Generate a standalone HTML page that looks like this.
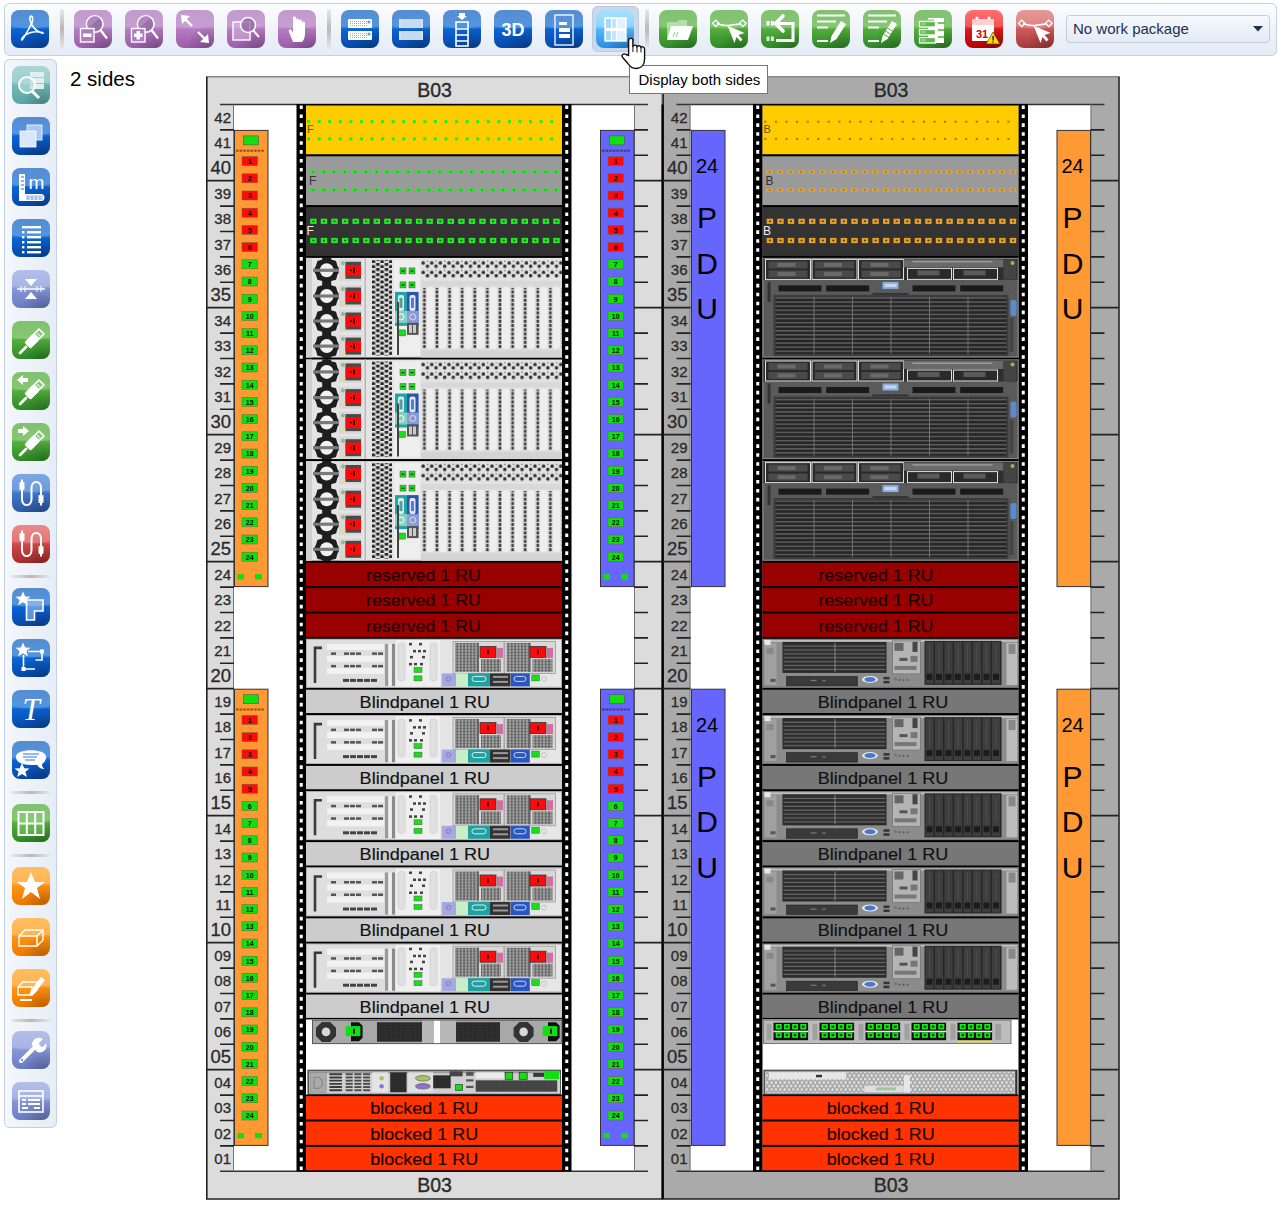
<!DOCTYPE html><html><head><meta charset="utf-8"><style>html,body{margin:0;padding:0;background:#fff;overflow:hidden}svg{display:block}</style></head><body><svg width="1287" height="1226" viewBox="0 0 1287 1226"><defs><linearGradient id="g_blue" x1="0" y1="0" x2="0" y2="1"><stop offset="0" stop-color="#3c7cca"/><stop offset="0.45" stop-color="#3a86dc"/><stop offset="0.5" stop-color="#0a64d6"/><stop offset="1" stop-color="#0848a6"/></linearGradient><linearGradient id="g_purple" x1="0" y1="0" x2="0" y2="1"><stop offset="0" stop-color="#b88cc4"/><stop offset="0.45" stop-color="#c090cc"/><stop offset="0.5" stop-color="#b57cc3"/><stop offset="1" stop-color="#9c5ca8"/></linearGradient><linearGradient id="g_green" x1="0" y1="0" x2="0" y2="1"><stop offset="0" stop-color="#6eb85a"/><stop offset="0.45" stop-color="#74c060"/><stop offset="0.5" stop-color="#52ae3c"/><stop offset="1" stop-color="#2e8a26"/></linearGradient><linearGradient id="g_teal" x1="0" y1="0" x2="0" y2="1"><stop offset="0" stop-color="#9fd0d0"/><stop offset="0.45" stop-color="#8ec6c6"/><stop offset="0.5" stop-color="#72b8b8"/><stop offset="1" stop-color="#5aa6a6"/></linearGradient><linearGradient id="g_orange" x1="0" y1="0" x2="0" y2="1"><stop offset="0" stop-color="#ffb54a"/><stop offset="0.45" stop-color="#ffa83a"/><stop offset="0.5" stop-color="#ff9410"/><stop offset="1" stop-color="#f07800"/></linearGradient><linearGradient id="g_red" x1="0" y1="0" x2="0" y2="1"><stop offset="0" stop-color="#ff5a5a"/><stop offset="0.45" stop-color="#f03c3c"/><stop offset="0.5" stop-color="#e01818"/><stop offset="1" stop-color="#b80000"/></linearGradient><linearGradient id="g_rose" x1="0" y1="0" x2="0" y2="1"><stop offset="0" stop-color="#e08a8a"/><stop offset="0.45" stop-color="#d87070"/><stop offset="0.5" stop-color="#cc5a5a"/><stop offset="1" stop-color="#a83a3a"/></linearGradient><linearGradient id="g_lav" x1="0" y1="0" x2="0" y2="1"><stop offset="0" stop-color="#a9b6e6"/><stop offset="0.45" stop-color="#9aa8e0"/><stop offset="0.5" stop-color="#8696d6"/><stop offset="1" stop-color="#6a7cc4"/></linearGradient><linearGradient id="g_active" x1="0" y1="0" x2="0" y2="1"><stop offset="0" stop-color="#9adcff"/><stop offset="0.45" stop-color="#7ccfff"/><stop offset="0.5" stop-color="#52b8f8"/><stop offset="1" stop-color="#2a8ce8"/></linearGradient><radialGradient id="icshade" cx="0.85" cy="1" r="0.6"><stop offset="0" stop-color="#000" stop-opacity="0.22"/><stop offset="1" stop-color="#000" stop-opacity="0"/></radialGradient><linearGradient id="tb_bg" x1="0" y1="0" x2="0" y2="1"><stop offset="0" stop-color="#fbfcfe"/><stop offset="1" stop-color="#e4ebf5"/></linearGradient><linearGradient id="tbl_bg" x1="0" y1="0" x2="1" y2="0"><stop offset="0" stop-color="#f4f7fb"/><stop offset="1" stop-color="#e6edf6"/></linearGradient><linearGradient id="sep" x1="0" y1="0" x2="0" y2="1"><stop offset="0" stop-color="#e8e8e8"/><stop offset="0.5" stop-color="#b8b8b8"/><stop offset="1" stop-color="#e8e8e8"/></linearGradient><linearGradient id="seph" x1="0" y1="0" x2="1" y2="0"><stop offset="0" stop-color="#e8e8e8"/><stop offset="0.5" stop-color="#b8b8b8"/><stop offset="1" stop-color="#e8e8e8"/></linearGradient><linearGradient id="dd_bg" x1="0" y1="0" x2="0" y2="1"><stop offset="0" stop-color="#f6f9fd"/><stop offset="1" stop-color="#e2eaf5"/></linearGradient><linearGradient id="g_ublue" x1="0" y1="0" x2="0" y2="1"><stop offset="0" stop-color="#6a9ae0"/><stop offset="0.45" stop-color="#5a8cd8"/><stop offset="0.5" stop-color="#4078c8"/><stop offset="1" stop-color="#2a5aa8"/></linearGradient><linearGradient id="g_ured" x1="0" y1="0" x2="0" y2="1"><stop offset="0" stop-color="#e87878"/><stop offset="0.45" stop-color="#e06262"/><stop offset="0.5" stop-color="#d04848"/><stop offset="1" stop-color="#a82a2a"/></linearGradient><pattern id="hexdots" width="8.7" height="5.1" patternUnits="userSpaceOnUse"><rect width="8.7" height="5.1" fill="#e6e6e6"/><circle cx="2.2" cy="1.3" r="1.95" fill="#2a2a2a"/><circle cx="6.5" cy="3.85" r="1.95" fill="#2a2a2a"/></pattern><pattern id="hexdots2" width="8.6" height="9.5" patternUnits="userSpaceOnUse"><rect width="8.6" height="9.5" fill="#e2e2e2"/><circle cx="2.15" cy="3" r="1.75" fill="#333"/><circle cx="6.45" cy="6.3" r="1.75" fill="#333"/><circle cx="6.45" cy="1.2" r="0.8" fill="#777"/></pattern><pattern id="psugrill" width="3.4" height="3" patternUnits="userSpaceOnUse"><rect width="3.4" height="3" fill="#a8a8a8"/><circle cx="1.7" cy="1.5" r="1.2" fill="#5a5a5a"/></pattern><pattern id="grill4b" width="10" height="4.1" patternUnits="userSpaceOnUse"><rect width="10" height="4.1" fill="#262626"/><rect y="2.6" width="10" height="1.2" fill="#6a6a6a"/></pattern><pattern id="grill2b" width="10" height="3.9" patternUnits="userSpaceOnUse"><rect width="10" height="3.9" fill="#2c2c2c"/><rect y="2.7" width="10" height="1.1" fill="#707070"/></pattern><pattern id="dotgrill" width="4.35" height="7" patternUnits="userSpaceOnUse"><rect width="4.35" height="7" fill="#a6a6a6"/><circle cx="1.1" cy="1.75" r="1.25" fill="#ececec"/><circle cx="3.27" cy="5.25" r="1.25" fill="#ececec"/></pattern><pattern id="darkgrill" width="3" height="3" patternUnits="userSpaceOnUse"><rect width="3" height="3" fill="#2a2a2a"/><circle cx="1.5" cy="1.5" r="0.8" fill="#383838"/></pattern><pattern id="pcie" width="12.6" height="65" patternUnits="userSpaceOnUse" x="116.5"><rect width="12.6" height="65" fill="#dcdcdc"/><rect x="3.6" y="1" width="8" height="62" rx="3" fill="#eeeeee"/><rect x="0.6" y="2" width="2.6" height="61" fill="#3a3a3a"/><rect x="0" y="3.3" width="4" height="1.2" fill="#dcdcdc"/><rect x="0" y="7.5" width="4" height="1.2" fill="#dcdcdc"/><rect x="0" y="11.7" width="4" height="1.2" fill="#dcdcdc"/><rect x="0" y="15.900000000000002" width="4" height="1.2" fill="#dcdcdc"/><rect x="0" y="20.1" width="4" height="1.2" fill="#dcdcdc"/><rect x="0" y="24.3" width="4" height="1.2" fill="#dcdcdc"/><rect x="0" y="28.500000000000004" width="4" height="1.2" fill="#dcdcdc"/><rect x="0" y="32.7" width="4" height="1.2" fill="#dcdcdc"/><rect x="0" y="36.9" width="4" height="1.2" fill="#dcdcdc"/><rect x="0" y="41.1" width="4" height="1.2" fill="#dcdcdc"/><rect x="0" y="45.3" width="4" height="1.2" fill="#dcdcdc"/><rect x="0" y="49.5" width="4" height="1.2" fill="#dcdcdc"/><rect x="0" y="53.7" width="4" height="1.2" fill="#dcdcdc"/><rect x="0" y="57.9" width="4" height="1.2" fill="#dcdcdc"/><rect x="0" y="62.1" width="4" height="1.2" fill="#dcdcdc"/></pattern></defs><rect x="0" y="0" width="1287" height="1226" fill="#ffffff"/><rect x="4.5" y="3.5" width="1272" height="52" rx="5" fill="url(#tb_bg)" stroke="#c3d0e3" stroke-width="1"/><rect x="592.5" y="6.5" width="46" height="45" rx="5" fill="#cbd8ea" stroke="#bccbe0" stroke-width="1"/><g transform="translate(11,10)"><rect x="0" y="0" width="38" height="38" rx="8" fill="url(#g_blue)"/><path d="M0 7 Q0 0 7 0 H31 Q38 0 38 7 V16 Q19.0 21 0 16 Z" fill="#ffffff" opacity="0.13"/><rect x="0" y="0" width="38" height="38" rx="8" fill="url(#icshade)"/><path d="M11 30 C14 26 17 20 21 13 C22 10 22 6 20 6 C18 7 19 11 21 15 C24 20 27 22 31 23 C33 24 32 22 29 22 C23 21 17 23 13 26 C11 28 10 30 11 30 Z" fill="none" stroke="#fff" stroke-width="1.6"/></g><g transform="translate(74,10)"><rect x="0" y="0" width="38" height="38" rx="8" fill="url(#g_purple)"/><path d="M0 7 Q0 0 7 0 H31 Q38 0 38 7 V16 Q19.0 21 0 16 Z" fill="#ffffff" opacity="0.13"/><rect x="0" y="0" width="38" height="38" rx="8" fill="url(#icshade)"/><circle cx="20.75" cy="14" r="8.3" fill="#9a70a8" stroke="#fff" stroke-width="1.6"/><path d="M14 18 A8 8 0 0 1 26 8 Z" fill="#b890c8" opacity="0.7"/><line x1="26.5" y1="20" x2="33" y2="28.5" stroke="#fff" stroke-width="2.2"/><rect x="6.5" y="18.5" width="13.5" height="13.5" fill="#b07cc0" stroke="#fff" stroke-width="1.4"/><rect x="9" y="23.5" width="8.5" height="3.5" fill="#fff"/></g><g transform="translate(125,10)"><rect x="0" y="0" width="38" height="38" rx="8" fill="url(#g_purple)"/><path d="M0 7 Q0 0 7 0 H31 Q38 0 38 7 V16 Q19.0 21 0 16 Z" fill="#ffffff" opacity="0.13"/><rect x="0" y="0" width="38" height="38" rx="8" fill="url(#icshade)"/><circle cx="20.75" cy="14" r="8.3" fill="#9a70a8" stroke="#fff" stroke-width="1.6"/><path d="M14 18 A8 8 0 0 1 26 8 Z" fill="#b890c8" opacity="0.7"/><line x1="26.5" y1="20" x2="33" y2="28.5" stroke="#fff" stroke-width="2.2"/><rect x="6.5" y="18.5" width="13.5" height="13.5" fill="#b07cc0" stroke="#fff" stroke-width="1.4"/><rect x="9" y="23.5" width="8.5" height="3.5" fill="#fff"/><rect x="11.5" y="21" width="3.5" height="8.5" fill="#fff"/></g><g transform="translate(176,10)"><rect x="0" y="0" width="38" height="38" rx="8" fill="url(#g_purple)"/><path d="M0 7 Q0 0 7 0 H31 Q38 0 38 7 V16 Q19.0 21 0 16 Z" fill="#ffffff" opacity="0.13"/><rect x="0" y="0" width="38" height="38" rx="8" fill="url(#icshade)"/><path d="M5 5 L14 6 L6 14 Z M33 33 L24 32 L32 24 Z" fill="#fff"/><line x1="8" y1="8" x2="16" y2="16" stroke="#fff" stroke-width="2.4"/><line x1="22" y1="22" x2="30" y2="30" stroke="#fff" stroke-width="2.4"/></g><g transform="translate(227,10)"><rect x="0" y="0" width="38" height="38" rx="8" fill="url(#g_purple)"/><path d="M0 7 Q0 0 7 0 H31 Q38 0 38 7 V16 Q19.0 21 0 16 Z" fill="#ffffff" opacity="0.13"/><rect x="0" y="0" width="38" height="38" rx="8" fill="url(#icshade)"/><rect x="6" y="12" width="17" height="18" fill="#d8b8e0" fill-opacity="0.5" stroke="#fff" stroke-width="1.4"/><circle cx="21" cy="15" r="7.5" fill="#8a60a0" fill-opacity="0.7" stroke="#fff" stroke-width="1.6"/><line x1="26" y1="20" x2="32" y2="27" stroke="#fff" stroke-width="2"/></g><g transform="translate(278,10)"><rect x="0" y="0" width="38" height="38" rx="8" fill="url(#g_purple)"/><path d="M0 7 Q0 0 7 0 H31 Q38 0 38 7 V16 Q19.0 21 0 16 Z" fill="#ffffff" opacity="0.13"/><rect x="0" y="0" width="38" height="38" rx="8" fill="url(#icshade)"/><path d="M15 32 L11 22 C10 19 13 19 14 21 L15 23 L15 8 C15 6 18 6 18 8 L18 17 L18 10 C18 8 21 8 21 10 L21 17 L21 11 C21 9 24 9 24 11 L24 18 L24 13 C24 11 27 11 27 13 L27 24 C27 28 25 31 24 32 Z" fill="#fff"/></g><g transform="translate(341,10)"><rect x="0" y="0" width="38" height="38" rx="8" fill="url(#g_blue)"/><path d="M0 7 Q0 0 7 0 H31 Q38 0 38 7 V16 Q19.0 21 0 16 Z" fill="#ffffff" opacity="0.13"/><rect x="0" y="0" width="38" height="38" rx="8" fill="url(#icshade)"/><rect x="7" y="9" width="24" height="9" rx="1" fill="#fff"/><rect x="7" y="21" width="24" height="9" rx="1" fill="#fff"/><path d="M9 11.5 H26 M9 13.5 H26 M9 15.5 H26 M9 23.5 H26 M9 25.5 H26 M9 27.5 H26" stroke="#6a9ad8" stroke-width="0.8" stroke-dasharray="1 1"/><circle cx="28" cy="12" r="1.6" fill="#6a9ad8"/><circle cx="28" cy="24" r="1.6" fill="#6a9ad8"/></g><g transform="translate(392,10)"><rect x="0" y="0" width="38" height="38" rx="8" fill="url(#g_blue)"/><path d="M0 7 Q0 0 7 0 H31 Q38 0 38 7 V16 Q19.0 21 0 16 Z" fill="#ffffff" opacity="0.13"/><rect x="0" y="0" width="38" height="38" rx="8" fill="url(#icshade)"/><rect x="7" y="9" width="24" height="9" fill="#c8daf0"/><rect x="7" y="21" width="24" height="9" fill="#c8daf0"/><path d="M8 10 V17 M30 10 V17 M8 22 V29 M30 22 V29" stroke="#fff" stroke-width="1" stroke-dasharray="1 1"/></g><g transform="translate(443,10)"><rect x="0" y="0" width="38" height="38" rx="8" fill="url(#g_blue)"/><path d="M0 7 Q0 0 7 0 H31 Q38 0 38 7 V16 Q19.0 21 0 16 Z" fill="#ffffff" opacity="0.13"/><rect x="0" y="0" width="38" height="38" rx="8" fill="url(#icshade)"/><path d="M16 3 H22 V6 H24 L19 10 L14 6 H16 Z" fill="#fff"/><rect x="13" y="12" width="12" height="24" fill="none" stroke="#fff" stroke-width="1.6"/><path d="M13 19 H25 M13 25 H25 M13 31 H25" stroke="#fff" stroke-width="1.4"/></g><g transform="translate(494,10)"><rect x="0" y="0" width="38" height="38" rx="8" fill="url(#g_blue)"/><path d="M0 7 Q0 0 7 0 H31 Q38 0 38 7 V16 Q19.0 21 0 16 Z" fill="#ffffff" opacity="0.13"/><rect x="0" y="0" width="38" height="38" rx="8" fill="url(#icshade)"/><text x="19" y="26" font-family='"Liberation Sans", sans-serif' font-weight="bold" font-size="18" fill="#fff" text-anchor="middle">3D</text></g><g transform="translate(545,10)"><rect x="0" y="0" width="38" height="38" rx="8" fill="url(#g_blue)"/><path d="M0 7 Q0 0 7 0 H31 Q38 0 38 7 V16 Q19.0 21 0 16 Z" fill="#ffffff" opacity="0.13"/><rect x="0" y="0" width="38" height="38" rx="8" fill="url(#icshade)"/><rect x="10" y="5" width="18" height="30" fill="none" stroke="#fff" stroke-width="1.3"/><rect x="14" y="12" width="8" height="3" fill="#fff"/><rect x="14" y="18" width="11" height="4" fill="#fff"/><rect x="14" y="24" width="11" height="4" fill="#fff"/></g><g transform="translate(596,10)"><rect x="0" y="0" width="38" height="38" rx="8" fill="url(#g_active)"/><path d="M0 7 Q0 0 7 0 H31 Q38 0 38 7 V16 Q19.0 21 0 16 Z" fill="#ffffff" opacity="0.13"/><rect x="0" y="0" width="38" height="38" rx="8" fill="url(#icshade)"/><rect x="9" y="8" width="21" height="23" fill="#e0f4ff" stroke="#fff" stroke-width="1.4"/><rect x="10" y="9" width="5" height="9" fill="#a8d8f8"/><rect x="16" y="9" width="4" height="9" fill="#c0e4fa"/><rect x="10" y="21" width="5" height="9" fill="#a8d8f8"/><rect x="16" y="21" width="4" height="9" fill="#c0e4fa"/><path d="M9 19.5 H30" stroke="#fff" stroke-width="3"/><path d="M15.5 8 V31 M20.5 8 V18 M20.5 21 V31" stroke="#fff" stroke-width="1.2"/></g><g transform="translate(659,10)"><rect x="0" y="0" width="38" height="38" rx="8" fill="url(#g_green)"/><path d="M0 7 Q0 0 7 0 H31 Q38 0 38 7 V16 Q19.0 21 0 16 Z" fill="#ffffff" opacity="0.13"/><rect x="0" y="0" width="38" height="38" rx="8" fill="url(#icshade)"/><path d="M8 12 H18 L20 10 H28 V29 H8 Z" fill="#c8e8c0" fill-opacity="0.7"/><path d="M8 30 L12 16 H34 L29 30 Z" fill="#fff"/><path d="M14 27 L16 22 M17 27 L19 22" stroke="#8cc880" stroke-width="1"/></g><g transform="translate(710,10)"><rect x="0" y="0" width="38" height="38" rx="8" fill="url(#g_green)"/><path d="M0 7 Q0 0 7 0 H31 Q38 0 38 7 V16 Q19.0 21 0 16 Z" fill="#ffffff" opacity="0.13"/><rect x="0" y="0" width="38" height="38" rx="8" fill="url(#icshade)"/><path d="M7 13.5 C11 15 15 15.8 17.5 15.5 C22 15 28 14.5 31 13.5" fill="none" stroke="#fff" stroke-width="1.5"/><rect x="3.5" y="11" width="4.6" height="4.6" fill="none" stroke="#fff" stroke-width="1.3" transform="rotate(45 5.8 13.3)"/><rect x="30.5" y="11" width="4.6" height="4.6" fill="none" stroke="#fff" stroke-width="1.3" transform="rotate(45 32.8 13.3)"/><path d="M17.5 15.5 L24.5 33 L26.5 27 L30.5 31.5 L32.5 29.5 L28.5 25 L34.5 23 Z" fill="#fff"/></g><g transform="translate(761,10)"><rect x="0" y="0" width="38" height="38" rx="8" fill="url(#g_green)"/><path d="M0 7 Q0 0 7 0 H31 Q38 0 38 7 V16 Q19.0 21 0 16 Z" fill="#ffffff" opacity="0.13"/><rect x="0" y="0" width="38" height="38" rx="8" fill="url(#icshade)"/><rect x="5.5" y="11" width="3" height="4.5" fill="#fff"/><rect x="9.9" y="11" width="3" height="4.5" fill="#fff"/><rect x="5.5" y="26.5" width="3" height="4.5" fill="#fff" opacity="0.8"/><rect x="9.9" y="26.5" width="3" height="4.5" fill="#fff" opacity="0.8"/><path d="M15 13.5 H32 V30.5 H15" fill="none" stroke="#fff" stroke-width="3"/><path d="M22 6 L14.5 13.5 L22 21" fill="none" stroke="#fff" stroke-width="3.6" stroke-linecap="round" stroke-linejoin="round"/></g><g transform="translate(812,10)"><rect x="0" y="0" width="38" height="38" rx="8" fill="url(#g_green)"/><path d="M0 7 Q0 0 7 0 H31 Q38 0 38 7 V16 Q19.0 21 0 16 Z" fill="#ffffff" opacity="0.13"/><rect x="0" y="0" width="38" height="38" rx="8" fill="url(#icshade)"/><path d="M5 5.5 H33 M5 11.5 H24 M5 17.5 H16 M5 31 H16" stroke="#fff" stroke-width="2"/><path d="M18 33 L19.5 26 L29 11 L34 14 L24.5 29 Z" fill="#fff"/></g><g transform="translate(863,10)"><rect x="0" y="0" width="38" height="38" rx="8" fill="url(#g_green)"/><path d="M0 7 Q0 0 7 0 H31 Q38 0 38 7 V16 Q19.0 21 0 16 Z" fill="#ffffff" opacity="0.13"/><rect x="0" y="0" width="38" height="38" rx="8" fill="url(#icshade)"/><path d="M5 5.5 H33 M5 11.5 H24 M5 17.5 H16 M5 31 H16" stroke="#fff" stroke-width="2"/><path d="M18 33 L19.5 26 L29 11 L34 14 L24.5 29 Z" fill="#fff"/><path d="M20.5 24 L26 27.5 M22.5 21 L28 24.5 M24.5 18 L30 21.5" stroke="#52ae3c" stroke-width="1"/></g><g transform="translate(914,10)"><rect x="0" y="0" width="38" height="38" rx="8" fill="url(#g_green)"/><path d="M0 7 Q0 0 7 0 H31 Q38 0 38 7 V16 Q19.0 21 0 16 Z" fill="#ffffff" opacity="0.13"/><rect x="0" y="0" width="38" height="38" rx="8" fill="url(#icshade)"/><path d="M14 8 H30 V33 H14 Z" fill="#fff"/><path d="M24 13 H31 M24 20 H31 M24 27 H31" stroke="#52ae3c" stroke-width="1.6"/><rect x="14" y="9.5" width="6" height="2" fill="#8cd080"/><rect x="5.5" y="11.5" width="16" height="5.5" fill="#5cb848" stroke="#fff" stroke-width="1.3"/><rect x="5.5" y="19.5" width="16" height="5.5" fill="#5cb848" stroke="#fff" stroke-width="1.3"/><rect x="5.5" y="27.5" width="16" height="5.5" fill="#5cb848" stroke="#fff" stroke-width="1.3"/><rect x="7" y="13" width="5" height="2.5" fill="#8cd080"/><rect x="7" y="21" width="5" height="2.5" fill="#8cd080"/><rect x="7" y="29" width="5" height="2.5" fill="#8cd080"/></g><g transform="translate(965,10)"><rect x="0" y="0" width="38" height="38" rx="8" fill="url(#g_red)"/><path d="M0 7 Q0 0 7 0 H31 Q38 0 38 7 V16 Q19.0 21 0 16 Z" fill="#ffffff" opacity="0.13"/><rect x="0" y="0" width="38" height="38" rx="8" fill="url(#icshade)"/><rect x="7" y="9" width="22" height="22" fill="#fff"/><rect x="7" y="9" width="22" height="6" fill="#ffd0d0"/><circle cx="12" cy="8" r="1.6" fill="#fff"/><circle cx="24" cy="8" r="1.6" fill="#fff"/><text x="17" y="28" font-family='"Liberation Sans", sans-serif' font-weight="bold" font-size="11" fill="#c00" text-anchor="middle">31</text><path d="M28 22 L35 34 H21 Z" fill="#ffd800" stroke="#333" stroke-width="0.6"/><rect x="27.5" y="26" width="1.2" height="4.5" fill="#000"/><rect x="27.5" y="31.5" width="1.2" height="1.2" fill="#000"/></g><g transform="translate(1016,10)"><rect x="0" y="0" width="38" height="38" rx="8" fill="url(#g_rose)"/><path d="M0 7 Q0 0 7 0 H31 Q38 0 38 7 V16 Q19.0 21 0 16 Z" fill="#ffffff" opacity="0.13"/><rect x="0" y="0" width="38" height="38" rx="8" fill="url(#icshade)"/><path d="M7 13.5 C11 15 15 15.8 17.5 15.5 C22 15 28 14.5 31 13.5" fill="none" stroke="#fff" stroke-width="1.5"/><rect x="3.5" y="11" width="4.6" height="4.6" fill="none" stroke="#fff" stroke-width="1.3" transform="rotate(45 5.8 13.3)"/><rect x="30.5" y="11" width="4.6" height="4.6" fill="none" stroke="#fff" stroke-width="1.3" transform="rotate(45 32.8 13.3)"/><path d="M17.5 15.5 L24.5 33 L26.5 27 L30.5 31.5 L32.5 29.5 L28.5 25 L34.5 23 Z" fill="#fff"/></g><rect x="60" y="9" width="4" height="40" rx="2" fill="url(#sep)"/><rect x="327" y="9" width="4" height="40" rx="2" fill="url(#sep)"/><rect x="645" y="9" width="4" height="40" rx="2" fill="url(#sep)"/><rect x="1066.5" y="15.5" width="203" height="27" rx="3" fill="url(#dd_bg)" stroke="#c0cde0" stroke-width="1"/><text x="1073" y="34" font-family='"Liberation Sans", sans-serif' font-size="15" fill="#1e3050">No work package</text><path d="M1253 26 H1263 L1258 31.5 Z" fill="#1e3050"/><rect x="4.5" y="59.5" width="52" height="1068" rx="5" fill="url(#tbl_bg)" stroke="#c3d0e3" stroke-width="1"/><g transform="translate(12,66)"><rect x="0" y="0" width="38" height="38" rx="8" fill="url(#g_teal)"/><path d="M0 7 Q0 0 7 0 H31 Q38 0 38 7 V16 Q19.0 21 0 16 Z" fill="#ffffff" opacity="0.13"/><rect x="0" y="0" width="38" height="38" rx="8" fill="url(#icshade)"/><rect x="18" y="6" width="14" height="5" fill="#e0f0f0"/><rect x="18" y="12" width="14" height="5" fill="#e0f0f0"/><rect x="18" y="18" width="14" height="5" fill="#e0f0f0"/><circle cx="15" cy="19" r="8" fill="#b8e0e0" fill-opacity="0.6" stroke="#fff" stroke-width="2"/><line x1="20" y1="25" x2="27" y2="32" stroke="#fff" stroke-width="3"/></g><g transform="translate(12,117)"><rect x="0" y="0" width="38" height="38" rx="8" fill="url(#g_blue)"/><path d="M0 7 Q0 0 7 0 H31 Q38 0 38 7 V16 Q19.0 21 0 16 Z" fill="#ffffff" opacity="0.13"/><rect x="0" y="0" width="38" height="38" rx="8" fill="url(#icshade)"/><rect x="15" y="8" width="15" height="15" fill="#a8c8f0" stroke="#fff" stroke-width="0.8"/><rect x="8" y="14" width="16" height="16" fill="#d8e8fa" stroke="#fff" stroke-width="0.8"/></g><g transform="translate(12,168)"><rect x="0" y="0" width="38" height="38" rx="8" fill="url(#g_blue)"/><path d="M0 7 Q0 0 7 0 H31 Q38 0 38 7 V16 Q19.0 21 0 16 Z" fill="#ffffff" opacity="0.13"/><rect x="0" y="0" width="38" height="38" rx="8" fill="url(#icshade)"/><path d="M7 6 H13 V26 H29 A3.5 3.5 0 0 1 29 33 H7 Z" fill="#fff"/><path d="M9 9 H12 M9 13 H12 M9 17 H12 M9 21 H12 M16 28 V32 M20 28 V32 M24 28 V32 M28 28 V32" stroke="#1a6fd8" stroke-width="1"/><rect x="14" y="27" width="17" height="5" fill="#a8c8f0" opacity="0.6"/><text x="24.5" y="21" font-family='"Liberation Sans", sans-serif' font-size="19" fill="#fff" text-anchor="middle">m</text></g><g transform="translate(12,219)"><rect x="0" y="0" width="38" height="38" rx="8" fill="url(#g_blue)"/><path d="M0 7 Q0 0 7 0 H31 Q38 0 38 7 V16 Q19.0 21 0 16 Z" fill="#ffffff" opacity="0.13"/><rect x="0" y="0" width="38" height="38" rx="8" fill="url(#icshade)"/><rect x="10" y="7" width="19" height="2.4" fill="#fff"/><rect x="10" y="12" width="2.4" height="2.4" fill="#fff"/><rect x="15" y="12" width="14" height="2.4" fill="#fff"/><rect x="10" y="17" width="2.4" height="2.4" fill="#fff"/><rect x="15" y="17" width="14" height="2.4" fill="#fff"/><rect x="10" y="22" width="2.4" height="2.4" fill="#fff"/><rect x="15" y="22" width="14" height="2.4" fill="#fff"/><rect x="10" y="27" width="2.4" height="2.4" fill="#fff"/><rect x="15" y="27" width="14" height="2.4" fill="#fff"/><rect x="10" y="32" width="2.4" height="2.4" fill="#fff"/><rect x="15" y="32" width="14" height="2.4" fill="#fff"/></g><g transform="translate(12,270)"><rect x="0" y="0" width="38" height="38" rx="8" fill="url(#g_lav)"/><path d="M0 7 Q0 0 7 0 H31 Q38 0 38 7 V16 Q19.0 21 0 16 Z" fill="#ffffff" opacity="0.13"/><rect x="0" y="0" width="38" height="38" rx="8" fill="url(#icshade)"/><path d="M5 19 H33" stroke="#fff" stroke-width="1.5"/><path d="M9 16 V22 M13 16 V22 M25 16 V22 M29 16 V22" stroke="#fff" stroke-width="1"/><path d="M13 9 H25 L19 16 Z M13 29 H25 L19 22 Z" fill="#fff"/></g><g transform="translate(12,321)"><rect x="0" y="0" width="38" height="38" rx="8" fill="url(#g_green)"/><path d="M0 7 Q0 0 7 0 H31 Q38 0 38 7 V16 Q19.0 21 0 16 Z" fill="#ffffff" opacity="0.13"/><rect x="0" y="0" width="38" height="38" rx="8" fill="url(#icshade)"/><path d="M8 32 L14 26" stroke="#fff" stroke-width="2.8" stroke-linecap="round"/><g transform="rotate(-45 21 19)"><rect x="13" y="14.5" width="13" height="9" rx="1.5" fill="#fff"/><rect x="26" y="15.5" width="7" height="7" fill="none" stroke="#fff" stroke-width="1.6"/><rect x="28" y="17.5" width="1.6" height="1.4" fill="#fff"/><rect x="28" y="19.8" width="1.6" height="1.4" fill="#fff"/></g></g><g transform="translate(12,372)"><rect x="0" y="0" width="38" height="38" rx="8" fill="url(#g_green)"/><path d="M0 7 Q0 0 7 0 H31 Q38 0 38 7 V16 Q19.0 21 0 16 Z" fill="#ffffff" opacity="0.13"/><rect x="0" y="0" width="38" height="38" rx="8" fill="url(#icshade)"/><path d="M8 32 L14 26" stroke="#fff" stroke-width="2.8" stroke-linecap="round"/><g transform="rotate(-45 21 19)"><rect x="13" y="14.5" width="13" height="9" rx="1.5" fill="#fff"/><rect x="26" y="15.5" width="7" height="7" fill="none" stroke="#fff" stroke-width="1.6"/><rect x="28" y="17.5" width="1.6" height="1.4" fill="#fff"/><rect x="28" y="19.8" width="1.6" height="1.4" fill="#fff"/></g><path d="M5 8 L11 3 V6 H16 V10 H11 V13 Z" fill="#fff"/></g><g transform="translate(12,423)"><rect x="0" y="0" width="38" height="38" rx="8" fill="url(#g_green)"/><path d="M0 7 Q0 0 7 0 H31 Q38 0 38 7 V16 Q19.0 21 0 16 Z" fill="#ffffff" opacity="0.13"/><rect x="0" y="0" width="38" height="38" rx="8" fill="url(#icshade)"/><path d="M8 32 L14 26" stroke="#fff" stroke-width="2.8" stroke-linecap="round"/><g transform="rotate(-45 21 19)"><rect x="13" y="14.5" width="13" height="9" rx="1.5" fill="#fff"/><rect x="26" y="15.5" width="7" height="7" fill="none" stroke="#fff" stroke-width="1.6"/><rect x="28" y="17.5" width="1.6" height="1.4" fill="#fff"/><rect x="28" y="19.8" width="1.6" height="1.4" fill="#fff"/></g><path d="M17 8 L11 3 V6 H6 V10 H11 V13 Z" fill="#fff"/></g><g transform="translate(12,474)"><rect x="0" y="0" width="38" height="38" rx="8" fill="url(#g_ublue)"/><path d="M0 7 Q0 0 7 0 H31 Q38 0 38 7 V16 Q19.0 21 0 16 Z" fill="#ffffff" opacity="0.13"/><rect x="0" y="0" width="38" height="38" rx="8" fill="url(#icshade)"/><path d="M10 15 V25 C10 33 19.5 33 19.5 25 V14 C19.5 6 29 6 29 14 V22" fill="none" stroke="#fff" stroke-width="2"/><rect x="7.5" y="8" width="5" height="8" rx="1" fill="#fff"/><rect x="9" y="5.5" width="2" height="3" fill="#fff"/><rect x="26.5" y="21" width="5" height="8" rx="1" fill="#fff"/><rect x="28" y="28.5" width="2" height="3" fill="#fff"/></g><g transform="translate(12,525)"><rect x="0" y="0" width="38" height="38" rx="8" fill="url(#g_ured)"/><path d="M0 7 Q0 0 7 0 H31 Q38 0 38 7 V16 Q19.0 21 0 16 Z" fill="#ffffff" opacity="0.13"/><rect x="0" y="0" width="38" height="38" rx="8" fill="url(#icshade)"/><path d="M10 15 V25 C10 33 19.5 33 19.5 25 V14 C19.5 6 29 6 29 14 V22" fill="none" stroke="#fff" stroke-width="2"/><rect x="7.5" y="8" width="5" height="8" rx="1" fill="#fff"/><rect x="9" y="5.5" width="2" height="3" fill="#fff"/><rect x="26.5" y="21" width="5" height="8" rx="1" fill="#fff"/><rect x="28" y="28.5" width="2" height="3" fill="#fff"/></g><g transform="translate(12,588)"><rect x="0" y="0" width="38" height="38" rx="8" fill="url(#g_blue)"/><path d="M0 7 Q0 0 7 0 H31 Q38 0 38 7 V16 Q19.0 21 0 16 Z" fill="#ffffff" opacity="0.13"/><rect x="0" y="0" width="38" height="38" rx="8" fill="url(#icshade)"/><path d="M14.5 12 H31 V23 H22.5 V32 H14.5 Z" fill="#a8c8f0" fill-opacity="0.55" stroke="#fff" stroke-width="1.6"/><path d="M11 3.5 L13.2 8.6 L18.5 8.8 L14.4 12.1 L15.9 17.3 L11 14.3 L6.1 17.3 L7.6 12.1 L3.5 8.8 L8.8 8.6 Z" fill="#fff"/></g><g transform="translate(12,639)"><rect x="0" y="0" width="38" height="38" rx="8" fill="url(#g_blue)"/><path d="M0 7 Q0 0 7 0 H31 Q38 0 38 7 V16 Q19.0 21 0 16 Z" fill="#ffffff" opacity="0.13"/><rect x="0" y="0" width="38" height="38" rx="8" fill="url(#icshade)"/><path d="M11.5 16 V30 H23 M16 12.5 H30 V21 H23.5" fill="none" stroke="#fff" stroke-width="1.6"/><rect x="28" y="10.5" width="4" height="4" fill="#fff"/><rect x="9.5" y="28" width="4" height="4" fill="#fff"/><path d="M11 3.5 L13.2 8.6 L18.5 8.8 L14.4 12.1 L15.9 17.3 L11 14.3 L6.1 17.3 L7.6 12.1 L3.5 8.8 L8.8 8.6 Z" fill="#fff"/></g><g transform="translate(12,690)"><rect x="0" y="0" width="38" height="38" rx="8" fill="url(#g_blue)"/><path d="M0 7 Q0 0 7 0 H31 Q38 0 38 7 V16 Q19.0 21 0 16 Z" fill="#ffffff" opacity="0.13"/><rect x="0" y="0" width="38" height="38" rx="8" fill="url(#icshade)"/><text x="19" y="30" font-family='"Liberation Serif", serif' font-style="italic" font-size="31" fill="#fff" text-anchor="middle">T</text></g><g transform="translate(12,741)"><rect x="0" y="0" width="38" height="38" rx="8" fill="url(#g_blue)"/><path d="M0 7 Q0 0 7 0 H31 Q38 0 38 7 V16 Q19.0 21 0 16 Z" fill="#ffffff" opacity="0.13"/><rect x="0" y="0" width="38" height="38" rx="8" fill="url(#icshade)"/><path d="M4 15.5 C4 7 34 7 34 15.5 C34 20.5 31 22.5 30 23 C30 25.5 31 27 32.5 28 C28 28 26 25.5 25.5 24 L20 24 C9 24 4 21 4 15.5 Z" fill="#fff"/><path d="M11 13 H27 M11 16 H25 M13 19 H23" stroke="#2a7ad8" stroke-width="1"/><path d="M10 22 L12.2 27.2 L17.5 27.4 L13.4 30.7 L14.9 35.9 L10 32.9 L5.1 35.9 L6.6 30.7 L2.5 27.4 L7.8 27.2 Z" fill="#fff"/></g><g transform="translate(12,804)"><rect x="0" y="0" width="38" height="38" rx="8" fill="url(#g_green)"/><path d="M0 7 Q0 0 7 0 H31 Q38 0 38 7 V16 Q19.0 21 0 16 Z" fill="#ffffff" opacity="0.13"/><rect x="0" y="0" width="38" height="38" rx="8" fill="url(#icshade)"/><rect x="6.5" y="8" width="25" height="23" fill="#8ccc78" fill-opacity="0.45" stroke="#fff" stroke-width="2"/><path d="M6.5 19.5 H31.5 M14.8 8 V31 M23.2 8 V31" stroke="#fff" stroke-width="2"/></g><g transform="translate(12,867)"><rect x="0" y="0" width="38" height="38" rx="8" fill="url(#g_orange)"/><path d="M0 7 Q0 0 7 0 H31 Q38 0 38 7 V16 Q19.0 21 0 16 Z" fill="#ffffff" opacity="0.13"/><rect x="0" y="0" width="38" height="38" rx="8" fill="url(#icshade)"/><path d="M19 5 L23 15 L33 15 L25 21 L28 32 L19 25 L10 32 L13 21 L5 15 L15 15 Z" fill="#fff"/></g><g transform="translate(12,918)"><rect x="0" y="0" width="38" height="38" rx="8" fill="url(#g_orange)"/><path d="M0 7 Q0 0 7 0 H31 Q38 0 38 7 V16 Q19.0 21 0 16 Z" fill="#ffffff" opacity="0.13"/><rect x="0" y="0" width="38" height="38" rx="8" fill="url(#icshade)"/><path d="M7 18 L13 12 H31 V22 L25 28 H7 Z M7 18 H25 V28 M25 18 L31 12" fill="none" stroke="#fff" stroke-width="1.4"/></g><g transform="translate(12,969)"><rect x="0" y="0" width="38" height="38" rx="8" fill="url(#g_orange)"/><path d="M0 7 Q0 0 7 0 H31 Q38 0 38 7 V16 Q19.0 21 0 16 Z" fill="#ffffff" opacity="0.13"/><rect x="0" y="0" width="38" height="38" rx="8" fill="url(#icshade)"/><path d="M6 18 L11 13 H25 V21 L20 26 H6 Z M6 18 H20 V26" fill="none" stroke="#fff" stroke-width="1.4"/><path d="M8 31 H20" stroke="#fff" stroke-width="2"/><path d="M17 27 L19 21 L29 8 L33 11 L23 24 Z" fill="#fff"/></g><g transform="translate(12,1031)"><rect x="0" y="0" width="38" height="38" rx="8" fill="url(#g_lav)"/><path d="M0 7 Q0 0 7 0 H31 Q38 0 38 7 V16 Q19.0 21 0 16 Z" fill="#ffffff" opacity="0.13"/><rect x="0" y="0" width="38" height="38" rx="8" fill="url(#icshade)"/><path d="M9 30 L22 17" stroke="#fff" stroke-width="4" stroke-linecap="round"/><path d="M20 14 C20 8 26 5 31 8 L27 12 L28 15 L31 16 L34 12 C36 18 31 23 25 21 Z" fill="#fff"/><circle cx="10" cy="29" r="1.2" fill="#7888d0"/></g><g transform="translate(12,1082)"><rect x="0" y="0" width="38" height="38" rx="8" fill="url(#g_lav)"/><path d="M0 7 Q0 0 7 0 H31 Q38 0 38 7 V16 Q19.0 21 0 16 Z" fill="#ffffff" opacity="0.13"/><rect x="0" y="0" width="38" height="38" rx="8" fill="url(#icshade)"/><rect x="7" y="9" width="24" height="21" fill="none" stroke="#fff" stroke-width="1.6"/><path d="M7 14 H31" stroke="#fff" stroke-width="1.6"/><rect x="10" y="17" width="4" height="2" fill="#fff"/><rect x="16" y="17" width="12" height="2" fill="#fff"/><rect x="10" y="21" width="4" height="2" fill="#fff"/><rect x="16" y="21" width="12" height="2" fill="#fff"/><rect x="10" y="25" width="6" height="2" fill="#fff"/><rect x="22" y="25" width="6" height="2" fill="#fff"/></g><rect x="11" y="575" width="40" height="3" rx="1.5" fill="url(#seph)"/><rect x="11" y="791" width="40" height="3" rx="1.5" fill="url(#seph)"/><rect x="11" y="854" width="40" height="3" rx="1.5" fill="url(#seph)"/><rect x="11" y="1019" width="40" height="3" rx="1.5" fill="url(#seph)"/><text x="70" y="85.5" font-family='"Liberation Sans", sans-serif' font-size="20.5" fill="#000">2 sides</text><rect x="206" y="76.5" width="456" height="122.5" fill="#dcdcdc"/><rect x="206" y="76.5" width="456" height="1122.5" fill="#dcdcdc"/><rect x="234" y="104.5" width="63" height="1067" fill="#ffffff"/><rect x="571" y="104.5" width="63" height="1067" fill="#ffffff"/><rect x="297" y="104.5" width="274" height="1067" fill="#ffffff"/><path d="M206.75 1199 V76.75 H662" fill="none" stroke="#888" stroke-width="1.5"/><path d="M206.75 1199 V76.75" fill="none" stroke="#222" stroke-width="1.5"/><path d="M206 1199 H662.5 V76.5" fill="none" stroke="#222" stroke-width="1.6"/><text x="434.6" y="97.4" font-family='"Liberation Sans", sans-serif' font-size="19.5" fill="#2a2a2a" stroke="#2a2a2a" stroke-width="0.35" text-anchor="middle">B03</text><text x="434.6" y="1192.4" font-family='"Liberation Sans", sans-serif' font-size="19.5" fill="#2a2a2a" stroke="#2a2a2a" stroke-width="0.35" text-anchor="middle">B03</text><path d="M220 104.5 H648 M220 1171.3 H648" stroke="#333" stroke-width="1.5"/><path d="M233.5 104.5 V1171.3 M634.5 104.5 V1171.3" stroke="#777" stroke-width="1"/><text x="231" y="122.7" font-family='"Liberation Sans", sans-serif' font-size="15" fill="#2a2a2a" stroke="#2a2a2a" stroke-width="0.3" text-anchor="end">42</text><path d="M220 129.9 H234 M634 129.9 H648" stroke="#222" stroke-width="1.6"/><text x="231" y="148.1" font-family='"Liberation Sans", sans-serif' font-size="15" fill="#2a2a2a" stroke="#2a2a2a" stroke-width="0.3" text-anchor="end">41</text><path d="M220 155.3 H234 M634 155.3 H648" stroke="#222" stroke-width="1.6"/><text x="231" y="174.4" font-family='"Liberation Sans", sans-serif' font-size="18.5" fill="#2a2a2a" stroke="#2a2a2a" stroke-width="0.3" text-anchor="end">40</text><path d="M206 180.7 H234 M634 180.7 H662" stroke="#222" stroke-width="1.8"/><text x="231" y="198.9" font-family='"Liberation Sans", sans-serif' font-size="15" fill="#2a2a2a" stroke="#2a2a2a" stroke-width="0.3" text-anchor="end">39</text><path d="M220 206.1 H234 M634 206.1 H648" stroke="#222" stroke-width="1.6"/><text x="231" y="224.3" font-family='"Liberation Sans", sans-serif' font-size="15" fill="#2a2a2a" stroke="#2a2a2a" stroke-width="0.3" text-anchor="end">38</text><path d="M220 231.5 H234 M634 231.5 H648" stroke="#222" stroke-width="1.6"/><text x="231" y="249.7" font-family='"Liberation Sans", sans-serif' font-size="15" fill="#2a2a2a" stroke="#2a2a2a" stroke-width="0.3" text-anchor="end">37</text><path d="M220 256.9 H234 M634 256.9 H648" stroke="#222" stroke-width="1.6"/><text x="231" y="275.1" font-family='"Liberation Sans", sans-serif' font-size="15" fill="#2a2a2a" stroke="#2a2a2a" stroke-width="0.3" text-anchor="end">36</text><path d="M220 282.3 H234 M634 282.3 H648" stroke="#222" stroke-width="1.6"/><text x="231" y="301.4" font-family='"Liberation Sans", sans-serif' font-size="18.5" fill="#2a2a2a" stroke="#2a2a2a" stroke-width="0.3" text-anchor="end">35</text><path d="M206 307.7 H234 M634 307.7 H662" stroke="#222" stroke-width="1.8"/><text x="231" y="325.9" font-family='"Liberation Sans", sans-serif' font-size="15" fill="#2a2a2a" stroke="#2a2a2a" stroke-width="0.3" text-anchor="end">34</text><path d="M220 333.1 H234 M634 333.1 H648" stroke="#222" stroke-width="1.6"/><text x="231" y="351.3" font-family='"Liberation Sans", sans-serif' font-size="15" fill="#2a2a2a" stroke="#2a2a2a" stroke-width="0.3" text-anchor="end">33</text><path d="M220 358.5 H234 M634 358.5 H648" stroke="#222" stroke-width="1.6"/><text x="231" y="376.7" font-family='"Liberation Sans", sans-serif' font-size="15" fill="#2a2a2a" stroke="#2a2a2a" stroke-width="0.3" text-anchor="end">32</text><path d="M220 383.9 H234 M634 383.9 H648" stroke="#222" stroke-width="1.6"/><text x="231" y="402.1" font-family='"Liberation Sans", sans-serif' font-size="15" fill="#2a2a2a" stroke="#2a2a2a" stroke-width="0.3" text-anchor="end">31</text><path d="M220 409.3 H234 M634 409.3 H648" stroke="#222" stroke-width="1.6"/><text x="231" y="428.4" font-family='"Liberation Sans", sans-serif' font-size="18.5" fill="#2a2a2a" stroke="#2a2a2a" stroke-width="0.3" text-anchor="end">30</text><path d="M206 434.7 H234 M634 434.7 H662" stroke="#222" stroke-width="1.8"/><text x="231" y="452.9" font-family='"Liberation Sans", sans-serif' font-size="15" fill="#2a2a2a" stroke="#2a2a2a" stroke-width="0.3" text-anchor="end">29</text><path d="M220 460.1 H234 M634 460.1 H648" stroke="#222" stroke-width="1.6"/><text x="231" y="478.3" font-family='"Liberation Sans", sans-serif' font-size="15" fill="#2a2a2a" stroke="#2a2a2a" stroke-width="0.3" text-anchor="end">28</text><path d="M220 485.5 H234 M634 485.5 H648" stroke="#222" stroke-width="1.6"/><text x="231" y="503.7" font-family='"Liberation Sans", sans-serif' font-size="15" fill="#2a2a2a" stroke="#2a2a2a" stroke-width="0.3" text-anchor="end">27</text><path d="M220 510.9 H234 M634 510.9 H648" stroke="#222" stroke-width="1.6"/><text x="231" y="529.1" font-family='"Liberation Sans", sans-serif' font-size="15" fill="#2a2a2a" stroke="#2a2a2a" stroke-width="0.3" text-anchor="end">26</text><path d="M220 536.3 H234 M634 536.3 H648" stroke="#222" stroke-width="1.6"/><text x="231" y="555.4" font-family='"Liberation Sans", sans-serif' font-size="18.5" fill="#2a2a2a" stroke="#2a2a2a" stroke-width="0.3" text-anchor="end">25</text><path d="M206 561.7 H234 M634 561.7 H662" stroke="#222" stroke-width="1.8"/><text x="231" y="579.9" font-family='"Liberation Sans", sans-serif' font-size="15" fill="#2a2a2a" stroke="#2a2a2a" stroke-width="0.3" text-anchor="end">24</text><path d="M220 587.1 H234 M634 587.1 H648" stroke="#222" stroke-width="1.6"/><text x="231" y="605.3" font-family='"Liberation Sans", sans-serif' font-size="15" fill="#2a2a2a" stroke="#2a2a2a" stroke-width="0.3" text-anchor="end">23</text><path d="M220 612.5 H234 M634 612.5 H648" stroke="#222" stroke-width="1.6"/><text x="231" y="630.7" font-family='"Liberation Sans", sans-serif' font-size="15" fill="#2a2a2a" stroke="#2a2a2a" stroke-width="0.3" text-anchor="end">22</text><path d="M220 637.9 H234 M634 637.9 H648" stroke="#222" stroke-width="1.6"/><text x="231" y="656.1" font-family='"Liberation Sans", sans-serif' font-size="15" fill="#2a2a2a" stroke="#2a2a2a" stroke-width="0.3" text-anchor="end">21</text><path d="M220 663.3 H234 M634 663.3 H648" stroke="#222" stroke-width="1.6"/><text x="231" y="682.4" font-family='"Liberation Sans", sans-serif' font-size="18.5" fill="#2a2a2a" stroke="#2a2a2a" stroke-width="0.3" text-anchor="end">20</text><path d="M206 688.7 H234 M634 688.7 H662" stroke="#222" stroke-width="1.8"/><text x="231" y="706.9" font-family='"Liberation Sans", sans-serif' font-size="15" fill="#2a2a2a" stroke="#2a2a2a" stroke-width="0.3" text-anchor="end">19</text><path d="M220 714.1 H234 M634 714.1 H648" stroke="#222" stroke-width="1.6"/><text x="231" y="732.3" font-family='"Liberation Sans", sans-serif' font-size="15" fill="#2a2a2a" stroke="#2a2a2a" stroke-width="0.3" text-anchor="end">18</text><path d="M220 739.5 H234 M634 739.5 H648" stroke="#222" stroke-width="1.6"/><text x="231" y="757.7" font-family='"Liberation Sans", sans-serif' font-size="15" fill="#2a2a2a" stroke="#2a2a2a" stroke-width="0.3" text-anchor="end">17</text><path d="M220 764.9 H234 M634 764.9 H648" stroke="#222" stroke-width="1.6"/><text x="231" y="783.1" font-family='"Liberation Sans", sans-serif' font-size="15" fill="#2a2a2a" stroke="#2a2a2a" stroke-width="0.3" text-anchor="end">16</text><path d="M220 790.3 H234 M634 790.3 H648" stroke="#222" stroke-width="1.6"/><text x="231" y="809.4" font-family='"Liberation Sans", sans-serif' font-size="18.5" fill="#2a2a2a" stroke="#2a2a2a" stroke-width="0.3" text-anchor="end">15</text><path d="M206 815.7 H234 M634 815.7 H662" stroke="#222" stroke-width="1.8"/><text x="231" y="833.9" font-family='"Liberation Sans", sans-serif' font-size="15" fill="#2a2a2a" stroke="#2a2a2a" stroke-width="0.3" text-anchor="end">14</text><path d="M220 841.1 H234 M634 841.1 H648" stroke="#222" stroke-width="1.6"/><text x="231" y="859.3" font-family='"Liberation Sans", sans-serif' font-size="15" fill="#2a2a2a" stroke="#2a2a2a" stroke-width="0.3" text-anchor="end">13</text><path d="M220 866.5 H234 M634 866.5 H648" stroke="#222" stroke-width="1.6"/><text x="231" y="884.7" font-family='"Liberation Sans", sans-serif' font-size="15" fill="#2a2a2a" stroke="#2a2a2a" stroke-width="0.3" text-anchor="end">12</text><path d="M220 891.9 H234 M634 891.9 H648" stroke="#222" stroke-width="1.6"/><text x="231" y="910.1" font-family='"Liberation Sans", sans-serif' font-size="15" fill="#2a2a2a" stroke="#2a2a2a" stroke-width="0.3" text-anchor="end">11</text><path d="M220 917.3 H234 M634 917.3 H648" stroke="#222" stroke-width="1.6"/><text x="231" y="936.4" font-family='"Liberation Sans", sans-serif' font-size="18.5" fill="#2a2a2a" stroke="#2a2a2a" stroke-width="0.3" text-anchor="end">10</text><path d="M206 942.7 H234 M634 942.7 H662" stroke="#222" stroke-width="1.8"/><text x="231" y="960.9" font-family='"Liberation Sans", sans-serif' font-size="15" fill="#2a2a2a" stroke="#2a2a2a" stroke-width="0.3" text-anchor="end">09</text><path d="M220 968.1 H234 M634 968.1 H648" stroke="#222" stroke-width="1.6"/><text x="231" y="986.3" font-family='"Liberation Sans", sans-serif' font-size="15" fill="#2a2a2a" stroke="#2a2a2a" stroke-width="0.3" text-anchor="end">08</text><path d="M220 993.5 H234 M634 993.5 H648" stroke="#222" stroke-width="1.6"/><text x="231" y="1011.7" font-family='"Liberation Sans", sans-serif' font-size="15" fill="#2a2a2a" stroke="#2a2a2a" stroke-width="0.3" text-anchor="end">07</text><path d="M220 1018.9 H234 M634 1018.9 H648" stroke="#222" stroke-width="1.6"/><text x="231" y="1037.1" font-family='"Liberation Sans", sans-serif' font-size="15" fill="#2a2a2a" stroke="#2a2a2a" stroke-width="0.3" text-anchor="end">06</text><path d="M220 1044.3 H234 M634 1044.3 H648" stroke="#222" stroke-width="1.6"/><text x="231" y="1063.4" font-family='"Liberation Sans", sans-serif' font-size="18.5" fill="#2a2a2a" stroke="#2a2a2a" stroke-width="0.3" text-anchor="end">05</text><path d="M206 1069.7 H234 M634 1069.7 H662" stroke="#222" stroke-width="1.8"/><text x="231" y="1087.9" font-family='"Liberation Sans", sans-serif' font-size="15" fill="#2a2a2a" stroke="#2a2a2a" stroke-width="0.3" text-anchor="end">04</text><path d="M220 1095.1 H234 M634 1095.1 H648" stroke="#222" stroke-width="1.6"/><text x="231" y="1113.3" font-family='"Liberation Sans", sans-serif' font-size="15" fill="#2a2a2a" stroke="#2a2a2a" stroke-width="0.3" text-anchor="end">03</text><path d="M220 1120.5 H234 M634 1120.5 H648" stroke="#222" stroke-width="1.6"/><text x="231" y="1138.7" font-family='"Liberation Sans", sans-serif' font-size="15" fill="#2a2a2a" stroke="#2a2a2a" stroke-width="0.3" text-anchor="end">02</text><path d="M220 1145.9 H234 M634 1145.9 H648" stroke="#222" stroke-width="1.6"/><text x="231" y="1164.1" font-family='"Liberation Sans", sans-serif' font-size="15" fill="#2a2a2a" stroke="#2a2a2a" stroke-width="0.3" text-anchor="end">01</text><rect x="296.5" y="104" width="9.5" height="1067.5" fill="#000"/><path d="M301.25 105.5 V1171" stroke="#fff" stroke-width="3" stroke-dasharray="3.6 5.316"/><rect x="562" y="104" width="9.5" height="1067.5" fill="#000"/><path d="M566.75 105.5 V1171" stroke="#fff" stroke-width="3" stroke-dasharray="3.6 5.316"/><rect x="662.5" y="76.5" width="456" height="122.5" fill="#aaaaaa"/><rect x="662.5" y="76.5" width="456" height="1122.5" fill="#aaaaaa"/><rect x="690.5" y="104.5" width="63" height="1067" fill="#ffffff"/><rect x="1027.5" y="104.5" width="63" height="1067" fill="#ffffff"/><rect x="753.5" y="104.5" width="274" height="1067" fill="#ffffff"/><path d="M663.25 1199 V76.75 H1118.5" fill="none" stroke="#888" stroke-width="1.5"/><path d="M663.25 1199 V76.75" fill="none" stroke="#222" stroke-width="1.5"/><path d="M662.5 1199 V104.5" fill="none" stroke="#000" stroke-width="2"/><path d="M662.5 1199 H1119.0 V76.5" fill="none" stroke="#222" stroke-width="1.6"/><text x="891.1" y="97.4" font-family='"Liberation Sans", sans-serif' font-size="19.5" fill="#2a2a2a" stroke="#2a2a2a" stroke-width="0.35" text-anchor="middle">B03</text><text x="891.1" y="1192.4" font-family='"Liberation Sans", sans-serif' font-size="19.5" fill="#2a2a2a" stroke="#2a2a2a" stroke-width="0.35" text-anchor="middle">B03</text><path d="M676.5 104.5 H1104.5 M676.5 1171.3 H1104.5" stroke="#333" stroke-width="1.5"/><path d="M690.0 104.5 V1171.3 M1091.0 104.5 V1171.3" stroke="#777" stroke-width="1"/><text x="687.5" y="122.7" font-family='"Liberation Sans", sans-serif' font-size="15" fill="#2a2a2a" stroke="#2a2a2a" stroke-width="0.3" text-anchor="end">42</text><path d="M676.5 129.9 H690.5 M1090.5 129.9 H1104.5" stroke="#222" stroke-width="1.6"/><text x="687.5" y="148.1" font-family='"Liberation Sans", sans-serif' font-size="15" fill="#2a2a2a" stroke="#2a2a2a" stroke-width="0.3" text-anchor="end">41</text><path d="M676.5 155.3 H690.5 M1090.5 155.3 H1104.5" stroke="#222" stroke-width="1.6"/><text x="687.5" y="174.4" font-family='"Liberation Sans", sans-serif' font-size="18.5" fill="#2a2a2a" stroke="#2a2a2a" stroke-width="0.3" text-anchor="end">40</text><path d="M662.5 180.7 H690.5 M1090.5 180.7 H1118.5" stroke="#222" stroke-width="1.8"/><text x="687.5" y="198.9" font-family='"Liberation Sans", sans-serif' font-size="15" fill="#2a2a2a" stroke="#2a2a2a" stroke-width="0.3" text-anchor="end">39</text><path d="M676.5 206.1 H690.5 M1090.5 206.1 H1104.5" stroke="#222" stroke-width="1.6"/><text x="687.5" y="224.3" font-family='"Liberation Sans", sans-serif' font-size="15" fill="#2a2a2a" stroke="#2a2a2a" stroke-width="0.3" text-anchor="end">38</text><path d="M676.5 231.5 H690.5 M1090.5 231.5 H1104.5" stroke="#222" stroke-width="1.6"/><text x="687.5" y="249.7" font-family='"Liberation Sans", sans-serif' font-size="15" fill="#2a2a2a" stroke="#2a2a2a" stroke-width="0.3" text-anchor="end">37</text><path d="M676.5 256.9 H690.5 M1090.5 256.9 H1104.5" stroke="#222" stroke-width="1.6"/><text x="687.5" y="275.1" font-family='"Liberation Sans", sans-serif' font-size="15" fill="#2a2a2a" stroke="#2a2a2a" stroke-width="0.3" text-anchor="end">36</text><path d="M676.5 282.3 H690.5 M1090.5 282.3 H1104.5" stroke="#222" stroke-width="1.6"/><text x="687.5" y="301.4" font-family='"Liberation Sans", sans-serif' font-size="18.5" fill="#2a2a2a" stroke="#2a2a2a" stroke-width="0.3" text-anchor="end">35</text><path d="M662.5 307.7 H690.5 M1090.5 307.7 H1118.5" stroke="#222" stroke-width="1.8"/><text x="687.5" y="325.9" font-family='"Liberation Sans", sans-serif' font-size="15" fill="#2a2a2a" stroke="#2a2a2a" stroke-width="0.3" text-anchor="end">34</text><path d="M676.5 333.1 H690.5 M1090.5 333.1 H1104.5" stroke="#222" stroke-width="1.6"/><text x="687.5" y="351.3" font-family='"Liberation Sans", sans-serif' font-size="15" fill="#2a2a2a" stroke="#2a2a2a" stroke-width="0.3" text-anchor="end">33</text><path d="M676.5 358.5 H690.5 M1090.5 358.5 H1104.5" stroke="#222" stroke-width="1.6"/><text x="687.5" y="376.7" font-family='"Liberation Sans", sans-serif' font-size="15" fill="#2a2a2a" stroke="#2a2a2a" stroke-width="0.3" text-anchor="end">32</text><path d="M676.5 383.9 H690.5 M1090.5 383.9 H1104.5" stroke="#222" stroke-width="1.6"/><text x="687.5" y="402.1" font-family='"Liberation Sans", sans-serif' font-size="15" fill="#2a2a2a" stroke="#2a2a2a" stroke-width="0.3" text-anchor="end">31</text><path d="M676.5 409.3 H690.5 M1090.5 409.3 H1104.5" stroke="#222" stroke-width="1.6"/><text x="687.5" y="428.4" font-family='"Liberation Sans", sans-serif' font-size="18.5" fill="#2a2a2a" stroke="#2a2a2a" stroke-width="0.3" text-anchor="end">30</text><path d="M662.5 434.7 H690.5 M1090.5 434.7 H1118.5" stroke="#222" stroke-width="1.8"/><text x="687.5" y="452.9" font-family='"Liberation Sans", sans-serif' font-size="15" fill="#2a2a2a" stroke="#2a2a2a" stroke-width="0.3" text-anchor="end">29</text><path d="M676.5 460.1 H690.5 M1090.5 460.1 H1104.5" stroke="#222" stroke-width="1.6"/><text x="687.5" y="478.3" font-family='"Liberation Sans", sans-serif' font-size="15" fill="#2a2a2a" stroke="#2a2a2a" stroke-width="0.3" text-anchor="end">28</text><path d="M676.5 485.5 H690.5 M1090.5 485.5 H1104.5" stroke="#222" stroke-width="1.6"/><text x="687.5" y="503.7" font-family='"Liberation Sans", sans-serif' font-size="15" fill="#2a2a2a" stroke="#2a2a2a" stroke-width="0.3" text-anchor="end">27</text><path d="M676.5 510.9 H690.5 M1090.5 510.9 H1104.5" stroke="#222" stroke-width="1.6"/><text x="687.5" y="529.1" font-family='"Liberation Sans", sans-serif' font-size="15" fill="#2a2a2a" stroke="#2a2a2a" stroke-width="0.3" text-anchor="end">26</text><path d="M676.5 536.3 H690.5 M1090.5 536.3 H1104.5" stroke="#222" stroke-width="1.6"/><text x="687.5" y="555.4" font-family='"Liberation Sans", sans-serif' font-size="18.5" fill="#2a2a2a" stroke="#2a2a2a" stroke-width="0.3" text-anchor="end">25</text><path d="M662.5 561.7 H690.5 M1090.5 561.7 H1118.5" stroke="#222" stroke-width="1.8"/><text x="687.5" y="579.9" font-family='"Liberation Sans", sans-serif' font-size="15" fill="#2a2a2a" stroke="#2a2a2a" stroke-width="0.3" text-anchor="end">24</text><path d="M676.5 587.1 H690.5 M1090.5 587.1 H1104.5" stroke="#222" stroke-width="1.6"/><text x="687.5" y="605.3" font-family='"Liberation Sans", sans-serif' font-size="15" fill="#2a2a2a" stroke="#2a2a2a" stroke-width="0.3" text-anchor="end">23</text><path d="M676.5 612.5 H690.5 M1090.5 612.5 H1104.5" stroke="#222" stroke-width="1.6"/><text x="687.5" y="630.7" font-family='"Liberation Sans", sans-serif' font-size="15" fill="#2a2a2a" stroke="#2a2a2a" stroke-width="0.3" text-anchor="end">22</text><path d="M676.5 637.9 H690.5 M1090.5 637.9 H1104.5" stroke="#222" stroke-width="1.6"/><text x="687.5" y="656.1" font-family='"Liberation Sans", sans-serif' font-size="15" fill="#2a2a2a" stroke="#2a2a2a" stroke-width="0.3" text-anchor="end">21</text><path d="M676.5 663.3 H690.5 M1090.5 663.3 H1104.5" stroke="#222" stroke-width="1.6"/><text x="687.5" y="682.4" font-family='"Liberation Sans", sans-serif' font-size="18.5" fill="#2a2a2a" stroke="#2a2a2a" stroke-width="0.3" text-anchor="end">20</text><path d="M662.5 688.7 H690.5 M1090.5 688.7 H1118.5" stroke="#222" stroke-width="1.8"/><text x="687.5" y="706.9" font-family='"Liberation Sans", sans-serif' font-size="15" fill="#2a2a2a" stroke="#2a2a2a" stroke-width="0.3" text-anchor="end">19</text><path d="M676.5 714.1 H690.5 M1090.5 714.1 H1104.5" stroke="#222" stroke-width="1.6"/><text x="687.5" y="732.3" font-family='"Liberation Sans", sans-serif' font-size="15" fill="#2a2a2a" stroke="#2a2a2a" stroke-width="0.3" text-anchor="end">18</text><path d="M676.5 739.5 H690.5 M1090.5 739.5 H1104.5" stroke="#222" stroke-width="1.6"/><text x="687.5" y="757.7" font-family='"Liberation Sans", sans-serif' font-size="15" fill="#2a2a2a" stroke="#2a2a2a" stroke-width="0.3" text-anchor="end">17</text><path d="M676.5 764.9 H690.5 M1090.5 764.9 H1104.5" stroke="#222" stroke-width="1.6"/><text x="687.5" y="783.1" font-family='"Liberation Sans", sans-serif' font-size="15" fill="#2a2a2a" stroke="#2a2a2a" stroke-width="0.3" text-anchor="end">16</text><path d="M676.5 790.3 H690.5 M1090.5 790.3 H1104.5" stroke="#222" stroke-width="1.6"/><text x="687.5" y="809.4" font-family='"Liberation Sans", sans-serif' font-size="18.5" fill="#2a2a2a" stroke="#2a2a2a" stroke-width="0.3" text-anchor="end">15</text><path d="M662.5 815.7 H690.5 M1090.5 815.7 H1118.5" stroke="#222" stroke-width="1.8"/><text x="687.5" y="833.9" font-family='"Liberation Sans", sans-serif' font-size="15" fill="#2a2a2a" stroke="#2a2a2a" stroke-width="0.3" text-anchor="end">14</text><path d="M676.5 841.1 H690.5 M1090.5 841.1 H1104.5" stroke="#222" stroke-width="1.6"/><text x="687.5" y="859.3" font-family='"Liberation Sans", sans-serif' font-size="15" fill="#2a2a2a" stroke="#2a2a2a" stroke-width="0.3" text-anchor="end">13</text><path d="M676.5 866.5 H690.5 M1090.5 866.5 H1104.5" stroke="#222" stroke-width="1.6"/><text x="687.5" y="884.7" font-family='"Liberation Sans", sans-serif' font-size="15" fill="#2a2a2a" stroke="#2a2a2a" stroke-width="0.3" text-anchor="end">12</text><path d="M676.5 891.9 H690.5 M1090.5 891.9 H1104.5" stroke="#222" stroke-width="1.6"/><text x="687.5" y="910.1" font-family='"Liberation Sans", sans-serif' font-size="15" fill="#2a2a2a" stroke="#2a2a2a" stroke-width="0.3" text-anchor="end">11</text><path d="M676.5 917.3 H690.5 M1090.5 917.3 H1104.5" stroke="#222" stroke-width="1.6"/><text x="687.5" y="936.4" font-family='"Liberation Sans", sans-serif' font-size="18.5" fill="#2a2a2a" stroke="#2a2a2a" stroke-width="0.3" text-anchor="end">10</text><path d="M662.5 942.7 H690.5 M1090.5 942.7 H1118.5" stroke="#222" stroke-width="1.8"/><text x="687.5" y="960.9" font-family='"Liberation Sans", sans-serif' font-size="15" fill="#2a2a2a" stroke="#2a2a2a" stroke-width="0.3" text-anchor="end">09</text><path d="M676.5 968.1 H690.5 M1090.5 968.1 H1104.5" stroke="#222" stroke-width="1.6"/><text x="687.5" y="986.3" font-family='"Liberation Sans", sans-serif' font-size="15" fill="#2a2a2a" stroke="#2a2a2a" stroke-width="0.3" text-anchor="end">08</text><path d="M676.5 993.5 H690.5 M1090.5 993.5 H1104.5" stroke="#222" stroke-width="1.6"/><text x="687.5" y="1011.7" font-family='"Liberation Sans", sans-serif' font-size="15" fill="#2a2a2a" stroke="#2a2a2a" stroke-width="0.3" text-anchor="end">07</text><path d="M676.5 1018.9 H690.5 M1090.5 1018.9 H1104.5" stroke="#222" stroke-width="1.6"/><text x="687.5" y="1037.1" font-family='"Liberation Sans", sans-serif' font-size="15" fill="#2a2a2a" stroke="#2a2a2a" stroke-width="0.3" text-anchor="end">06</text><path d="M676.5 1044.3 H690.5 M1090.5 1044.3 H1104.5" stroke="#222" stroke-width="1.6"/><text x="687.5" y="1063.4" font-family='"Liberation Sans", sans-serif' font-size="18.5" fill="#2a2a2a" stroke="#2a2a2a" stroke-width="0.3" text-anchor="end">05</text><path d="M662.5 1069.7 H690.5 M1090.5 1069.7 H1118.5" stroke="#222" stroke-width="1.8"/><text x="687.5" y="1087.9" font-family='"Liberation Sans", sans-serif' font-size="15" fill="#2a2a2a" stroke="#2a2a2a" stroke-width="0.3" text-anchor="end">04</text><path d="M676.5 1095.1 H690.5 M1090.5 1095.1 H1104.5" stroke="#222" stroke-width="1.6"/><text x="687.5" y="1113.3" font-family='"Liberation Sans", sans-serif' font-size="15" fill="#2a2a2a" stroke="#2a2a2a" stroke-width="0.3" text-anchor="end">03</text><path d="M676.5 1120.5 H690.5 M1090.5 1120.5 H1104.5" stroke="#222" stroke-width="1.6"/><text x="687.5" y="1138.7" font-family='"Liberation Sans", sans-serif' font-size="15" fill="#2a2a2a" stroke="#2a2a2a" stroke-width="0.3" text-anchor="end">02</text><path d="M676.5 1145.9 H690.5 M1090.5 1145.9 H1104.5" stroke="#222" stroke-width="1.6"/><text x="687.5" y="1164.1" font-family='"Liberation Sans", sans-serif' font-size="15" fill="#2a2a2a" stroke="#2a2a2a" stroke-width="0.3" text-anchor="end">01</text><rect x="753.0" y="104" width="9.5" height="1067.5" fill="#000"/><path d="M757.75 105.5 V1171" stroke="#fff" stroke-width="3" stroke-dasharray="3.6 5.316"/><rect x="1018.5" y="104" width="9.5" height="1067.5" fill="#000"/><path d="M1023.25 105.5 V1171" stroke="#fff" stroke-width="3" stroke-dasharray="3.6 5.316"/><rect x="306" y="104.0" width="256" height="51.8" fill="#000"/><rect x="306" y="105.5" width="256" height="48.80000000000001" fill="#ffcc00"/><rect x="307.0" y="120.0" width="3.2" height="3.2" rx="1" fill="#22ee22"/><rect x="317.6" y="120.0" width="3.2" height="3.2" rx="1" fill="#22ee22"/><rect x="328.1" y="120.0" width="3.2" height="3.2" rx="1" fill="#22ee22"/><rect x="338.7" y="120.0" width="3.2" height="3.2" rx="1" fill="#22ee22"/><rect x="349.3" y="120.0" width="3.2" height="3.2" rx="1" fill="#22ee22"/><rect x="359.9" y="120.0" width="3.2" height="3.2" rx="1" fill="#22ee22"/><rect x="370.4" y="120.0" width="3.2" height="3.2" rx="1" fill="#22ee22"/><rect x="381.0" y="120.0" width="3.2" height="3.2" rx="1" fill="#22ee22"/><rect x="391.6" y="120.0" width="3.2" height="3.2" rx="1" fill="#22ee22"/><rect x="402.1" y="120.0" width="3.2" height="3.2" rx="1" fill="#22ee22"/><rect x="412.7" y="120.0" width="3.2" height="3.2" rx="1" fill="#22ee22"/><rect x="423.3" y="120.0" width="3.2" height="3.2" rx="1" fill="#22ee22"/><rect x="433.8" y="120.0" width="3.2" height="3.2" rx="1" fill="#22ee22"/><rect x="444.4" y="120.0" width="3.2" height="3.2" rx="1" fill="#22ee22"/><rect x="455.0" y="120.0" width="3.2" height="3.2" rx="1" fill="#22ee22"/><rect x="465.6" y="120.0" width="3.2" height="3.2" rx="1" fill="#22ee22"/><rect x="476.1" y="120.0" width="3.2" height="3.2" rx="1" fill="#22ee22"/><rect x="486.7" y="120.0" width="3.2" height="3.2" rx="1" fill="#22ee22"/><rect x="497.3" y="120.0" width="3.2" height="3.2" rx="1" fill="#22ee22"/><rect x="507.8" y="120.0" width="3.2" height="3.2" rx="1" fill="#22ee22"/><rect x="518.4" y="120.0" width="3.2" height="3.2" rx="1" fill="#22ee22"/><rect x="529.0" y="120.0" width="3.2" height="3.2" rx="1" fill="#22ee22"/><rect x="539.5" y="120.0" width="3.2" height="3.2" rx="1" fill="#22ee22"/><rect x="550.1" y="120.0" width="3.2" height="3.2" rx="1" fill="#22ee22"/><rect x="307.0" y="137.2" width="3.2" height="3.2" rx="1" fill="#22ee22"/><rect x="317.6" y="137.2" width="3.2" height="3.2" rx="1" fill="#22ee22"/><rect x="328.1" y="137.2" width="3.2" height="3.2" rx="1" fill="#22ee22"/><rect x="338.7" y="137.2" width="3.2" height="3.2" rx="1" fill="#22ee22"/><rect x="349.3" y="137.2" width="3.2" height="3.2" rx="1" fill="#22ee22"/><rect x="359.9" y="137.2" width="3.2" height="3.2" rx="1" fill="#22ee22"/><rect x="370.4" y="137.2" width="3.2" height="3.2" rx="1" fill="#22ee22"/><rect x="381.0" y="137.2" width="3.2" height="3.2" rx="1" fill="#22ee22"/><rect x="391.6" y="137.2" width="3.2" height="3.2" rx="1" fill="#22ee22"/><rect x="402.1" y="137.2" width="3.2" height="3.2" rx="1" fill="#22ee22"/><rect x="412.7" y="137.2" width="3.2" height="3.2" rx="1" fill="#22ee22"/><rect x="423.3" y="137.2" width="3.2" height="3.2" rx="1" fill="#22ee22"/><rect x="433.8" y="137.2" width="3.2" height="3.2" rx="1" fill="#22ee22"/><rect x="444.4" y="137.2" width="3.2" height="3.2" rx="1" fill="#22ee22"/><rect x="455.0" y="137.2" width="3.2" height="3.2" rx="1" fill="#22ee22"/><rect x="465.6" y="137.2" width="3.2" height="3.2" rx="1" fill="#22ee22"/><rect x="476.1" y="137.2" width="3.2" height="3.2" rx="1" fill="#22ee22"/><rect x="486.7" y="137.2" width="3.2" height="3.2" rx="1" fill="#22ee22"/><rect x="497.3" y="137.2" width="3.2" height="3.2" rx="1" fill="#22ee22"/><rect x="507.8" y="137.2" width="3.2" height="3.2" rx="1" fill="#22ee22"/><rect x="518.4" y="137.2" width="3.2" height="3.2" rx="1" fill="#22ee22"/><rect x="529.0" y="137.2" width="3.2" height="3.2" rx="1" fill="#22ee22"/><rect x="539.5" y="137.2" width="3.2" height="3.2" rx="1" fill="#22ee22"/><rect x="550.1" y="137.2" width="3.2" height="3.2" rx="1" fill="#22ee22"/><text x="307" y="132.5" font-family='"Liberation Sans", sans-serif' font-size="11" fill="#6a5000">F</text><rect x="306" y="154.8" width="256" height="51.8" fill="#000"/><rect x="306" y="156.3" width="256" height="48.79999999999998" fill="#9a9a9a"/><rect x="309.8" y="170.5" width="6.5" height="3.2" fill="#22ee22"/><rect x="312.3" y="171.3" width="1.5" height="1.5" fill="#666"/><rect x="320.4" y="170.5" width="6.5" height="3.2" fill="#22ee22"/><rect x="322.9" y="171.3" width="1.5" height="1.5" fill="#666"/><rect x="330.9" y="170.5" width="6.5" height="3.2" fill="#22ee22"/><rect x="333.4" y="171.3" width="1.5" height="1.5" fill="#666"/><rect x="341.5" y="170.5" width="6.5" height="3.2" fill="#22ee22"/><rect x="344.0" y="171.3" width="1.5" height="1.5" fill="#666"/><rect x="352.1" y="170.5" width="6.5" height="3.2" fill="#22ee22"/><rect x="354.6" y="171.3" width="1.5" height="1.5" fill="#666"/><rect x="362.7" y="170.5" width="6.5" height="3.2" fill="#22ee22"/><rect x="365.2" y="171.3" width="1.5" height="1.5" fill="#666"/><rect x="373.2" y="170.5" width="6.5" height="3.2" fill="#22ee22"/><rect x="375.7" y="171.3" width="1.5" height="1.5" fill="#666"/><rect x="383.8" y="170.5" width="6.5" height="3.2" fill="#22ee22"/><rect x="386.3" y="171.3" width="1.5" height="1.5" fill="#666"/><rect x="394.4" y="170.5" width="6.5" height="3.2" fill="#22ee22"/><rect x="396.9" y="171.3" width="1.5" height="1.5" fill="#666"/><rect x="404.9" y="170.5" width="6.5" height="3.2" fill="#22ee22"/><rect x="407.4" y="171.3" width="1.5" height="1.5" fill="#666"/><rect x="415.5" y="170.5" width="6.5" height="3.2" fill="#22ee22"/><rect x="418.0" y="171.3" width="1.5" height="1.5" fill="#666"/><rect x="426.1" y="170.5" width="6.5" height="3.2" fill="#22ee22"/><rect x="428.6" y="171.3" width="1.5" height="1.5" fill="#666"/><rect x="436.6" y="170.5" width="6.5" height="3.2" fill="#22ee22"/><rect x="439.1" y="171.3" width="1.5" height="1.5" fill="#666"/><rect x="447.2" y="170.5" width="6.5" height="3.2" fill="#22ee22"/><rect x="449.7" y="171.3" width="1.5" height="1.5" fill="#666"/><rect x="457.8" y="170.5" width="6.5" height="3.2" fill="#22ee22"/><rect x="460.3" y="171.3" width="1.5" height="1.5" fill="#666"/><rect x="468.4" y="170.5" width="6.5" height="3.2" fill="#22ee22"/><rect x="470.9" y="171.3" width="1.5" height="1.5" fill="#666"/><rect x="478.9" y="170.5" width="6.5" height="3.2" fill="#22ee22"/><rect x="481.4" y="171.3" width="1.5" height="1.5" fill="#666"/><rect x="489.5" y="170.5" width="6.5" height="3.2" fill="#22ee22"/><rect x="492.0" y="171.3" width="1.5" height="1.5" fill="#666"/><rect x="500.1" y="170.5" width="6.5" height="3.2" fill="#22ee22"/><rect x="502.6" y="171.3" width="1.5" height="1.5" fill="#666"/><rect x="510.6" y="170.5" width="6.5" height="3.2" fill="#22ee22"/><rect x="513.1" y="171.3" width="1.5" height="1.5" fill="#666"/><rect x="521.2" y="170.5" width="6.5" height="3.2" fill="#22ee22"/><rect x="523.7" y="171.3" width="1.5" height="1.5" fill="#666"/><rect x="531.8" y="170.5" width="6.5" height="3.2" fill="#22ee22"/><rect x="534.3" y="171.3" width="1.5" height="1.5" fill="#666"/><rect x="542.3" y="170.5" width="6.5" height="3.2" fill="#22ee22"/><rect x="544.8" y="171.3" width="1.5" height="1.5" fill="#666"/><rect x="552.9" y="170.5" width="6.5" height="3.2" fill="#22ee22"/><rect x="555.4" y="171.3" width="1.5" height="1.5" fill="#666"/><rect x="309.8" y="188.5" width="6.5" height="3.2" fill="#22ee22"/><rect x="312.3" y="189.3" width="1.5" height="1.5" fill="#666"/><rect x="320.4" y="188.5" width="6.5" height="3.2" fill="#22ee22"/><rect x="322.9" y="189.3" width="1.5" height="1.5" fill="#666"/><rect x="330.9" y="188.5" width="6.5" height="3.2" fill="#22ee22"/><rect x="333.4" y="189.3" width="1.5" height="1.5" fill="#666"/><rect x="341.5" y="188.5" width="6.5" height="3.2" fill="#22ee22"/><rect x="344.0" y="189.3" width="1.5" height="1.5" fill="#666"/><rect x="352.1" y="188.5" width="6.5" height="3.2" fill="#22ee22"/><rect x="354.6" y="189.3" width="1.5" height="1.5" fill="#666"/><rect x="362.7" y="188.5" width="6.5" height="3.2" fill="#22ee22"/><rect x="365.2" y="189.3" width="1.5" height="1.5" fill="#666"/><rect x="373.2" y="188.5" width="6.5" height="3.2" fill="#22ee22"/><rect x="375.7" y="189.3" width="1.5" height="1.5" fill="#666"/><rect x="383.8" y="188.5" width="6.5" height="3.2" fill="#22ee22"/><rect x="386.3" y="189.3" width="1.5" height="1.5" fill="#666"/><rect x="394.4" y="188.5" width="6.5" height="3.2" fill="#22ee22"/><rect x="396.9" y="189.3" width="1.5" height="1.5" fill="#666"/><rect x="404.9" y="188.5" width="6.5" height="3.2" fill="#22ee22"/><rect x="407.4" y="189.3" width="1.5" height="1.5" fill="#666"/><rect x="415.5" y="188.5" width="6.5" height="3.2" fill="#22ee22"/><rect x="418.0" y="189.3" width="1.5" height="1.5" fill="#666"/><rect x="426.1" y="188.5" width="6.5" height="3.2" fill="#22ee22"/><rect x="428.6" y="189.3" width="1.5" height="1.5" fill="#666"/><rect x="436.6" y="188.5" width="6.5" height="3.2" fill="#22ee22"/><rect x="439.1" y="189.3" width="1.5" height="1.5" fill="#666"/><rect x="447.2" y="188.5" width="6.5" height="3.2" fill="#22ee22"/><rect x="449.7" y="189.3" width="1.5" height="1.5" fill="#666"/><rect x="457.8" y="188.5" width="6.5" height="3.2" fill="#22ee22"/><rect x="460.3" y="189.3" width="1.5" height="1.5" fill="#666"/><rect x="468.4" y="188.5" width="6.5" height="3.2" fill="#22ee22"/><rect x="470.9" y="189.3" width="1.5" height="1.5" fill="#666"/><rect x="478.9" y="188.5" width="6.5" height="3.2" fill="#22ee22"/><rect x="481.4" y="189.3" width="1.5" height="1.5" fill="#666"/><rect x="489.5" y="188.5" width="6.5" height="3.2" fill="#22ee22"/><rect x="492.0" y="189.3" width="1.5" height="1.5" fill="#666"/><rect x="500.1" y="188.5" width="6.5" height="3.2" fill="#22ee22"/><rect x="502.6" y="189.3" width="1.5" height="1.5" fill="#666"/><rect x="510.6" y="188.5" width="6.5" height="3.2" fill="#22ee22"/><rect x="513.1" y="189.3" width="1.5" height="1.5" fill="#666"/><rect x="521.2" y="188.5" width="6.5" height="3.2" fill="#22ee22"/><rect x="523.7" y="189.3" width="1.5" height="1.5" fill="#666"/><rect x="531.8" y="188.5" width="6.5" height="3.2" fill="#22ee22"/><rect x="534.3" y="189.3" width="1.5" height="1.5" fill="#666"/><rect x="542.3" y="188.5" width="6.5" height="3.2" fill="#22ee22"/><rect x="544.8" y="189.3" width="1.5" height="1.5" fill="#666"/><rect x="552.9" y="188.5" width="6.5" height="3.2" fill="#22ee22"/><rect x="555.4" y="189.3" width="1.5" height="1.5" fill="#666"/><text x="309" y="185.3" font-family='"Liberation Sans", sans-serif' font-size="12" fill="#333">F</text><rect x="306" y="205.6" width="256" height="51.8" fill="#000"/><rect x="306" y="207.1" width="256" height="48.79999999999998" fill="#333333"/><rect x="310.2" y="218.7" width="6.4" height="5.2" fill="#22ee22"/><rect x="312.4" y="220.5" width="2" height="1.6" fill="#1a4a1a"/><rect x="320.8" y="218.7" width="6.4" height="5.2" fill="#22ee22"/><rect x="323.0" y="220.5" width="2" height="1.6" fill="#1a4a1a"/><rect x="331.3" y="218.7" width="6.4" height="5.2" fill="#22ee22"/><rect x="333.5" y="220.5" width="2" height="1.6" fill="#1a4a1a"/><rect x="341.9" y="218.7" width="6.4" height="5.2" fill="#22ee22"/><rect x="344.1" y="220.5" width="2" height="1.6" fill="#1a4a1a"/><rect x="352.5" y="218.7" width="6.4" height="5.2" fill="#22ee22"/><rect x="354.7" y="220.5" width="2" height="1.6" fill="#1a4a1a"/><rect x="363.1" y="218.7" width="6.4" height="5.2" fill="#22ee22"/><rect x="365.2" y="220.5" width="2" height="1.6" fill="#1a4a1a"/><rect x="373.6" y="218.7" width="6.4" height="5.2" fill="#22ee22"/><rect x="375.8" y="220.5" width="2" height="1.6" fill="#1a4a1a"/><rect x="384.2" y="218.7" width="6.4" height="5.2" fill="#22ee22"/><rect x="386.4" y="220.5" width="2" height="1.6" fill="#1a4a1a"/><rect x="394.8" y="218.7" width="6.4" height="5.2" fill="#22ee22"/><rect x="397.0" y="220.5" width="2" height="1.6" fill="#1a4a1a"/><rect x="405.3" y="218.7" width="6.4" height="5.2" fill="#22ee22"/><rect x="407.5" y="220.5" width="2" height="1.6" fill="#1a4a1a"/><rect x="415.9" y="218.7" width="6.4" height="5.2" fill="#22ee22"/><rect x="418.1" y="220.5" width="2" height="1.6" fill="#1a4a1a"/><rect x="426.5" y="218.7" width="6.4" height="5.2" fill="#22ee22"/><rect x="428.7" y="220.5" width="2" height="1.6" fill="#1a4a1a"/><rect x="437.0" y="218.7" width="6.4" height="5.2" fill="#22ee22"/><rect x="439.2" y="220.5" width="2" height="1.6" fill="#1a4a1a"/><rect x="447.6" y="218.7" width="6.4" height="5.2" fill="#22ee22"/><rect x="449.8" y="220.5" width="2" height="1.6" fill="#1a4a1a"/><rect x="458.2" y="218.7" width="6.4" height="5.2" fill="#22ee22"/><rect x="460.4" y="220.5" width="2" height="1.6" fill="#1a4a1a"/><rect x="468.8" y="218.7" width="6.4" height="5.2" fill="#22ee22"/><rect x="470.9" y="220.5" width="2" height="1.6" fill="#1a4a1a"/><rect x="479.3" y="218.7" width="6.4" height="5.2" fill="#22ee22"/><rect x="481.5" y="220.5" width="2" height="1.6" fill="#1a4a1a"/><rect x="489.9" y="218.7" width="6.4" height="5.2" fill="#22ee22"/><rect x="492.1" y="220.5" width="2" height="1.6" fill="#1a4a1a"/><rect x="500.5" y="218.7" width="6.4" height="5.2" fill="#22ee22"/><rect x="502.7" y="220.5" width="2" height="1.6" fill="#1a4a1a"/><rect x="511.0" y="218.7" width="6.4" height="5.2" fill="#22ee22"/><rect x="513.2" y="220.5" width="2" height="1.6" fill="#1a4a1a"/><rect x="521.6" y="218.7" width="6.4" height="5.2" fill="#22ee22"/><rect x="523.8" y="220.5" width="2" height="1.6" fill="#1a4a1a"/><rect x="532.2" y="218.7" width="6.4" height="5.2" fill="#22ee22"/><rect x="534.4" y="220.5" width="2" height="1.6" fill="#1a4a1a"/><rect x="542.7" y="218.7" width="6.4" height="5.2" fill="#22ee22"/><rect x="544.9" y="220.5" width="2" height="1.6" fill="#1a4a1a"/><rect x="553.3" y="218.7" width="6.4" height="5.2" fill="#22ee22"/><rect x="555.5" y="220.5" width="2" height="1.6" fill="#1a4a1a"/><rect x="310.2" y="237.9" width="6.4" height="5.2" fill="#22ee22"/><rect x="312.4" y="239.7" width="2" height="1.6" fill="#1a4a1a"/><rect x="320.8" y="237.9" width="6.4" height="5.2" fill="#22ee22"/><rect x="323.0" y="239.7" width="2" height="1.6" fill="#1a4a1a"/><rect x="331.3" y="237.9" width="6.4" height="5.2" fill="#22ee22"/><rect x="333.5" y="239.7" width="2" height="1.6" fill="#1a4a1a"/><rect x="341.9" y="237.9" width="6.4" height="5.2" fill="#22ee22"/><rect x="344.1" y="239.7" width="2" height="1.6" fill="#1a4a1a"/><rect x="352.5" y="237.9" width="6.4" height="5.2" fill="#22ee22"/><rect x="354.7" y="239.7" width="2" height="1.6" fill="#1a4a1a"/><rect x="363.1" y="237.9" width="6.4" height="5.2" fill="#22ee22"/><rect x="365.2" y="239.7" width="2" height="1.6" fill="#1a4a1a"/><rect x="373.6" y="237.9" width="6.4" height="5.2" fill="#22ee22"/><rect x="375.8" y="239.7" width="2" height="1.6" fill="#1a4a1a"/><rect x="384.2" y="237.9" width="6.4" height="5.2" fill="#22ee22"/><rect x="386.4" y="239.7" width="2" height="1.6" fill="#1a4a1a"/><rect x="394.8" y="237.9" width="6.4" height="5.2" fill="#22ee22"/><rect x="397.0" y="239.7" width="2" height="1.6" fill="#1a4a1a"/><rect x="405.3" y="237.9" width="6.4" height="5.2" fill="#22ee22"/><rect x="407.5" y="239.7" width="2" height="1.6" fill="#1a4a1a"/><rect x="415.9" y="237.9" width="6.4" height="5.2" fill="#22ee22"/><rect x="418.1" y="239.7" width="2" height="1.6" fill="#1a4a1a"/><rect x="426.5" y="237.9" width="6.4" height="5.2" fill="#22ee22"/><rect x="428.7" y="239.7" width="2" height="1.6" fill="#1a4a1a"/><rect x="437.0" y="237.9" width="6.4" height="5.2" fill="#22ee22"/><rect x="439.2" y="239.7" width="2" height="1.6" fill="#1a4a1a"/><rect x="447.6" y="237.9" width="6.4" height="5.2" fill="#22ee22"/><rect x="449.8" y="239.7" width="2" height="1.6" fill="#1a4a1a"/><rect x="458.2" y="237.9" width="6.4" height="5.2" fill="#22ee22"/><rect x="460.4" y="239.7" width="2" height="1.6" fill="#1a4a1a"/><rect x="468.8" y="237.9" width="6.4" height="5.2" fill="#22ee22"/><rect x="470.9" y="239.7" width="2" height="1.6" fill="#1a4a1a"/><rect x="479.3" y="237.9" width="6.4" height="5.2" fill="#22ee22"/><rect x="481.5" y="239.7" width="2" height="1.6" fill="#1a4a1a"/><rect x="489.9" y="237.9" width="6.4" height="5.2" fill="#22ee22"/><rect x="492.1" y="239.7" width="2" height="1.6" fill="#1a4a1a"/><rect x="500.5" y="237.9" width="6.4" height="5.2" fill="#22ee22"/><rect x="502.7" y="239.7" width="2" height="1.6" fill="#1a4a1a"/><rect x="511.0" y="237.9" width="6.4" height="5.2" fill="#22ee22"/><rect x="513.2" y="239.7" width="2" height="1.6" fill="#1a4a1a"/><rect x="521.6" y="237.9" width="6.4" height="5.2" fill="#22ee22"/><rect x="523.8" y="239.7" width="2" height="1.6" fill="#1a4a1a"/><rect x="532.2" y="237.9" width="6.4" height="5.2" fill="#22ee22"/><rect x="534.4" y="239.7" width="2" height="1.6" fill="#1a4a1a"/><rect x="542.7" y="237.9" width="6.4" height="5.2" fill="#22ee22"/><rect x="544.9" y="239.7" width="2" height="1.6" fill="#1a4a1a"/><rect x="553.3" y="237.9" width="6.4" height="5.2" fill="#22ee22"/><rect x="555.5" y="239.7" width="2" height="1.6" fill="#1a4a1a"/><text x="306.5" y="235.1" font-family='"Liberation Sans", sans-serif' font-size="12" fill="#eee">F</text><rect x="306" y="256.4" width="256" height="102.6" fill="#000"/><g transform="translate(306,257.9)"><rect width="256" height="99.6" fill="#e4e4e4"/><rect x="0" y="0" width="6" height="99.6" fill="#d0d0d0"/><rect x="16.2" y="0" width="9" height="99.6" fill="#1e1e1e"/><polygon points="33.90,12.40 31.42,16.84 30.03,21.73 25.14,23.12 20.70,25.60 16.26,23.12 11.37,21.73 9.98,16.84 7.50,12.40 9.98,7.96 11.37,3.07 16.26,1.68 20.70,-0.80 25.14,1.68 30.03,3.07 31.42,7.96" fill="#1e1e1e"/><ellipse cx="20.7" cy="12.4" rx="6.8" ry="7" fill="#f2f2f2"/><rect x="7" y="10.8" width="31" height="3.2" fill="#7a7a7a"/><rect x="33" y="1.4000000000000004" width="23" height="22" fill="#d8d8d8"/><circle cx="37" cy="5.4" r="2" fill="#8fb88f"/><rect x="39.5" y="3.9000000000000004" width="15.5" height="17" fill="#4a4a4a"/><rect x="39.5" y="7.2" width="15.5" height="10.8" fill="#ff0a0a"/><rect x="44" y="11.8" width="2" height="1.2" fill="#300"/><rect x="47" y="9.9" width="2" height="5" fill="#300"/><rect x="35" y="18.4" width="4" height="3" fill="#e8d8a0"/><polygon points="33.90,38.10 31.42,42.54 30.03,47.43 25.14,48.82 20.70,51.30 16.26,48.82 11.37,47.43 9.98,42.54 7.50,38.10 9.98,33.66 11.37,28.77 16.26,27.38 20.70,24.90 25.14,27.38 30.03,28.77 31.42,33.66" fill="#1e1e1e"/><ellipse cx="20.7" cy="38.1" rx="6.8" ry="7" fill="#f2f2f2"/><rect x="7" y="36.5" width="31" height="3.2" fill="#7a7a7a"/><rect x="33" y="27.1" width="23" height="22" fill="#d8d8d8"/><circle cx="37" cy="31.1" r="2" fill="#8fb88f"/><rect x="39.5" y="29.6" width="15.5" height="17" fill="#4a4a4a"/><rect x="39.5" y="32.9" width="15.5" height="10.8" fill="#ff0a0a"/><rect x="44" y="37.5" width="2" height="1.2" fill="#300"/><rect x="47" y="35.6" width="2" height="5" fill="#300"/><rect x="35" y="44.1" width="4" height="3" fill="#e8d8a0"/><polygon points="33.90,63.10 31.42,67.54 30.03,72.43 25.14,73.82 20.70,76.30 16.26,73.82 11.37,72.43 9.98,67.54 7.50,63.10 9.98,58.66 11.37,53.77 16.26,52.38 20.70,49.90 25.14,52.38 30.03,53.77 31.42,58.66" fill="#1e1e1e"/><ellipse cx="20.7" cy="63.1" rx="6.8" ry="7" fill="#f2f2f2"/><rect x="7" y="61.5" width="31" height="3.2" fill="#7a7a7a"/><rect x="33" y="52.1" width="23" height="22" fill="#d8d8d8"/><circle cx="37" cy="56.1" r="2" fill="#8fb88f"/><rect x="39.5" y="54.6" width="15.5" height="17" fill="#4a4a4a"/><rect x="39.5" y="57.9" width="15.5" height="10.8" fill="#ff0a0a"/><rect x="44" y="62.5" width="2" height="1.2" fill="#300"/><rect x="47" y="60.6" width="2" height="5" fill="#300"/><rect x="35" y="69.1" width="4" height="3" fill="#e8d8a0"/><polygon points="33.90,88.20 31.42,92.64 30.03,97.53 25.14,98.92 20.70,101.40 16.26,98.92 11.37,97.53 9.98,92.64 7.50,88.20 9.98,83.76 11.37,78.87 16.26,77.48 20.70,75.00 25.14,77.48 30.03,78.87 31.42,83.76" fill="#1e1e1e"/><ellipse cx="20.7" cy="88.2" rx="6.8" ry="7" fill="#f2f2f2"/><rect x="7" y="86.60000000000001" width="31" height="3.2" fill="#7a7a7a"/><rect x="33" y="77.2" width="23" height="22" fill="#d8d8d8"/><circle cx="37" cy="81.2" r="2" fill="#8fb88f"/><rect x="39.5" y="79.7" width="15.5" height="17" fill="#4a4a4a"/><rect x="39.5" y="83.0" width="15.5" height="10.8" fill="#ff0a0a"/><rect x="44" y="87.60000000000001" width="2" height="1.2" fill="#300"/><rect x="47" y="85.7" width="2" height="5" fill="#300"/><rect x="35" y="94.2" width="4" height="3" fill="#e8d8a0"/><rect x="58.5" y="0" width="1.5" height="99.6" fill="#b8b8b8"/><rect x="66" y="2" width="20" height="95.6" fill="url(#hexdots)"/><rect x="88" y="2" width="26" height="95.6" fill="#eeeeee"/><rect x="94" y="10" width="6" height="6" fill="#18e018" stroke="#555" stroke-width="0.5"/><rect x="95.5" y="12.5" width="3" height="1.2" fill="#0a400a"/><rect x="94" y="24" width="6" height="6" fill="#18e018" stroke="#555" stroke-width="0.5"/><rect x="95.5" y="26.5" width="3" height="1.2" fill="#0a400a"/><rect x="103" y="10" width="6" height="6" fill="#18e018" stroke="#555" stroke-width="0.5"/><rect x="104.5" y="12.5" width="3" height="1.2" fill="#0a400a"/><rect x="103" y="24" width="6" height="6" fill="#18e018" stroke="#555" stroke-width="0.5"/><rect x="104.5" y="26.5" width="3" height="1.2" fill="#0a400a"/><rect x="89" y="34" width="12" height="34" fill="#22a4a4"/><rect x="92" y="37" width="6" height="16" rx="2" fill="#d8eeee"/><rect x="93.5" y="40" width="3" height="10" fill="#5a9a9a"/><rect x="101" y="34" width="11.6" height="34" fill="#2a56b0"/><rect x="103.5" y="37" width="6" height="16" rx="2" fill="#dfe8f8"/><rect x="105" y="40" width="3" height="10" fill="#5a7ad0"/><rect x="89" y="53" width="12" height="12" fill="#8ad0c0"/><circle cx="95" cy="59" r="3" fill="none" stroke="#fff" stroke-width="1"/><rect x="101" y="53" width="11.6" height="12" fill="#8a9ad8"/><circle cx="106.8" cy="59" r="3" fill="none" stroke="#ddd" stroke-width="1"/><rect x="101" y="65" width="11.6" height="12" fill="#555"/><rect x="103" y="67" width="3" height="8" fill="#ccc"/><rect x="107" y="67" width="3" height="8" fill="#ccc"/><rect x="92.5" y="72" width="7" height="6" fill="#18e018" stroke="#555" stroke-width="0.5"/><path d="M92 44 V97" stroke="#444" stroke-width="2"/><g transform="translate(115,2)"><rect x="0" y="0" width="141" height="19" fill="url(#hexdots2)"/></g><rect x="115" y="21" width="141" height="2" fill="#e2e2e2"/><rect x="115" y="23" width="141" height="5" fill="#d8d8d8"/><g transform="translate(0,28)"><rect x="115" y="0" width="141" height="65" fill="url(#pcie)"/></g><rect x="115" y="92.6" width="141" height="7.0" fill="#d4d4d4"/></g><rect x="306" y="358.0" width="256" height="102.6" fill="#000"/><g transform="translate(306,359.5)"><rect width="256" height="99.6" fill="#e4e4e4"/><rect x="0" y="0" width="6" height="99.6" fill="#d0d0d0"/><rect x="16.2" y="0" width="9" height="99.6" fill="#1e1e1e"/><polygon points="33.90,12.40 31.42,16.84 30.03,21.73 25.14,23.12 20.70,25.60 16.26,23.12 11.37,21.73 9.98,16.84 7.50,12.40 9.98,7.96 11.37,3.07 16.26,1.68 20.70,-0.80 25.14,1.68 30.03,3.07 31.42,7.96" fill="#1e1e1e"/><ellipse cx="20.7" cy="12.4" rx="6.8" ry="7" fill="#f2f2f2"/><rect x="7" y="10.8" width="31" height="3.2" fill="#7a7a7a"/><rect x="33" y="1.4000000000000004" width="23" height="22" fill="#d8d8d8"/><circle cx="37" cy="5.4" r="2" fill="#8fb88f"/><rect x="39.5" y="3.9000000000000004" width="15.5" height="17" fill="#4a4a4a"/><rect x="39.5" y="7.2" width="15.5" height="10.8" fill="#ff0a0a"/><rect x="44" y="11.8" width="2" height="1.2" fill="#300"/><rect x="47" y="9.9" width="2" height="5" fill="#300"/><rect x="35" y="18.4" width="4" height="3" fill="#e8d8a0"/><polygon points="33.90,38.10 31.42,42.54 30.03,47.43 25.14,48.82 20.70,51.30 16.26,48.82 11.37,47.43 9.98,42.54 7.50,38.10 9.98,33.66 11.37,28.77 16.26,27.38 20.70,24.90 25.14,27.38 30.03,28.77 31.42,33.66" fill="#1e1e1e"/><ellipse cx="20.7" cy="38.1" rx="6.8" ry="7" fill="#f2f2f2"/><rect x="7" y="36.5" width="31" height="3.2" fill="#7a7a7a"/><rect x="33" y="27.1" width="23" height="22" fill="#d8d8d8"/><circle cx="37" cy="31.1" r="2" fill="#8fb88f"/><rect x="39.5" y="29.6" width="15.5" height="17" fill="#4a4a4a"/><rect x="39.5" y="32.9" width="15.5" height="10.8" fill="#ff0a0a"/><rect x="44" y="37.5" width="2" height="1.2" fill="#300"/><rect x="47" y="35.6" width="2" height="5" fill="#300"/><rect x="35" y="44.1" width="4" height="3" fill="#e8d8a0"/><polygon points="33.90,63.10 31.42,67.54 30.03,72.43 25.14,73.82 20.70,76.30 16.26,73.82 11.37,72.43 9.98,67.54 7.50,63.10 9.98,58.66 11.37,53.77 16.26,52.38 20.70,49.90 25.14,52.38 30.03,53.77 31.42,58.66" fill="#1e1e1e"/><ellipse cx="20.7" cy="63.1" rx="6.8" ry="7" fill="#f2f2f2"/><rect x="7" y="61.5" width="31" height="3.2" fill="#7a7a7a"/><rect x="33" y="52.1" width="23" height="22" fill="#d8d8d8"/><circle cx="37" cy="56.1" r="2" fill="#8fb88f"/><rect x="39.5" y="54.6" width="15.5" height="17" fill="#4a4a4a"/><rect x="39.5" y="57.9" width="15.5" height="10.8" fill="#ff0a0a"/><rect x="44" y="62.5" width="2" height="1.2" fill="#300"/><rect x="47" y="60.6" width="2" height="5" fill="#300"/><rect x="35" y="69.1" width="4" height="3" fill="#e8d8a0"/><polygon points="33.90,88.20 31.42,92.64 30.03,97.53 25.14,98.92 20.70,101.40 16.26,98.92 11.37,97.53 9.98,92.64 7.50,88.20 9.98,83.76 11.37,78.87 16.26,77.48 20.70,75.00 25.14,77.48 30.03,78.87 31.42,83.76" fill="#1e1e1e"/><ellipse cx="20.7" cy="88.2" rx="6.8" ry="7" fill="#f2f2f2"/><rect x="7" y="86.60000000000001" width="31" height="3.2" fill="#7a7a7a"/><rect x="33" y="77.2" width="23" height="22" fill="#d8d8d8"/><circle cx="37" cy="81.2" r="2" fill="#8fb88f"/><rect x="39.5" y="79.7" width="15.5" height="17" fill="#4a4a4a"/><rect x="39.5" y="83.0" width="15.5" height="10.8" fill="#ff0a0a"/><rect x="44" y="87.60000000000001" width="2" height="1.2" fill="#300"/><rect x="47" y="85.7" width="2" height="5" fill="#300"/><rect x="35" y="94.2" width="4" height="3" fill="#e8d8a0"/><rect x="58.5" y="0" width="1.5" height="99.6" fill="#b8b8b8"/><rect x="66" y="2" width="20" height="95.6" fill="url(#hexdots)"/><rect x="88" y="2" width="26" height="95.6" fill="#eeeeee"/><rect x="94" y="10" width="6" height="6" fill="#18e018" stroke="#555" stroke-width="0.5"/><rect x="95.5" y="12.5" width="3" height="1.2" fill="#0a400a"/><rect x="94" y="24" width="6" height="6" fill="#18e018" stroke="#555" stroke-width="0.5"/><rect x="95.5" y="26.5" width="3" height="1.2" fill="#0a400a"/><rect x="103" y="10" width="6" height="6" fill="#18e018" stroke="#555" stroke-width="0.5"/><rect x="104.5" y="12.5" width="3" height="1.2" fill="#0a400a"/><rect x="103" y="24" width="6" height="6" fill="#18e018" stroke="#555" stroke-width="0.5"/><rect x="104.5" y="26.5" width="3" height="1.2" fill="#0a400a"/><rect x="89" y="34" width="12" height="34" fill="#22a4a4"/><rect x="92" y="37" width="6" height="16" rx="2" fill="#d8eeee"/><rect x="93.5" y="40" width="3" height="10" fill="#5a9a9a"/><rect x="101" y="34" width="11.6" height="34" fill="#2a56b0"/><rect x="103.5" y="37" width="6" height="16" rx="2" fill="#dfe8f8"/><rect x="105" y="40" width="3" height="10" fill="#5a7ad0"/><rect x="89" y="53" width="12" height="12" fill="#8ad0c0"/><circle cx="95" cy="59" r="3" fill="none" stroke="#fff" stroke-width="1"/><rect x="101" y="53" width="11.6" height="12" fill="#8a9ad8"/><circle cx="106.8" cy="59" r="3" fill="none" stroke="#ddd" stroke-width="1"/><rect x="101" y="65" width="11.6" height="12" fill="#555"/><rect x="103" y="67" width="3" height="8" fill="#ccc"/><rect x="107" y="67" width="3" height="8" fill="#ccc"/><rect x="92.5" y="72" width="7" height="6" fill="#18e018" stroke="#555" stroke-width="0.5"/><path d="M92 44 V97" stroke="#444" stroke-width="2"/><g transform="translate(115,2)"><rect x="0" y="0" width="141" height="19" fill="url(#hexdots2)"/></g><rect x="115" y="21" width="141" height="2" fill="#e2e2e2"/><rect x="115" y="23" width="141" height="5" fill="#d8d8d8"/><g transform="translate(0,28)"><rect x="115" y="0" width="141" height="65" fill="url(#pcie)"/></g><rect x="115" y="92.6" width="141" height="7.0" fill="#d4d4d4"/></g><rect x="306" y="459.6" width="256" height="102.6" fill="#000"/><g transform="translate(306,461.09999999999997)"><rect width="256" height="99.6" fill="#e4e4e4"/><rect x="0" y="0" width="6" height="99.6" fill="#d0d0d0"/><rect x="16.2" y="0" width="9" height="99.6" fill="#1e1e1e"/><polygon points="33.90,12.40 31.42,16.84 30.03,21.73 25.14,23.12 20.70,25.60 16.26,23.12 11.37,21.73 9.98,16.84 7.50,12.40 9.98,7.96 11.37,3.07 16.26,1.68 20.70,-0.80 25.14,1.68 30.03,3.07 31.42,7.96" fill="#1e1e1e"/><ellipse cx="20.7" cy="12.4" rx="6.8" ry="7" fill="#f2f2f2"/><rect x="7" y="10.8" width="31" height="3.2" fill="#7a7a7a"/><rect x="33" y="1.4000000000000004" width="23" height="22" fill="#d8d8d8"/><circle cx="37" cy="5.4" r="2" fill="#8fb88f"/><rect x="39.5" y="3.9000000000000004" width="15.5" height="17" fill="#4a4a4a"/><rect x="39.5" y="7.2" width="15.5" height="10.8" fill="#ff0a0a"/><rect x="44" y="11.8" width="2" height="1.2" fill="#300"/><rect x="47" y="9.9" width="2" height="5" fill="#300"/><rect x="35" y="18.4" width="4" height="3" fill="#e8d8a0"/><polygon points="33.90,38.10 31.42,42.54 30.03,47.43 25.14,48.82 20.70,51.30 16.26,48.82 11.37,47.43 9.98,42.54 7.50,38.10 9.98,33.66 11.37,28.77 16.26,27.38 20.70,24.90 25.14,27.38 30.03,28.77 31.42,33.66" fill="#1e1e1e"/><ellipse cx="20.7" cy="38.1" rx="6.8" ry="7" fill="#f2f2f2"/><rect x="7" y="36.5" width="31" height="3.2" fill="#7a7a7a"/><rect x="33" y="27.1" width="23" height="22" fill="#d8d8d8"/><circle cx="37" cy="31.1" r="2" fill="#8fb88f"/><rect x="39.5" y="29.6" width="15.5" height="17" fill="#4a4a4a"/><rect x="39.5" y="32.9" width="15.5" height="10.8" fill="#ff0a0a"/><rect x="44" y="37.5" width="2" height="1.2" fill="#300"/><rect x="47" y="35.6" width="2" height="5" fill="#300"/><rect x="35" y="44.1" width="4" height="3" fill="#e8d8a0"/><polygon points="33.90,63.10 31.42,67.54 30.03,72.43 25.14,73.82 20.70,76.30 16.26,73.82 11.37,72.43 9.98,67.54 7.50,63.10 9.98,58.66 11.37,53.77 16.26,52.38 20.70,49.90 25.14,52.38 30.03,53.77 31.42,58.66" fill="#1e1e1e"/><ellipse cx="20.7" cy="63.1" rx="6.8" ry="7" fill="#f2f2f2"/><rect x="7" y="61.5" width="31" height="3.2" fill="#7a7a7a"/><rect x="33" y="52.1" width="23" height="22" fill="#d8d8d8"/><circle cx="37" cy="56.1" r="2" fill="#8fb88f"/><rect x="39.5" y="54.6" width="15.5" height="17" fill="#4a4a4a"/><rect x="39.5" y="57.9" width="15.5" height="10.8" fill="#ff0a0a"/><rect x="44" y="62.5" width="2" height="1.2" fill="#300"/><rect x="47" y="60.6" width="2" height="5" fill="#300"/><rect x="35" y="69.1" width="4" height="3" fill="#e8d8a0"/><polygon points="33.90,88.20 31.42,92.64 30.03,97.53 25.14,98.92 20.70,101.40 16.26,98.92 11.37,97.53 9.98,92.64 7.50,88.20 9.98,83.76 11.37,78.87 16.26,77.48 20.70,75.00 25.14,77.48 30.03,78.87 31.42,83.76" fill="#1e1e1e"/><ellipse cx="20.7" cy="88.2" rx="6.8" ry="7" fill="#f2f2f2"/><rect x="7" y="86.60000000000001" width="31" height="3.2" fill="#7a7a7a"/><rect x="33" y="77.2" width="23" height="22" fill="#d8d8d8"/><circle cx="37" cy="81.2" r="2" fill="#8fb88f"/><rect x="39.5" y="79.7" width="15.5" height="17" fill="#4a4a4a"/><rect x="39.5" y="83.0" width="15.5" height="10.8" fill="#ff0a0a"/><rect x="44" y="87.60000000000001" width="2" height="1.2" fill="#300"/><rect x="47" y="85.7" width="2" height="5" fill="#300"/><rect x="35" y="94.2" width="4" height="3" fill="#e8d8a0"/><rect x="58.5" y="0" width="1.5" height="99.6" fill="#b8b8b8"/><rect x="66" y="2" width="20" height="95.6" fill="url(#hexdots)"/><rect x="88" y="2" width="26" height="95.6" fill="#eeeeee"/><rect x="94" y="10" width="6" height="6" fill="#18e018" stroke="#555" stroke-width="0.5"/><rect x="95.5" y="12.5" width="3" height="1.2" fill="#0a400a"/><rect x="94" y="24" width="6" height="6" fill="#18e018" stroke="#555" stroke-width="0.5"/><rect x="95.5" y="26.5" width="3" height="1.2" fill="#0a400a"/><rect x="103" y="10" width="6" height="6" fill="#18e018" stroke="#555" stroke-width="0.5"/><rect x="104.5" y="12.5" width="3" height="1.2" fill="#0a400a"/><rect x="103" y="24" width="6" height="6" fill="#18e018" stroke="#555" stroke-width="0.5"/><rect x="104.5" y="26.5" width="3" height="1.2" fill="#0a400a"/><rect x="89" y="34" width="12" height="34" fill="#22a4a4"/><rect x="92" y="37" width="6" height="16" rx="2" fill="#d8eeee"/><rect x="93.5" y="40" width="3" height="10" fill="#5a9a9a"/><rect x="101" y="34" width="11.6" height="34" fill="#2a56b0"/><rect x="103.5" y="37" width="6" height="16" rx="2" fill="#dfe8f8"/><rect x="105" y="40" width="3" height="10" fill="#5a7ad0"/><rect x="89" y="53" width="12" height="12" fill="#8ad0c0"/><circle cx="95" cy="59" r="3" fill="none" stroke="#fff" stroke-width="1"/><rect x="101" y="53" width="11.6" height="12" fill="#8a9ad8"/><circle cx="106.8" cy="59" r="3" fill="none" stroke="#ddd" stroke-width="1"/><rect x="101" y="65" width="11.6" height="12" fill="#555"/><rect x="103" y="67" width="3" height="8" fill="#ccc"/><rect x="107" y="67" width="3" height="8" fill="#ccc"/><rect x="92.5" y="72" width="7" height="6" fill="#18e018" stroke="#555" stroke-width="0.5"/><path d="M92 44 V97" stroke="#444" stroke-width="2"/><g transform="translate(115,2)"><rect x="0" y="0" width="141" height="19" fill="url(#hexdots2)"/></g><rect x="115" y="21" width="141" height="2" fill="#e2e2e2"/><rect x="115" y="23" width="141" height="5" fill="#d8d8d8"/><g transform="translate(0,28)"><rect x="115" y="0" width="141" height="65" fill="url(#pcie)"/></g><rect x="115" y="92.6" width="141" height="7.0" fill="#d4d4d4"/></g><rect x="306" y="561.2" width="256" height="26.4" fill="#000"/><rect x="306" y="562.7" width="256" height="23.399999999999864" fill="#990000"/><text x="366" y="580.7" font-family='"Liberation Sans", sans-serif' font-size="17" fill="#1a0000" stroke="#1a0000" stroke-width="0.15" textLength="115" lengthAdjust="spacingAndGlyphs">reserved 1 RU</text><rect x="306" y="586.6" width="256" height="26.4" fill="#000"/><rect x="306" y="588.0999999999999" width="256" height="23.40000000000009" fill="#990000"/><text x="366" y="606.0999999999999" font-family='"Liberation Sans", sans-serif' font-size="17" fill="#1a0000" stroke="#1a0000" stroke-width="0.15" textLength="115" lengthAdjust="spacingAndGlyphs">reserved 1 RU</text><rect x="306" y="612.0" width="256" height="26.4" fill="#000"/><rect x="306" y="613.5" width="256" height="23.399999999999977" fill="#990000"/><text x="366" y="631.5" font-family='"Liberation Sans", sans-serif' font-size="17" fill="#1a0000" stroke="#1a0000" stroke-width="0.15" textLength="115" lengthAdjust="spacingAndGlyphs">reserved 1 RU</text><rect x="306" y="637.4" width="256" height="51.8" fill="#000"/><g transform="translate(306,638.9)"><rect width="256" height="48.8" fill="#e6e6e6"/><rect x="0.5" y="0.5" width="255" height="47.8" fill="none" stroke="#b0b0b0" stroke-width="1"/><rect x="1" y="1" width="88.5" height="46.8" fill="#dedede"/><path d="M9 44 V9 H16" fill="none" stroke="#3a3a3a" stroke-width="2.6"/><rect x="21" y="5" width="57" height="6" fill="#f2f2f2"/><rect x="21" y="17" width="57" height="6" fill="#f2f2f2"/><rect x="21" y="29" width="57" height="6" fill="#f2f2f2"/><rect x="25" y="13.5" width="5" height="2.5" fill="#555"/><rect x="38" y="13.5" width="5" height="2.5" fill="#555"/><rect x="44" y="13.5" width="5" height="2.5" fill="#555"/><rect x="50" y="13.5" width="5" height="2.5" fill="#555"/><rect x="66" y="13.5" width="5" height="2.5" fill="#555"/><rect x="72" y="13.5" width="5" height="2.5" fill="#555"/><rect x="25" y="26" width="5" height="2.5" fill="#555"/><rect x="38" y="26" width="5" height="2.5" fill="#555"/><rect x="44" y="26" width="5" height="2.5" fill="#555"/><rect x="50" y="26" width="5" height="2.5" fill="#555"/><rect x="66" y="26" width="5" height="2.5" fill="#555"/><rect x="72" y="26" width="5" height="2.5" fill="#555"/><rect x="37" y="40" width="6" height="3" fill="#444"/><rect x="44" y="40" width="6" height="3" fill="#444"/><rect x="51" y="40" width="6" height="3" fill="#444"/><rect x="58" y="40" width="6" height="3" fill="#444"/><rect x="65" y="40" width="6" height="3" fill="#444"/><rect x="79" y="5" width="3" height="42" fill="#9a9a9a"/><rect x="83" y="5" width="2.5" height="42" fill="#f0f0f0"/><rect x="86" y="5" width="3" height="42" fill="#8a8a8a"/><rect x="90" y="1" width="44" height="46.8" fill="#efefef"/><rect x="92" y="4" width="7" height="38" rx="3" fill="#e0e0e0" stroke="#c8c8c8" stroke-width="0.6"/><rect x="124" y="4" width="7" height="38" rx="3" fill="#e0e0e0" stroke="#c8c8c8" stroke-width="0.6"/><rect x="103" y="4" width="3" height="2.5" fill="#444"/><rect x="113" y="4" width="3" height="2.5" fill="#444"/><rect x="107" y="11" width="3" height="2.5" fill="#444"/><rect x="112" y="11" width="3" height="2.5" fill="#444"/><rect x="117" y="11" width="3" height="2.5" fill="#444"/><rect x="104" y="17" width="3" height="2.5" fill="#444"/><rect x="116" y="17" width="3" height="2.5" fill="#444"/><rect x="103" y="24" width="3" height="2.5" fill="#444"/><rect x="108" y="24" width="3" height="2.5" fill="#444"/><rect x="114" y="24" width="3" height="2.5" fill="#444"/><rect x="108" y="28.5" width="8" height="5" fill="#18e018" stroke="#555" stroke-width="0.5"/><rect x="108" y="37" width="8" height="5" fill="#18e018" stroke="#555" stroke-width="0.5"/><rect x="134" y="1" width="12" height="33" fill="#e4e4e4"/><rect x="147" y="2.5" width="51" height="32" fill="#d8d8d8" stroke="#999" stroke-width="0.8"/><rect x="149" y="4" width="24" height="29" fill="url(#psugrill)"/><rect x="175" y="20" width="20" height="13" fill="url(#psugrill)"/><rect x="171" y="4" width="2" height="29" fill="#666"/><rect x="174" y="7.5" width="16" height="11" fill="#ff0a0a" stroke="#333" stroke-width="0.8"/><rect x="181" y="11" width="2" height="4" fill="#400"/><rect x="191" y="9" width="6" height="10" fill="#d070a0"/><rect x="198.5" y="2.5" width="51" height="32" fill="#d8d8d8" stroke="#999" stroke-width="0.8"/><rect x="200.5" y="4" width="24" height="29" fill="url(#psugrill)"/><rect x="226.5" y="20" width="20" height="13" fill="url(#psugrill)"/><rect x="222.5" y="4" width="2" height="29" fill="#666"/><rect x="224" y="7.5" width="16" height="11" fill="#ff0a0a" stroke="#333" stroke-width="0.8"/><rect x="231" y="11" width="2" height="4" fill="#400"/><rect x="241" y="9" width="6" height="10" fill="#d070a0"/><rect x="135.6" y="34.5" width="14.4" height="13" fill="#a8a8e0"/><circle cx="142.5" cy="40" r="2.2" fill="none" stroke="#7070b0" stroke-width="0.8"/><rect x="150" y="34.5" width="12" height="13" fill="#c8eec8"/><rect x="162" y="34.5" width="22" height="13" fill="#20a0a0"/><rect x="166" y="37.5" width="14" height="5" rx="2.5" fill="none" stroke="#e0f0f0" stroke-width="1"/><rect x="184" y="34.5" width="20.5" height="13" fill="#333"/><rect x="187" y="37" width="15" height="2" fill="#999"/><rect x="187" y="42" width="15" height="2" fill="#999"/><rect x="204.8" y="34.5" width="19" height="13" fill="#2a56c0"/><rect x="208" y="37.5" width="12" height="5" rx="2.5" fill="none" stroke="#c8d8f8" stroke-width="1"/><rect x="225.8" y="36" width="7.5" height="6" fill="#18e018" stroke="#555" stroke-width="0.5"/><circle cx="238" cy="40" r="2.5" fill="none" stroke="#bbb" stroke-width="0.8"/></g><rect x="306" y="688.2" width="256" height="26.4" fill="#000"/><rect x="306" y="689.6999999999999" width="256" height="23.399999999999977" fill="#cccccc"/><text x="359.6" y="707.6999999999999" font-family='"Liberation Sans", sans-serif' font-size="17" fill="#111" stroke="#111" stroke-width="0.15" textLength="130.5" lengthAdjust="spacingAndGlyphs">Blindpanel 1 RU</text><rect x="306" y="713.6" width="256" height="51.8" fill="#000"/><g transform="translate(306,715.0999999999999)"><rect width="256" height="48.8" fill="#e6e6e6"/><rect x="0.5" y="0.5" width="255" height="47.8" fill="none" stroke="#b0b0b0" stroke-width="1"/><rect x="1" y="1" width="88.5" height="46.8" fill="#dedede"/><path d="M9 44 V9 H16" fill="none" stroke="#3a3a3a" stroke-width="2.6"/><rect x="21" y="5" width="57" height="6" fill="#f2f2f2"/><rect x="21" y="17" width="57" height="6" fill="#f2f2f2"/><rect x="21" y="29" width="57" height="6" fill="#f2f2f2"/><rect x="25" y="13.5" width="5" height="2.5" fill="#555"/><rect x="38" y="13.5" width="5" height="2.5" fill="#555"/><rect x="44" y="13.5" width="5" height="2.5" fill="#555"/><rect x="50" y="13.5" width="5" height="2.5" fill="#555"/><rect x="66" y="13.5" width="5" height="2.5" fill="#555"/><rect x="72" y="13.5" width="5" height="2.5" fill="#555"/><rect x="25" y="26" width="5" height="2.5" fill="#555"/><rect x="38" y="26" width="5" height="2.5" fill="#555"/><rect x="44" y="26" width="5" height="2.5" fill="#555"/><rect x="50" y="26" width="5" height="2.5" fill="#555"/><rect x="66" y="26" width="5" height="2.5" fill="#555"/><rect x="72" y="26" width="5" height="2.5" fill="#555"/><rect x="37" y="40" width="6" height="3" fill="#444"/><rect x="44" y="40" width="6" height="3" fill="#444"/><rect x="51" y="40" width="6" height="3" fill="#444"/><rect x="58" y="40" width="6" height="3" fill="#444"/><rect x="65" y="40" width="6" height="3" fill="#444"/><rect x="79" y="5" width="3" height="42" fill="#9a9a9a"/><rect x="83" y="5" width="2.5" height="42" fill="#f0f0f0"/><rect x="86" y="5" width="3" height="42" fill="#8a8a8a"/><rect x="90" y="1" width="44" height="46.8" fill="#efefef"/><rect x="92" y="4" width="7" height="38" rx="3" fill="#e0e0e0" stroke="#c8c8c8" stroke-width="0.6"/><rect x="124" y="4" width="7" height="38" rx="3" fill="#e0e0e0" stroke="#c8c8c8" stroke-width="0.6"/><rect x="103" y="4" width="3" height="2.5" fill="#444"/><rect x="113" y="4" width="3" height="2.5" fill="#444"/><rect x="107" y="11" width="3" height="2.5" fill="#444"/><rect x="112" y="11" width="3" height="2.5" fill="#444"/><rect x="117" y="11" width="3" height="2.5" fill="#444"/><rect x="104" y="17" width="3" height="2.5" fill="#444"/><rect x="116" y="17" width="3" height="2.5" fill="#444"/><rect x="103" y="24" width="3" height="2.5" fill="#444"/><rect x="108" y="24" width="3" height="2.5" fill="#444"/><rect x="114" y="24" width="3" height="2.5" fill="#444"/><rect x="108" y="28.5" width="8" height="5" fill="#18e018" stroke="#555" stroke-width="0.5"/><rect x="108" y="37" width="8" height="5" fill="#18e018" stroke="#555" stroke-width="0.5"/><rect x="134" y="1" width="12" height="33" fill="#e4e4e4"/><rect x="147" y="2.5" width="51" height="32" fill="#d8d8d8" stroke="#999" stroke-width="0.8"/><rect x="149" y="4" width="24" height="29" fill="url(#psugrill)"/><rect x="175" y="20" width="20" height="13" fill="url(#psugrill)"/><rect x="171" y="4" width="2" height="29" fill="#666"/><rect x="174" y="7.5" width="16" height="11" fill="#ff0a0a" stroke="#333" stroke-width="0.8"/><rect x="181" y="11" width="2" height="4" fill="#400"/><rect x="191" y="9" width="6" height="10" fill="#d070a0"/><rect x="198.5" y="2.5" width="51" height="32" fill="#d8d8d8" stroke="#999" stroke-width="0.8"/><rect x="200.5" y="4" width="24" height="29" fill="url(#psugrill)"/><rect x="226.5" y="20" width="20" height="13" fill="url(#psugrill)"/><rect x="222.5" y="4" width="2" height="29" fill="#666"/><rect x="224" y="7.5" width="16" height="11" fill="#ff0a0a" stroke="#333" stroke-width="0.8"/><rect x="231" y="11" width="2" height="4" fill="#400"/><rect x="241" y="9" width="6" height="10" fill="#d070a0"/><rect x="135.6" y="34.5" width="14.4" height="13" fill="#a8a8e0"/><circle cx="142.5" cy="40" r="2.2" fill="none" stroke="#7070b0" stroke-width="0.8"/><rect x="150" y="34.5" width="12" height="13" fill="#c8eec8"/><rect x="162" y="34.5" width="22" height="13" fill="#20a0a0"/><rect x="166" y="37.5" width="14" height="5" rx="2.5" fill="none" stroke="#e0f0f0" stroke-width="1"/><rect x="184" y="34.5" width="20.5" height="13" fill="#333"/><rect x="187" y="37" width="15" height="2" fill="#999"/><rect x="187" y="42" width="15" height="2" fill="#999"/><rect x="204.8" y="34.5" width="19" height="13" fill="#2a56c0"/><rect x="208" y="37.5" width="12" height="5" rx="2.5" fill="none" stroke="#c8d8f8" stroke-width="1"/><rect x="225.8" y="36" width="7.5" height="6" fill="#18e018" stroke="#555" stroke-width="0.5"/><circle cx="238" cy="40" r="2.5" fill="none" stroke="#bbb" stroke-width="0.8"/></g><rect x="306" y="764.4" width="256" height="26.4" fill="#000"/><rect x="306" y="765.9" width="256" height="23.399999999999977" fill="#cccccc"/><text x="359.6" y="783.9" font-family='"Liberation Sans", sans-serif' font-size="17" fill="#111" stroke="#111" stroke-width="0.15" textLength="130.5" lengthAdjust="spacingAndGlyphs">Blindpanel 1 RU</text><rect x="306" y="789.8" width="256" height="51.8" fill="#000"/><g transform="translate(306,791.3)"><rect width="256" height="48.8" fill="#e6e6e6"/><rect x="0.5" y="0.5" width="255" height="47.8" fill="none" stroke="#b0b0b0" stroke-width="1"/><rect x="1" y="1" width="88.5" height="46.8" fill="#dedede"/><path d="M9 44 V9 H16" fill="none" stroke="#3a3a3a" stroke-width="2.6"/><rect x="21" y="5" width="57" height="6" fill="#f2f2f2"/><rect x="21" y="17" width="57" height="6" fill="#f2f2f2"/><rect x="21" y="29" width="57" height="6" fill="#f2f2f2"/><rect x="25" y="13.5" width="5" height="2.5" fill="#555"/><rect x="38" y="13.5" width="5" height="2.5" fill="#555"/><rect x="44" y="13.5" width="5" height="2.5" fill="#555"/><rect x="50" y="13.5" width="5" height="2.5" fill="#555"/><rect x="66" y="13.5" width="5" height="2.5" fill="#555"/><rect x="72" y="13.5" width="5" height="2.5" fill="#555"/><rect x="25" y="26" width="5" height="2.5" fill="#555"/><rect x="38" y="26" width="5" height="2.5" fill="#555"/><rect x="44" y="26" width="5" height="2.5" fill="#555"/><rect x="50" y="26" width="5" height="2.5" fill="#555"/><rect x="66" y="26" width="5" height="2.5" fill="#555"/><rect x="72" y="26" width="5" height="2.5" fill="#555"/><rect x="37" y="40" width="6" height="3" fill="#444"/><rect x="44" y="40" width="6" height="3" fill="#444"/><rect x="51" y="40" width="6" height="3" fill="#444"/><rect x="58" y="40" width="6" height="3" fill="#444"/><rect x="65" y="40" width="6" height="3" fill="#444"/><rect x="79" y="5" width="3" height="42" fill="#9a9a9a"/><rect x="83" y="5" width="2.5" height="42" fill="#f0f0f0"/><rect x="86" y="5" width="3" height="42" fill="#8a8a8a"/><rect x="90" y="1" width="44" height="46.8" fill="#efefef"/><rect x="92" y="4" width="7" height="38" rx="3" fill="#e0e0e0" stroke="#c8c8c8" stroke-width="0.6"/><rect x="124" y="4" width="7" height="38" rx="3" fill="#e0e0e0" stroke="#c8c8c8" stroke-width="0.6"/><rect x="103" y="4" width="3" height="2.5" fill="#444"/><rect x="113" y="4" width="3" height="2.5" fill="#444"/><rect x="107" y="11" width="3" height="2.5" fill="#444"/><rect x="112" y="11" width="3" height="2.5" fill="#444"/><rect x="117" y="11" width="3" height="2.5" fill="#444"/><rect x="104" y="17" width="3" height="2.5" fill="#444"/><rect x="116" y="17" width="3" height="2.5" fill="#444"/><rect x="103" y="24" width="3" height="2.5" fill="#444"/><rect x="108" y="24" width="3" height="2.5" fill="#444"/><rect x="114" y="24" width="3" height="2.5" fill="#444"/><rect x="108" y="28.5" width="8" height="5" fill="#18e018" stroke="#555" stroke-width="0.5"/><rect x="108" y="37" width="8" height="5" fill="#18e018" stroke="#555" stroke-width="0.5"/><rect x="134" y="1" width="12" height="33" fill="#e4e4e4"/><rect x="147" y="2.5" width="51" height="32" fill="#d8d8d8" stroke="#999" stroke-width="0.8"/><rect x="149" y="4" width="24" height="29" fill="url(#psugrill)"/><rect x="175" y="20" width="20" height="13" fill="url(#psugrill)"/><rect x="171" y="4" width="2" height="29" fill="#666"/><rect x="174" y="7.5" width="16" height="11" fill="#ff0a0a" stroke="#333" stroke-width="0.8"/><rect x="181" y="11" width="2" height="4" fill="#400"/><rect x="191" y="9" width="6" height="10" fill="#d070a0"/><rect x="198.5" y="2.5" width="51" height="32" fill="#d8d8d8" stroke="#999" stroke-width="0.8"/><rect x="200.5" y="4" width="24" height="29" fill="url(#psugrill)"/><rect x="226.5" y="20" width="20" height="13" fill="url(#psugrill)"/><rect x="222.5" y="4" width="2" height="29" fill="#666"/><rect x="224" y="7.5" width="16" height="11" fill="#ff0a0a" stroke="#333" stroke-width="0.8"/><rect x="231" y="11" width="2" height="4" fill="#400"/><rect x="241" y="9" width="6" height="10" fill="#d070a0"/><rect x="135.6" y="34.5" width="14.4" height="13" fill="#a8a8e0"/><circle cx="142.5" cy="40" r="2.2" fill="none" stroke="#7070b0" stroke-width="0.8"/><rect x="150" y="34.5" width="12" height="13" fill="#c8eec8"/><rect x="162" y="34.5" width="22" height="13" fill="#20a0a0"/><rect x="166" y="37.5" width="14" height="5" rx="2.5" fill="none" stroke="#e0f0f0" stroke-width="1"/><rect x="184" y="34.5" width="20.5" height="13" fill="#333"/><rect x="187" y="37" width="15" height="2" fill="#999"/><rect x="187" y="42" width="15" height="2" fill="#999"/><rect x="204.8" y="34.5" width="19" height="13" fill="#2a56c0"/><rect x="208" y="37.5" width="12" height="5" rx="2.5" fill="none" stroke="#c8d8f8" stroke-width="1"/><rect x="225.8" y="36" width="7.5" height="6" fill="#18e018" stroke="#555" stroke-width="0.5"/><circle cx="238" cy="40" r="2.5" fill="none" stroke="#bbb" stroke-width="0.8"/></g><rect x="306" y="840.6" width="256" height="26.4" fill="#000"/><rect x="306" y="842.0999999999999" width="256" height="23.40000000000009" fill="#cccccc"/><text x="359.6" y="860.0999999999999" font-family='"Liberation Sans", sans-serif' font-size="17" fill="#111" stroke="#111" stroke-width="0.15" textLength="130.5" lengthAdjust="spacingAndGlyphs">Blindpanel 1 RU</text><rect x="306" y="866.0" width="256" height="51.8" fill="#000"/><g transform="translate(306,867.5)"><rect width="256" height="48.8" fill="#e6e6e6"/><rect x="0.5" y="0.5" width="255" height="47.8" fill="none" stroke="#b0b0b0" stroke-width="1"/><rect x="1" y="1" width="88.5" height="46.8" fill="#dedede"/><path d="M9 44 V9 H16" fill="none" stroke="#3a3a3a" stroke-width="2.6"/><rect x="21" y="5" width="57" height="6" fill="#f2f2f2"/><rect x="21" y="17" width="57" height="6" fill="#f2f2f2"/><rect x="21" y="29" width="57" height="6" fill="#f2f2f2"/><rect x="25" y="13.5" width="5" height="2.5" fill="#555"/><rect x="38" y="13.5" width="5" height="2.5" fill="#555"/><rect x="44" y="13.5" width="5" height="2.5" fill="#555"/><rect x="50" y="13.5" width="5" height="2.5" fill="#555"/><rect x="66" y="13.5" width="5" height="2.5" fill="#555"/><rect x="72" y="13.5" width="5" height="2.5" fill="#555"/><rect x="25" y="26" width="5" height="2.5" fill="#555"/><rect x="38" y="26" width="5" height="2.5" fill="#555"/><rect x="44" y="26" width="5" height="2.5" fill="#555"/><rect x="50" y="26" width="5" height="2.5" fill="#555"/><rect x="66" y="26" width="5" height="2.5" fill="#555"/><rect x="72" y="26" width="5" height="2.5" fill="#555"/><rect x="37" y="40" width="6" height="3" fill="#444"/><rect x="44" y="40" width="6" height="3" fill="#444"/><rect x="51" y="40" width="6" height="3" fill="#444"/><rect x="58" y="40" width="6" height="3" fill="#444"/><rect x="65" y="40" width="6" height="3" fill="#444"/><rect x="79" y="5" width="3" height="42" fill="#9a9a9a"/><rect x="83" y="5" width="2.5" height="42" fill="#f0f0f0"/><rect x="86" y="5" width="3" height="42" fill="#8a8a8a"/><rect x="90" y="1" width="44" height="46.8" fill="#efefef"/><rect x="92" y="4" width="7" height="38" rx="3" fill="#e0e0e0" stroke="#c8c8c8" stroke-width="0.6"/><rect x="124" y="4" width="7" height="38" rx="3" fill="#e0e0e0" stroke="#c8c8c8" stroke-width="0.6"/><rect x="103" y="4" width="3" height="2.5" fill="#444"/><rect x="113" y="4" width="3" height="2.5" fill="#444"/><rect x="107" y="11" width="3" height="2.5" fill="#444"/><rect x="112" y="11" width="3" height="2.5" fill="#444"/><rect x="117" y="11" width="3" height="2.5" fill="#444"/><rect x="104" y="17" width="3" height="2.5" fill="#444"/><rect x="116" y="17" width="3" height="2.5" fill="#444"/><rect x="103" y="24" width="3" height="2.5" fill="#444"/><rect x="108" y="24" width="3" height="2.5" fill="#444"/><rect x="114" y="24" width="3" height="2.5" fill="#444"/><rect x="108" y="28.5" width="8" height="5" fill="#18e018" stroke="#555" stroke-width="0.5"/><rect x="108" y="37" width="8" height="5" fill="#18e018" stroke="#555" stroke-width="0.5"/><rect x="134" y="1" width="12" height="33" fill="#e4e4e4"/><rect x="147" y="2.5" width="51" height="32" fill="#d8d8d8" stroke="#999" stroke-width="0.8"/><rect x="149" y="4" width="24" height="29" fill="url(#psugrill)"/><rect x="175" y="20" width="20" height="13" fill="url(#psugrill)"/><rect x="171" y="4" width="2" height="29" fill="#666"/><rect x="174" y="7.5" width="16" height="11" fill="#ff0a0a" stroke="#333" stroke-width="0.8"/><rect x="181" y="11" width="2" height="4" fill="#400"/><rect x="191" y="9" width="6" height="10" fill="#d070a0"/><rect x="198.5" y="2.5" width="51" height="32" fill="#d8d8d8" stroke="#999" stroke-width="0.8"/><rect x="200.5" y="4" width="24" height="29" fill="url(#psugrill)"/><rect x="226.5" y="20" width="20" height="13" fill="url(#psugrill)"/><rect x="222.5" y="4" width="2" height="29" fill="#666"/><rect x="224" y="7.5" width="16" height="11" fill="#ff0a0a" stroke="#333" stroke-width="0.8"/><rect x="231" y="11" width="2" height="4" fill="#400"/><rect x="241" y="9" width="6" height="10" fill="#d070a0"/><rect x="135.6" y="34.5" width="14.4" height="13" fill="#a8a8e0"/><circle cx="142.5" cy="40" r="2.2" fill="none" stroke="#7070b0" stroke-width="0.8"/><rect x="150" y="34.5" width="12" height="13" fill="#c8eec8"/><rect x="162" y="34.5" width="22" height="13" fill="#20a0a0"/><rect x="166" y="37.5" width="14" height="5" rx="2.5" fill="none" stroke="#e0f0f0" stroke-width="1"/><rect x="184" y="34.5" width="20.5" height="13" fill="#333"/><rect x="187" y="37" width="15" height="2" fill="#999"/><rect x="187" y="42" width="15" height="2" fill="#999"/><rect x="204.8" y="34.5" width="19" height="13" fill="#2a56c0"/><rect x="208" y="37.5" width="12" height="5" rx="2.5" fill="none" stroke="#c8d8f8" stroke-width="1"/><rect x="225.8" y="36" width="7.5" height="6" fill="#18e018" stroke="#555" stroke-width="0.5"/><circle cx="238" cy="40" r="2.5" fill="none" stroke="#bbb" stroke-width="0.8"/></g><rect x="306" y="916.8" width="256" height="26.4" fill="#000"/><rect x="306" y="918.3" width="256" height="23.399999999999977" fill="#cccccc"/><text x="359.6" y="936.3" font-family='"Liberation Sans", sans-serif' font-size="17" fill="#111" stroke="#111" stroke-width="0.15" textLength="130.5" lengthAdjust="spacingAndGlyphs">Blindpanel 1 RU</text><rect x="306" y="942.2" width="256" height="51.8" fill="#000"/><g transform="translate(306,943.6999999999999)"><rect width="256" height="48.8" fill="#e6e6e6"/><rect x="0.5" y="0.5" width="255" height="47.8" fill="none" stroke="#b0b0b0" stroke-width="1"/><rect x="1" y="1" width="88.5" height="46.8" fill="#dedede"/><path d="M9 44 V9 H16" fill="none" stroke="#3a3a3a" stroke-width="2.6"/><rect x="21" y="5" width="57" height="6" fill="#f2f2f2"/><rect x="21" y="17" width="57" height="6" fill="#f2f2f2"/><rect x="21" y="29" width="57" height="6" fill="#f2f2f2"/><rect x="25" y="13.5" width="5" height="2.5" fill="#555"/><rect x="38" y="13.5" width="5" height="2.5" fill="#555"/><rect x="44" y="13.5" width="5" height="2.5" fill="#555"/><rect x="50" y="13.5" width="5" height="2.5" fill="#555"/><rect x="66" y="13.5" width="5" height="2.5" fill="#555"/><rect x="72" y="13.5" width="5" height="2.5" fill="#555"/><rect x="25" y="26" width="5" height="2.5" fill="#555"/><rect x="38" y="26" width="5" height="2.5" fill="#555"/><rect x="44" y="26" width="5" height="2.5" fill="#555"/><rect x="50" y="26" width="5" height="2.5" fill="#555"/><rect x="66" y="26" width="5" height="2.5" fill="#555"/><rect x="72" y="26" width="5" height="2.5" fill="#555"/><rect x="37" y="40" width="6" height="3" fill="#444"/><rect x="44" y="40" width="6" height="3" fill="#444"/><rect x="51" y="40" width="6" height="3" fill="#444"/><rect x="58" y="40" width="6" height="3" fill="#444"/><rect x="65" y="40" width="6" height="3" fill="#444"/><rect x="79" y="5" width="3" height="42" fill="#9a9a9a"/><rect x="83" y="5" width="2.5" height="42" fill="#f0f0f0"/><rect x="86" y="5" width="3" height="42" fill="#8a8a8a"/><rect x="90" y="1" width="44" height="46.8" fill="#efefef"/><rect x="92" y="4" width="7" height="38" rx="3" fill="#e0e0e0" stroke="#c8c8c8" stroke-width="0.6"/><rect x="124" y="4" width="7" height="38" rx="3" fill="#e0e0e0" stroke="#c8c8c8" stroke-width="0.6"/><rect x="103" y="4" width="3" height="2.5" fill="#444"/><rect x="113" y="4" width="3" height="2.5" fill="#444"/><rect x="107" y="11" width="3" height="2.5" fill="#444"/><rect x="112" y="11" width="3" height="2.5" fill="#444"/><rect x="117" y="11" width="3" height="2.5" fill="#444"/><rect x="104" y="17" width="3" height="2.5" fill="#444"/><rect x="116" y="17" width="3" height="2.5" fill="#444"/><rect x="103" y="24" width="3" height="2.5" fill="#444"/><rect x="108" y="24" width="3" height="2.5" fill="#444"/><rect x="114" y="24" width="3" height="2.5" fill="#444"/><rect x="108" y="28.5" width="8" height="5" fill="#18e018" stroke="#555" stroke-width="0.5"/><rect x="108" y="37" width="8" height="5" fill="#18e018" stroke="#555" stroke-width="0.5"/><rect x="134" y="1" width="12" height="33" fill="#e4e4e4"/><rect x="147" y="2.5" width="51" height="32" fill="#d8d8d8" stroke="#999" stroke-width="0.8"/><rect x="149" y="4" width="24" height="29" fill="url(#psugrill)"/><rect x="175" y="20" width="20" height="13" fill="url(#psugrill)"/><rect x="171" y="4" width="2" height="29" fill="#666"/><rect x="174" y="7.5" width="16" height="11" fill="#ff0a0a" stroke="#333" stroke-width="0.8"/><rect x="181" y="11" width="2" height="4" fill="#400"/><rect x="191" y="9" width="6" height="10" fill="#d070a0"/><rect x="198.5" y="2.5" width="51" height="32" fill="#d8d8d8" stroke="#999" stroke-width="0.8"/><rect x="200.5" y="4" width="24" height="29" fill="url(#psugrill)"/><rect x="226.5" y="20" width="20" height="13" fill="url(#psugrill)"/><rect x="222.5" y="4" width="2" height="29" fill="#666"/><rect x="224" y="7.5" width="16" height="11" fill="#ff0a0a" stroke="#333" stroke-width="0.8"/><rect x="231" y="11" width="2" height="4" fill="#400"/><rect x="241" y="9" width="6" height="10" fill="#d070a0"/><rect x="135.6" y="34.5" width="14.4" height="13" fill="#a8a8e0"/><circle cx="142.5" cy="40" r="2.2" fill="none" stroke="#7070b0" stroke-width="0.8"/><rect x="150" y="34.5" width="12" height="13" fill="#c8eec8"/><rect x="162" y="34.5" width="22" height="13" fill="#20a0a0"/><rect x="166" y="37.5" width="14" height="5" rx="2.5" fill="none" stroke="#e0f0f0" stroke-width="1"/><rect x="184" y="34.5" width="20.5" height="13" fill="#333"/><rect x="187" y="37" width="15" height="2" fill="#999"/><rect x="187" y="42" width="15" height="2" fill="#999"/><rect x="204.8" y="34.5" width="19" height="13" fill="#2a56c0"/><rect x="208" y="37.5" width="12" height="5" rx="2.5" fill="none" stroke="#c8d8f8" stroke-width="1"/><rect x="225.8" y="36" width="7.5" height="6" fill="#18e018" stroke="#555" stroke-width="0.5"/><circle cx="238" cy="40" r="2.5" fill="none" stroke="#bbb" stroke-width="0.8"/></g><rect x="306" y="993.0" width="256" height="26.4" fill="#000"/><rect x="306" y="994.5" width="256" height="23.399999999999977" fill="#cccccc"/><text x="359.6" y="1012.5" font-family='"Liberation Sans", sans-serif' font-size="17" fill="#111" stroke="#111" stroke-width="0.15" textLength="130.5" lengthAdjust="spacingAndGlyphs">Blindpanel 1 RU</text><g transform="translate(312,1019.6999999999999)"><rect x="0.5" y="0.5" width="249.5" height="23.4" fill="#a8a8a8" stroke="#555" stroke-width="1"/><polygon points="24.0,16.3 18.1,22.2 9.9,22.2 4.0,16.3 4.0,8.1 9.9,2.2 18.1,2.2 24.0,8.1" fill="#333"/><circle cx="14" cy="12.2" r="4.3" fill="#d8d8d8"/><polygon points="221.6,16.3 215.7,22.2 207.5,22.2 201.6,16.3 201.6,8.1 207.5,2.2 215.7,2.2 221.6,8.1" fill="#333"/><circle cx="211.6" cy="12.2" r="4.3" fill="#d8d8d8"/><path d="M39 2.5 H47 L50.6 6 V18 L47 21.5 H39 Z" fill="#111"/><rect x="33.7" y="6.4" width="14.7" height="10" fill="#10e010"/><rect x="41" y="9" width="2" height="5" fill="#222"/><path d="M236 2.5 H244 L247.6 6 V18 L244 21.5 H236 Z" fill="#111"/><rect x="230.7" y="6.4" width="14.7" height="10" fill="#10e010"/><rect x="238" y="9" width="2" height="5" fill="#222"/><rect x="65" y="2.5" width="45" height="19.5" fill="url(#darkgrill)"/><rect x="110" y="1" width="12" height="22.4" fill="#b8b8b8"/><rect x="122" y="1" width="6" height="22.4" fill="#ffffff"/><rect x="128" y="1" width="16" height="22.4" fill="#b8b8b8"/><rect x="144" y="2.5" width="44" height="19.5" fill="url(#darkgrill)"/></g><rect x="307.5" y="1069.6999999999998" width="253.5" height="26.5" fill="#333"/><g transform="translate(308.2,1070.2999999999997)"><rect x="0.5" y="0.5" width="251.8" height="23.4" fill="#d0d0d0" stroke="#555" stroke-width="1"/><rect x="1" y="1" width="250.8" height="2" fill="#9a9a9a"/><rect x="2" y="2" width="16" height="20" fill="#aaaaaa" stroke="#888" stroke-width="0.6"/><path d="M6 7 H11 L14 10 V15 L11 18 H6 Z" fill="none" stroke="#8a8a8a" stroke-width="1.2"/><rect x="21" y="3.0" width="13" height="1.9" rx="0.8" fill="#3a3a3a"/><rect x="37.5" y="3.0" width="7" height="1.9" fill="#4a4a4a"/><rect x="46.2" y="3.0" width="7" height="1.9" fill="#4a4a4a"/><rect x="54.9" y="3.0" width="7" height="1.9" fill="#4a4a4a"/><rect x="21" y="6.2" width="13" height="1.9" rx="0.8" fill="#3a3a3a"/><rect x="37.5" y="6.2" width="7" height="1.9" fill="#4a4a4a"/><rect x="46.2" y="6.2" width="7" height="1.9" fill="#4a4a4a"/><rect x="54.9" y="6.2" width="7" height="1.9" fill="#4a4a4a"/><rect x="21" y="9.4" width="13" height="1.9" rx="0.8" fill="#3a3a3a"/><rect x="37.5" y="9.4" width="7" height="1.9" fill="#4a4a4a"/><rect x="46.2" y="9.4" width="7" height="1.9" fill="#4a4a4a"/><rect x="54.9" y="9.4" width="7" height="1.9" fill="#4a4a4a"/><rect x="21" y="12.6" width="13" height="1.9" rx="0.8" fill="#3a3a3a"/><rect x="37.5" y="12.6" width="7" height="1.9" fill="#4a4a4a"/><rect x="46.2" y="12.6" width="7" height="1.9" fill="#4a4a4a"/><rect x="54.9" y="12.6" width="7" height="1.9" fill="#4a4a4a"/><rect x="21" y="15.8" width="13" height="1.9" rx="0.8" fill="#3a3a3a"/><rect x="37.5" y="15.8" width="7" height="1.9" fill="#4a4a4a"/><rect x="46.2" y="15.8" width="7" height="1.9" fill="#4a4a4a"/><rect x="54.9" y="15.8" width="7" height="1.9" fill="#4a4a4a"/><rect x="21" y="19.0" width="13" height="1.9" rx="0.8" fill="#3a3a3a"/><rect x="37.5" y="19.0" width="7" height="1.9" fill="#4a4a4a"/><rect x="46.2" y="19.0" width="7" height="1.9" fill="#4a4a4a"/><rect x="54.9" y="19.0" width="7" height="1.9" fill="#4a4a4a"/><rect x="64" y="2" width="16" height="20" fill="#e4e4e4"/><circle cx="73.4" cy="8" r="2.2" fill="#a8c060"/><circle cx="73.4" cy="16" r="2.2" fill="#9070c0"/><rect x="82" y="2" width="16.4" height="20" fill="url(#darkgrill)"/><rect x="100" y="2" width="25" height="20" fill="#e0e0e0"/><ellipse cx="114.7" cy="8" rx="7.5" ry="2.8" fill="#a8c060" stroke="#666" stroke-width="0.7"/><ellipse cx="114.7" cy="16" rx="7.5" ry="2.8" fill="#9070c0" stroke="#666" stroke-width="0.7"/><rect x="125" y="5" width="17.5" height="13" fill="url(#darkgrill)"/><rect x="141.4" y="1" width="13" height="5" fill="#444"/><rect x="147.4" y="14" width="7" height="6.3" fill="#10e010" stroke="#333" stroke-width="0.6"/><rect x="158" y="1.5" width="7.3" height="4" fill="#555"/><rect x="158" y="9" width="7.3" height="2.2" fill="#555"/><rect x="158" y="15.5" width="7.3" height="2.2" fill="#555"/><rect x="167.5" y="2" width="28.5" height="6" fill="#ececec"/><rect x="167.5" y="10" width="81.5" height="11.4" fill="url(#darkgrill)" opacity="0.85"/><rect x="197" y="2" width="7.5" height="7" fill="#10e010" stroke="#333" stroke-width="0.7"/><rect x="211" y="2" width="8" height="7" fill="#10e010" stroke="#333" stroke-width="0.7"/><rect x="225" y="2.6" width="11" height="4" fill="#3a3a3a"/><rect x="236" y="0.5" width="15" height="8.5" fill="#10e010"/></g><rect x="306" y="1094.6" width="256" height="26.4" fill="#000"/><rect x="306" y="1096.1" width="256" height="23.40000000000009" fill="#ff3300"/><text x="370.3" y="1114.1" font-family='"Liberation Sans", sans-serif' font-size="17" fill="#1a0500" stroke="#1a0500" stroke-width="0.15" textLength="108" lengthAdjust="spacingAndGlyphs">blocked 1 RU</text><rect x="306" y="1120.0" width="256" height="26.4" fill="#000"/><rect x="306" y="1121.5" width="256" height="23.399999999999864" fill="#ff3300"/><text x="370.3" y="1139.5" font-family='"Liberation Sans", sans-serif' font-size="17" fill="#1a0500" stroke="#1a0500" stroke-width="0.15" textLength="108" lengthAdjust="spacingAndGlyphs">blocked 1 RU</text><rect x="306" y="1145.4" width="256" height="26.4" fill="#000"/><rect x="306" y="1146.8999999999999" width="256" height="23.40000000000009" fill="#ff3300"/><text x="370.3" y="1164.8999999999999" font-family='"Liberation Sans", sans-serif' font-size="17" fill="#1a0500" stroke="#1a0500" stroke-width="0.15" textLength="108" lengthAdjust="spacingAndGlyphs">blocked 1 RU</text><rect x="234.5" y="130.4" width="33.5" height="456.2" fill="#ff9933" stroke="#333" stroke-width="1"/><rect x="243.5" y="135.9" width="15" height="9" fill="#10e010" stroke="#555" stroke-width="0.6"/><rect x="236.0" y="149.70000000000002" width="2.6" height="2" fill="#2a1a00" opacity="0.55"/><rect x="239.6" y="149.70000000000002" width="2.6" height="2" fill="#2a1a00" opacity="0.55"/><rect x="243.2" y="149.70000000000002" width="2.6" height="2" fill="#2a1a00" opacity="0.55"/><rect x="246.8" y="149.70000000000002" width="2.6" height="2" fill="#2a1a00" opacity="0.55"/><rect x="250.4" y="149.70000000000002" width="2.6" height="2" fill="#2a1a00" opacity="0.55"/><rect x="254.0" y="149.70000000000002" width="2.6" height="2" fill="#2a1a00" opacity="0.55"/><rect x="257.6" y="149.70000000000002" width="2.6" height="2" fill="#2a1a00" opacity="0.55"/><rect x="261.2" y="149.70000000000002" width="2.6" height="2" fill="#2a1a00" opacity="0.55"/><rect x="242" y="156.6" width="15.5" height="9" fill="#ff0a0a" stroke="#664" stroke-width="0.5"/><text x="249.75" y="163.9" font-family='"Liberation Sans", sans-serif' font-size="7" font-weight="bold" fill="#111" text-anchor="middle">1</text><rect x="242" y="173.8" width="15.5" height="9" fill="#ff0a0a" stroke="#664" stroke-width="0.5"/><text x="249.75" y="181.1" font-family='"Liberation Sans", sans-serif' font-size="7" font-weight="bold" fill="#111" text-anchor="middle">2</text><rect x="242" y="191.0" width="15.5" height="9" fill="#ff0a0a" stroke="#664" stroke-width="0.5"/><text x="249.75" y="198.3" font-family='"Liberation Sans", sans-serif' font-size="7" font-weight="bold" fill="#111" text-anchor="middle">3</text><rect x="242" y="208.2" width="15.5" height="9" fill="#ff0a0a" stroke="#664" stroke-width="0.5"/><text x="249.75" y="215.5" font-family='"Liberation Sans", sans-serif' font-size="7" font-weight="bold" fill="#111" text-anchor="middle">4</text><rect x="242" y="225.4" width="15.5" height="9" fill="#ff0a0a" stroke="#664" stroke-width="0.5"/><text x="249.75" y="232.7" font-family='"Liberation Sans", sans-serif' font-size="7" font-weight="bold" fill="#111" text-anchor="middle">5</text><rect x="242" y="242.6" width="15.5" height="9" fill="#ff0a0a" stroke="#664" stroke-width="0.5"/><text x="249.75" y="249.9" font-family='"Liberation Sans", sans-serif' font-size="7" font-weight="bold" fill="#111" text-anchor="middle">6</text><rect x="242" y="259.8" width="15.5" height="9" fill="#10e010" stroke="#664" stroke-width="0.5"/><text x="249.75" y="267.1" font-family='"Liberation Sans", sans-serif' font-size="7" font-weight="bold" fill="#111" text-anchor="middle">7</text><rect x="242" y="277.0" width="15.5" height="9" fill="#10e010" stroke="#664" stroke-width="0.5"/><text x="249.75" y="284.3" font-family='"Liberation Sans", sans-serif' font-size="7" font-weight="bold" fill="#111" text-anchor="middle">8</text><rect x="242" y="294.2" width="15.5" height="9" fill="#10e010" stroke="#664" stroke-width="0.5"/><text x="249.75" y="301.5" font-family='"Liberation Sans", sans-serif' font-size="7" font-weight="bold" fill="#111" text-anchor="middle">9</text><rect x="242" y="311.4" width="15.5" height="9" fill="#10e010" stroke="#664" stroke-width="0.5"/><text x="249.75" y="318.7" font-family='"Liberation Sans", sans-serif' font-size="7" font-weight="bold" fill="#111" text-anchor="middle">10</text><rect x="242" y="328.6" width="15.5" height="9" fill="#10e010" stroke="#664" stroke-width="0.5"/><text x="249.75" y="335.9" font-family='"Liberation Sans", sans-serif' font-size="7" font-weight="bold" fill="#111" text-anchor="middle">11</text><rect x="242" y="345.8" width="15.5" height="9" fill="#10e010" stroke="#664" stroke-width="0.5"/><text x="249.75" y="353.1" font-family='"Liberation Sans", sans-serif' font-size="7" font-weight="bold" fill="#111" text-anchor="middle">12</text><rect x="242" y="363.0" width="15.5" height="9" fill="#10e010" stroke="#664" stroke-width="0.5"/><text x="249.75" y="370.3" font-family='"Liberation Sans", sans-serif' font-size="7" font-weight="bold" fill="#111" text-anchor="middle">13</text><rect x="242" y="380.2" width="15.5" height="9" fill="#10e010" stroke="#664" stroke-width="0.5"/><text x="249.75" y="387.5" font-family='"Liberation Sans", sans-serif' font-size="7" font-weight="bold" fill="#111" text-anchor="middle">14</text><rect x="242" y="397.4" width="15.5" height="9" fill="#10e010" stroke="#664" stroke-width="0.5"/><text x="249.75" y="404.7" font-family='"Liberation Sans", sans-serif' font-size="7" font-weight="bold" fill="#111" text-anchor="middle">15</text><rect x="242" y="414.6" width="15.5" height="9" fill="#10e010" stroke="#664" stroke-width="0.5"/><text x="249.75" y="421.9" font-family='"Liberation Sans", sans-serif' font-size="7" font-weight="bold" fill="#111" text-anchor="middle">16</text><rect x="242" y="431.8" width="15.5" height="9" fill="#10e010" stroke="#664" stroke-width="0.5"/><text x="249.75" y="439.1" font-family='"Liberation Sans", sans-serif' font-size="7" font-weight="bold" fill="#111" text-anchor="middle">17</text><rect x="242" y="449.0" width="15.5" height="9" fill="#10e010" stroke="#664" stroke-width="0.5"/><text x="249.75" y="456.3" font-family='"Liberation Sans", sans-serif' font-size="7" font-weight="bold" fill="#111" text-anchor="middle">18</text><rect x="242" y="466.2" width="15.5" height="9" fill="#10e010" stroke="#664" stroke-width="0.5"/><text x="249.75" y="473.5" font-family='"Liberation Sans", sans-serif' font-size="7" font-weight="bold" fill="#111" text-anchor="middle">19</text><rect x="242" y="483.4" width="15.5" height="9" fill="#10e010" stroke="#664" stroke-width="0.5"/><text x="249.75" y="490.7" font-family='"Liberation Sans", sans-serif' font-size="7" font-weight="bold" fill="#111" text-anchor="middle">20</text><rect x="242" y="500.6" width="15.5" height="9" fill="#10e010" stroke="#664" stroke-width="0.5"/><text x="249.75" y="507.9" font-family='"Liberation Sans", sans-serif' font-size="7" font-weight="bold" fill="#111" text-anchor="middle">21</text><rect x="242" y="517.8" width="15.5" height="9" fill="#10e010" stroke="#664" stroke-width="0.5"/><text x="249.75" y="525.1" font-family='"Liberation Sans", sans-serif' font-size="7" font-weight="bold" fill="#111" text-anchor="middle">22</text><rect x="242" y="535.0" width="15.5" height="9" fill="#10e010" stroke="#664" stroke-width="0.5"/><text x="249.75" y="542.3" font-family='"Liberation Sans", sans-serif' font-size="7" font-weight="bold" fill="#111" text-anchor="middle">23</text><rect x="242" y="552.2" width="15.5" height="9" fill="#10e010" stroke="#664" stroke-width="0.5"/><text x="249.75" y="559.5" font-family='"Liberation Sans", sans-serif' font-size="7" font-weight="bold" fill="#111" text-anchor="middle">24</text><rect x="237.5" y="574.1" width="6.5" height="5.4" fill="#10e010"/><rect x="255" y="574.1" width="7" height="5.4" fill="#10e010"/><rect x="234.5" y="689.1999999999999" width="33.5" height="456.2" fill="#ff9933" stroke="#333" stroke-width="1"/><rect x="243.5" y="694.6999999999999" width="15" height="9" fill="#10e010" stroke="#555" stroke-width="0.6"/><rect x="236.0" y="708.4999999999999" width="2.6" height="2" fill="#2a1a00" opacity="0.55"/><rect x="239.6" y="708.4999999999999" width="2.6" height="2" fill="#2a1a00" opacity="0.55"/><rect x="243.2" y="708.4999999999999" width="2.6" height="2" fill="#2a1a00" opacity="0.55"/><rect x="246.8" y="708.4999999999999" width="2.6" height="2" fill="#2a1a00" opacity="0.55"/><rect x="250.4" y="708.4999999999999" width="2.6" height="2" fill="#2a1a00" opacity="0.55"/><rect x="254.0" y="708.4999999999999" width="2.6" height="2" fill="#2a1a00" opacity="0.55"/><rect x="257.6" y="708.4999999999999" width="2.6" height="2" fill="#2a1a00" opacity="0.55"/><rect x="261.2" y="708.4999999999999" width="2.6" height="2" fill="#2a1a00" opacity="0.55"/><rect x="242" y="715.4" width="15.5" height="9" fill="#ff0a0a" stroke="#664" stroke-width="0.5"/><text x="249.75" y="722.7" font-family='"Liberation Sans", sans-serif' font-size="7" font-weight="bold" fill="#111" text-anchor="middle">1</text><rect x="242" y="732.6" width="15.5" height="9" fill="#ff0a0a" stroke="#664" stroke-width="0.5"/><text x="249.75" y="739.9" font-family='"Liberation Sans", sans-serif' font-size="7" font-weight="bold" fill="#111" text-anchor="middle">2</text><rect x="242" y="749.8" width="15.5" height="9" fill="#ff0a0a" stroke="#664" stroke-width="0.5"/><text x="249.75" y="757.1" font-family='"Liberation Sans", sans-serif' font-size="7" font-weight="bold" fill="#111" text-anchor="middle">3</text><rect x="242" y="767.0" width="15.5" height="9" fill="#ff0a0a" stroke="#664" stroke-width="0.5"/><text x="249.75" y="774.3" font-family='"Liberation Sans", sans-serif' font-size="7" font-weight="bold" fill="#111" text-anchor="middle">4</text><rect x="242" y="784.2" width="15.5" height="9" fill="#ff0a0a" stroke="#664" stroke-width="0.5"/><text x="249.75" y="791.5" font-family='"Liberation Sans", sans-serif' font-size="7" font-weight="bold" fill="#111" text-anchor="middle">5</text><rect x="242" y="801.4" width="15.5" height="9" fill="#10e010" stroke="#664" stroke-width="0.5"/><text x="249.75" y="808.7" font-family='"Liberation Sans", sans-serif' font-size="7" font-weight="bold" fill="#111" text-anchor="middle">6</text><rect x="242" y="818.6" width="15.5" height="9" fill="#10e010" stroke="#664" stroke-width="0.5"/><text x="249.75" y="825.9" font-family='"Liberation Sans", sans-serif' font-size="7" font-weight="bold" fill="#111" text-anchor="middle">7</text><rect x="242" y="835.8" width="15.5" height="9" fill="#10e010" stroke="#664" stroke-width="0.5"/><text x="249.75" y="843.1" font-family='"Liberation Sans", sans-serif' font-size="7" font-weight="bold" fill="#111" text-anchor="middle">8</text><rect x="242" y="853.0" width="15.5" height="9" fill="#10e010" stroke="#664" stroke-width="0.5"/><text x="249.75" y="860.3" font-family='"Liberation Sans", sans-serif' font-size="7" font-weight="bold" fill="#111" text-anchor="middle">9</text><rect x="242" y="870.2" width="15.5" height="9" fill="#10e010" stroke="#664" stroke-width="0.5"/><text x="249.75" y="877.5" font-family='"Liberation Sans", sans-serif' font-size="7" font-weight="bold" fill="#111" text-anchor="middle">10</text><rect x="242" y="887.4" width="15.5" height="9" fill="#10e010" stroke="#664" stroke-width="0.5"/><text x="249.75" y="894.7" font-family='"Liberation Sans", sans-serif' font-size="7" font-weight="bold" fill="#111" text-anchor="middle">11</text><rect x="242" y="904.6" width="15.5" height="9" fill="#10e010" stroke="#664" stroke-width="0.5"/><text x="249.75" y="911.9" font-family='"Liberation Sans", sans-serif' font-size="7" font-weight="bold" fill="#111" text-anchor="middle">12</text><rect x="242" y="921.8" width="15.5" height="9" fill="#10e010" stroke="#664" stroke-width="0.5"/><text x="249.75" y="929.1" font-family='"Liberation Sans", sans-serif' font-size="7" font-weight="bold" fill="#111" text-anchor="middle">13</text><rect x="242" y="939.0" width="15.5" height="9" fill="#10e010" stroke="#664" stroke-width="0.5"/><text x="249.75" y="946.3" font-family='"Liberation Sans", sans-serif' font-size="7" font-weight="bold" fill="#111" text-anchor="middle">14</text><rect x="242" y="956.2" width="15.5" height="9" fill="#10e010" stroke="#664" stroke-width="0.5"/><text x="249.75" y="963.5" font-family='"Liberation Sans", sans-serif' font-size="7" font-weight="bold" fill="#111" text-anchor="middle">15</text><rect x="242" y="973.4" width="15.5" height="9" fill="#10e010" stroke="#664" stroke-width="0.5"/><text x="249.75" y="980.7" font-family='"Liberation Sans", sans-serif' font-size="7" font-weight="bold" fill="#111" text-anchor="middle">16</text><rect x="242" y="990.6" width="15.5" height="9" fill="#10e010" stroke="#664" stroke-width="0.5"/><text x="249.75" y="997.9" font-family='"Liberation Sans", sans-serif' font-size="7" font-weight="bold" fill="#111" text-anchor="middle">17</text><rect x="242" y="1007.8" width="15.5" height="9" fill="#10e010" stroke="#664" stroke-width="0.5"/><text x="249.75" y="1015.1" font-family='"Liberation Sans", sans-serif' font-size="7" font-weight="bold" fill="#111" text-anchor="middle">18</text><rect x="242" y="1025.0" width="15.5" height="9" fill="#10e010" stroke="#664" stroke-width="0.5"/><text x="249.75" y="1032.3" font-family='"Liberation Sans", sans-serif' font-size="7" font-weight="bold" fill="#111" text-anchor="middle">19</text><rect x="242" y="1042.2" width="15.5" height="9" fill="#10e010" stroke="#664" stroke-width="0.5"/><text x="249.75" y="1049.5" font-family='"Liberation Sans", sans-serif' font-size="7" font-weight="bold" fill="#111" text-anchor="middle">20</text><rect x="242" y="1059.4" width="15.5" height="9" fill="#10e010" stroke="#664" stroke-width="0.5"/><text x="249.75" y="1066.7" font-family='"Liberation Sans", sans-serif' font-size="7" font-weight="bold" fill="#111" text-anchor="middle">21</text><rect x="242" y="1076.6" width="15.5" height="9" fill="#10e010" stroke="#664" stroke-width="0.5"/><text x="249.75" y="1083.9" font-family='"Liberation Sans", sans-serif' font-size="7" font-weight="bold" fill="#111" text-anchor="middle">22</text><rect x="242" y="1093.8" width="15.5" height="9" fill="#10e010" stroke="#664" stroke-width="0.5"/><text x="249.75" y="1101.1" font-family='"Liberation Sans", sans-serif' font-size="7" font-weight="bold" fill="#111" text-anchor="middle">23</text><rect x="242" y="1111.0" width="15.5" height="9" fill="#10e010" stroke="#664" stroke-width="0.5"/><text x="249.75" y="1118.3" font-family='"Liberation Sans", sans-serif' font-size="7" font-weight="bold" fill="#111" text-anchor="middle">24</text><rect x="237.5" y="1132.9" width="6.5" height="5.4" fill="#10e010"/><rect x="255" y="1132.9" width="7" height="5.4" fill="#10e010"/><rect x="600.5" y="130.4" width="33.5" height="456.2" fill="#6666ff" stroke="#333" stroke-width="1"/><rect x="609.5" y="135.9" width="15" height="9" fill="#10e010" stroke="#555" stroke-width="0.6"/><rect x="602.0" y="149.70000000000002" width="2.6" height="2" fill="#2a1a00" opacity="0.55"/><rect x="605.6" y="149.70000000000002" width="2.6" height="2" fill="#2a1a00" opacity="0.55"/><rect x="609.2" y="149.70000000000002" width="2.6" height="2" fill="#2a1a00" opacity="0.55"/><rect x="612.8" y="149.70000000000002" width="2.6" height="2" fill="#2a1a00" opacity="0.55"/><rect x="616.4" y="149.70000000000002" width="2.6" height="2" fill="#2a1a00" opacity="0.55"/><rect x="620.0" y="149.70000000000002" width="2.6" height="2" fill="#2a1a00" opacity="0.55"/><rect x="623.6" y="149.70000000000002" width="2.6" height="2" fill="#2a1a00" opacity="0.55"/><rect x="627.2" y="149.70000000000002" width="2.6" height="2" fill="#2a1a00" opacity="0.55"/><rect x="608" y="156.6" width="15.5" height="9" fill="#ff0a0a" stroke="#664" stroke-width="0.5"/><text x="615.75" y="163.9" font-family='"Liberation Sans", sans-serif' font-size="7" font-weight="bold" fill="#111" text-anchor="middle">1</text><rect x="608" y="173.8" width="15.5" height="9" fill="#ff0a0a" stroke="#664" stroke-width="0.5"/><text x="615.75" y="181.1" font-family='"Liberation Sans", sans-serif' font-size="7" font-weight="bold" fill="#111" text-anchor="middle">2</text><rect x="608" y="191.0" width="15.5" height="9" fill="#ff0a0a" stroke="#664" stroke-width="0.5"/><text x="615.75" y="198.3" font-family='"Liberation Sans", sans-serif' font-size="7" font-weight="bold" fill="#111" text-anchor="middle">3</text><rect x="608" y="208.2" width="15.5" height="9" fill="#ff0a0a" stroke="#664" stroke-width="0.5"/><text x="615.75" y="215.5" font-family='"Liberation Sans", sans-serif' font-size="7" font-weight="bold" fill="#111" text-anchor="middle">4</text><rect x="608" y="225.4" width="15.5" height="9" fill="#ff0a0a" stroke="#664" stroke-width="0.5"/><text x="615.75" y="232.7" font-family='"Liberation Sans", sans-serif' font-size="7" font-weight="bold" fill="#111" text-anchor="middle">5</text><rect x="608" y="242.6" width="15.5" height="9" fill="#ff0a0a" stroke="#664" stroke-width="0.5"/><text x="615.75" y="249.9" font-family='"Liberation Sans", sans-serif' font-size="7" font-weight="bold" fill="#111" text-anchor="middle">6</text><rect x="608" y="259.8" width="15.5" height="9" fill="#10e010" stroke="#664" stroke-width="0.5"/><text x="615.75" y="267.1" font-family='"Liberation Sans", sans-serif' font-size="7" font-weight="bold" fill="#111" text-anchor="middle">7</text><rect x="608" y="277.0" width="15.5" height="9" fill="#10e010" stroke="#664" stroke-width="0.5"/><text x="615.75" y="284.3" font-family='"Liberation Sans", sans-serif' font-size="7" font-weight="bold" fill="#111" text-anchor="middle">8</text><rect x="608" y="294.2" width="15.5" height="9" fill="#10e010" stroke="#664" stroke-width="0.5"/><text x="615.75" y="301.5" font-family='"Liberation Sans", sans-serif' font-size="7" font-weight="bold" fill="#111" text-anchor="middle">9</text><rect x="608" y="311.4" width="15.5" height="9" fill="#10e010" stroke="#664" stroke-width="0.5"/><text x="615.75" y="318.7" font-family='"Liberation Sans", sans-serif' font-size="7" font-weight="bold" fill="#111" text-anchor="middle">10</text><rect x="608" y="328.6" width="15.5" height="9" fill="#10e010" stroke="#664" stroke-width="0.5"/><text x="615.75" y="335.9" font-family='"Liberation Sans", sans-serif' font-size="7" font-weight="bold" fill="#111" text-anchor="middle">11</text><rect x="608" y="345.8" width="15.5" height="9" fill="#10e010" stroke="#664" stroke-width="0.5"/><text x="615.75" y="353.1" font-family='"Liberation Sans", sans-serif' font-size="7" font-weight="bold" fill="#111" text-anchor="middle">12</text><rect x="608" y="363.0" width="15.5" height="9" fill="#10e010" stroke="#664" stroke-width="0.5"/><text x="615.75" y="370.3" font-family='"Liberation Sans", sans-serif' font-size="7" font-weight="bold" fill="#111" text-anchor="middle">13</text><rect x="608" y="380.2" width="15.5" height="9" fill="#10e010" stroke="#664" stroke-width="0.5"/><text x="615.75" y="387.5" font-family='"Liberation Sans", sans-serif' font-size="7" font-weight="bold" fill="#111" text-anchor="middle">14</text><rect x="608" y="397.4" width="15.5" height="9" fill="#10e010" stroke="#664" stroke-width="0.5"/><text x="615.75" y="404.7" font-family='"Liberation Sans", sans-serif' font-size="7" font-weight="bold" fill="#111" text-anchor="middle">15</text><rect x="608" y="414.6" width="15.5" height="9" fill="#10e010" stroke="#664" stroke-width="0.5"/><text x="615.75" y="421.9" font-family='"Liberation Sans", sans-serif' font-size="7" font-weight="bold" fill="#111" text-anchor="middle">16</text><rect x="608" y="431.8" width="15.5" height="9" fill="#10e010" stroke="#664" stroke-width="0.5"/><text x="615.75" y="439.1" font-family='"Liberation Sans", sans-serif' font-size="7" font-weight="bold" fill="#111" text-anchor="middle">17</text><rect x="608" y="449.0" width="15.5" height="9" fill="#10e010" stroke="#664" stroke-width="0.5"/><text x="615.75" y="456.3" font-family='"Liberation Sans", sans-serif' font-size="7" font-weight="bold" fill="#111" text-anchor="middle">18</text><rect x="608" y="466.2" width="15.5" height="9" fill="#10e010" stroke="#664" stroke-width="0.5"/><text x="615.75" y="473.5" font-family='"Liberation Sans", sans-serif' font-size="7" font-weight="bold" fill="#111" text-anchor="middle">19</text><rect x="608" y="483.4" width="15.5" height="9" fill="#10e010" stroke="#664" stroke-width="0.5"/><text x="615.75" y="490.7" font-family='"Liberation Sans", sans-serif' font-size="7" font-weight="bold" fill="#111" text-anchor="middle">20</text><rect x="608" y="500.6" width="15.5" height="9" fill="#10e010" stroke="#664" stroke-width="0.5"/><text x="615.75" y="507.9" font-family='"Liberation Sans", sans-serif' font-size="7" font-weight="bold" fill="#111" text-anchor="middle">21</text><rect x="608" y="517.8" width="15.5" height="9" fill="#10e010" stroke="#664" stroke-width="0.5"/><text x="615.75" y="525.1" font-family='"Liberation Sans", sans-serif' font-size="7" font-weight="bold" fill="#111" text-anchor="middle">22</text><rect x="608" y="535.0" width="15.5" height="9" fill="#10e010" stroke="#664" stroke-width="0.5"/><text x="615.75" y="542.3" font-family='"Liberation Sans", sans-serif' font-size="7" font-weight="bold" fill="#111" text-anchor="middle">23</text><rect x="608" y="552.2" width="15.5" height="9" fill="#10e010" stroke="#664" stroke-width="0.5"/><text x="615.75" y="559.5" font-family='"Liberation Sans", sans-serif' font-size="7" font-weight="bold" fill="#111" text-anchor="middle">24</text><rect x="603.5" y="574.1" width="6.5" height="5.4" fill="#10e010"/><rect x="621" y="574.1" width="7" height="5.4" fill="#10e010"/><rect x="600.5" y="689.1999999999999" width="33.5" height="456.2" fill="#6666ff" stroke="#333" stroke-width="1"/><rect x="609.5" y="694.6999999999999" width="15" height="9" fill="#10e010" stroke="#555" stroke-width="0.6"/><rect x="602.0" y="708.4999999999999" width="2.6" height="2" fill="#2a1a00" opacity="0.55"/><rect x="605.6" y="708.4999999999999" width="2.6" height="2" fill="#2a1a00" opacity="0.55"/><rect x="609.2" y="708.4999999999999" width="2.6" height="2" fill="#2a1a00" opacity="0.55"/><rect x="612.8" y="708.4999999999999" width="2.6" height="2" fill="#2a1a00" opacity="0.55"/><rect x="616.4" y="708.4999999999999" width="2.6" height="2" fill="#2a1a00" opacity="0.55"/><rect x="620.0" y="708.4999999999999" width="2.6" height="2" fill="#2a1a00" opacity="0.55"/><rect x="623.6" y="708.4999999999999" width="2.6" height="2" fill="#2a1a00" opacity="0.55"/><rect x="627.2" y="708.4999999999999" width="2.6" height="2" fill="#2a1a00" opacity="0.55"/><rect x="608" y="715.4" width="15.5" height="9" fill="#ff0a0a" stroke="#664" stroke-width="0.5"/><text x="615.75" y="722.7" font-family='"Liberation Sans", sans-serif' font-size="7" font-weight="bold" fill="#111" text-anchor="middle">1</text><rect x="608" y="732.6" width="15.5" height="9" fill="#ff0a0a" stroke="#664" stroke-width="0.5"/><text x="615.75" y="739.9" font-family='"Liberation Sans", sans-serif' font-size="7" font-weight="bold" fill="#111" text-anchor="middle">2</text><rect x="608" y="749.8" width="15.5" height="9" fill="#ff0a0a" stroke="#664" stroke-width="0.5"/><text x="615.75" y="757.1" font-family='"Liberation Sans", sans-serif' font-size="7" font-weight="bold" fill="#111" text-anchor="middle">3</text><rect x="608" y="767.0" width="15.5" height="9" fill="#ff0a0a" stroke="#664" stroke-width="0.5"/><text x="615.75" y="774.3" font-family='"Liberation Sans", sans-serif' font-size="7" font-weight="bold" fill="#111" text-anchor="middle">4</text><rect x="608" y="784.2" width="15.5" height="9" fill="#ff0a0a" stroke="#664" stroke-width="0.5"/><text x="615.75" y="791.5" font-family='"Liberation Sans", sans-serif' font-size="7" font-weight="bold" fill="#111" text-anchor="middle">5</text><rect x="608" y="801.4" width="15.5" height="9" fill="#10e010" stroke="#664" stroke-width="0.5"/><text x="615.75" y="808.7" font-family='"Liberation Sans", sans-serif' font-size="7" font-weight="bold" fill="#111" text-anchor="middle">6</text><rect x="608" y="818.6" width="15.5" height="9" fill="#10e010" stroke="#664" stroke-width="0.5"/><text x="615.75" y="825.9" font-family='"Liberation Sans", sans-serif' font-size="7" font-weight="bold" fill="#111" text-anchor="middle">7</text><rect x="608" y="835.8" width="15.5" height="9" fill="#10e010" stroke="#664" stroke-width="0.5"/><text x="615.75" y="843.1" font-family='"Liberation Sans", sans-serif' font-size="7" font-weight="bold" fill="#111" text-anchor="middle">8</text><rect x="608" y="853.0" width="15.5" height="9" fill="#10e010" stroke="#664" stroke-width="0.5"/><text x="615.75" y="860.3" font-family='"Liberation Sans", sans-serif' font-size="7" font-weight="bold" fill="#111" text-anchor="middle">9</text><rect x="608" y="870.2" width="15.5" height="9" fill="#10e010" stroke="#664" stroke-width="0.5"/><text x="615.75" y="877.5" font-family='"Liberation Sans", sans-serif' font-size="7" font-weight="bold" fill="#111" text-anchor="middle">10</text><rect x="608" y="887.4" width="15.5" height="9" fill="#10e010" stroke="#664" stroke-width="0.5"/><text x="615.75" y="894.7" font-family='"Liberation Sans", sans-serif' font-size="7" font-weight="bold" fill="#111" text-anchor="middle">11</text><rect x="608" y="904.6" width="15.5" height="9" fill="#10e010" stroke="#664" stroke-width="0.5"/><text x="615.75" y="911.9" font-family='"Liberation Sans", sans-serif' font-size="7" font-weight="bold" fill="#111" text-anchor="middle">12</text><rect x="608" y="921.8" width="15.5" height="9" fill="#10e010" stroke="#664" stroke-width="0.5"/><text x="615.75" y="929.1" font-family='"Liberation Sans", sans-serif' font-size="7" font-weight="bold" fill="#111" text-anchor="middle">13</text><rect x="608" y="939.0" width="15.5" height="9" fill="#10e010" stroke="#664" stroke-width="0.5"/><text x="615.75" y="946.3" font-family='"Liberation Sans", sans-serif' font-size="7" font-weight="bold" fill="#111" text-anchor="middle">14</text><rect x="608" y="956.2" width="15.5" height="9" fill="#10e010" stroke="#664" stroke-width="0.5"/><text x="615.75" y="963.5" font-family='"Liberation Sans", sans-serif' font-size="7" font-weight="bold" fill="#111" text-anchor="middle">15</text><rect x="608" y="973.4" width="15.5" height="9" fill="#10e010" stroke="#664" stroke-width="0.5"/><text x="615.75" y="980.7" font-family='"Liberation Sans", sans-serif' font-size="7" font-weight="bold" fill="#111" text-anchor="middle">16</text><rect x="608" y="990.6" width="15.5" height="9" fill="#10e010" stroke="#664" stroke-width="0.5"/><text x="615.75" y="997.9" font-family='"Liberation Sans", sans-serif' font-size="7" font-weight="bold" fill="#111" text-anchor="middle">17</text><rect x="608" y="1007.8" width="15.5" height="9" fill="#10e010" stroke="#664" stroke-width="0.5"/><text x="615.75" y="1015.1" font-family='"Liberation Sans", sans-serif' font-size="7" font-weight="bold" fill="#111" text-anchor="middle">18</text><rect x="608" y="1025.0" width="15.5" height="9" fill="#10e010" stroke="#664" stroke-width="0.5"/><text x="615.75" y="1032.3" font-family='"Liberation Sans", sans-serif' font-size="7" font-weight="bold" fill="#111" text-anchor="middle">19</text><rect x="608" y="1042.2" width="15.5" height="9" fill="#10e010" stroke="#664" stroke-width="0.5"/><text x="615.75" y="1049.5" font-family='"Liberation Sans", sans-serif' font-size="7" font-weight="bold" fill="#111" text-anchor="middle">20</text><rect x="608" y="1059.4" width="15.5" height="9" fill="#10e010" stroke="#664" stroke-width="0.5"/><text x="615.75" y="1066.7" font-family='"Liberation Sans", sans-serif' font-size="7" font-weight="bold" fill="#111" text-anchor="middle">21</text><rect x="608" y="1076.6" width="15.5" height="9" fill="#10e010" stroke="#664" stroke-width="0.5"/><text x="615.75" y="1083.9" font-family='"Liberation Sans", sans-serif' font-size="7" font-weight="bold" fill="#111" text-anchor="middle">22</text><rect x="608" y="1093.8" width="15.5" height="9" fill="#10e010" stroke="#664" stroke-width="0.5"/><text x="615.75" y="1101.1" font-family='"Liberation Sans", sans-serif' font-size="7" font-weight="bold" fill="#111" text-anchor="middle">23</text><rect x="608" y="1111.0" width="15.5" height="9" fill="#10e010" stroke="#664" stroke-width="0.5"/><text x="615.75" y="1118.3" font-family='"Liberation Sans", sans-serif' font-size="7" font-weight="bold" fill="#111" text-anchor="middle">24</text><rect x="603.5" y="1132.9" width="6.5" height="5.4" fill="#10e010"/><rect x="621" y="1132.9" width="7" height="5.4" fill="#10e010"/><rect x="762.5" y="104.0" width="256" height="51.8" fill="#000"/><rect x="762.5" y="105.5" width="256" height="48.80000000000001" fill="#ffcc00"/><rect x="764.3" y="120.7" width="2.2" height="2" fill="#9a6a20" opacity="0.85"/><rect x="774.9" y="120.7" width="2.2" height="2" fill="#9a6a20" opacity="0.85"/><rect x="785.4" y="120.7" width="2.2" height="2" fill="#9a6a20" opacity="0.85"/><rect x="796.0" y="120.7" width="2.2" height="2" fill="#9a6a20" opacity="0.85"/><rect x="806.6" y="120.7" width="2.2" height="2" fill="#9a6a20" opacity="0.85"/><rect x="817.1" y="120.7" width="2.2" height="2" fill="#9a6a20" opacity="0.85"/><rect x="827.7" y="120.7" width="2.2" height="2" fill="#9a6a20" opacity="0.85"/><rect x="838.3" y="120.7" width="2.2" height="2" fill="#9a6a20" opacity="0.85"/><rect x="848.9" y="120.7" width="2.2" height="2" fill="#9a6a20" opacity="0.85"/><rect x="859.4" y="120.7" width="2.2" height="2" fill="#9a6a20" opacity="0.85"/><rect x="870.0" y="120.7" width="2.2" height="2" fill="#9a6a20" opacity="0.85"/><rect x="880.6" y="120.7" width="2.2" height="2" fill="#9a6a20" opacity="0.85"/><rect x="891.1" y="120.7" width="2.2" height="2" fill="#9a6a20" opacity="0.85"/><rect x="901.7" y="120.7" width="2.2" height="2" fill="#9a6a20" opacity="0.85"/><rect x="912.3" y="120.7" width="2.2" height="2" fill="#9a6a20" opacity="0.85"/><rect x="922.8" y="120.7" width="2.2" height="2" fill="#9a6a20" opacity="0.85"/><rect x="933.4" y="120.7" width="2.2" height="2" fill="#9a6a20" opacity="0.85"/><rect x="944.0" y="120.7" width="2.2" height="2" fill="#9a6a20" opacity="0.85"/><rect x="954.6" y="120.7" width="2.2" height="2" fill="#9a6a20" opacity="0.85"/><rect x="965.1" y="120.7" width="2.2" height="2" fill="#9a6a20" opacity="0.85"/><rect x="975.7" y="120.7" width="2.2" height="2" fill="#9a6a20" opacity="0.85"/><rect x="986.3" y="120.7" width="2.2" height="2" fill="#9a6a20" opacity="0.85"/><rect x="996.8" y="120.7" width="2.2" height="2" fill="#9a6a20" opacity="0.85"/><rect x="1007.4" y="120.7" width="2.2" height="2" fill="#9a6a20" opacity="0.85"/><rect x="764.3" y="137.9" width="2.2" height="2" fill="#9a6a20" opacity="0.85"/><rect x="774.9" y="137.9" width="2.2" height="2" fill="#9a6a20" opacity="0.85"/><rect x="785.4" y="137.9" width="2.2" height="2" fill="#9a6a20" opacity="0.85"/><rect x="796.0" y="137.9" width="2.2" height="2" fill="#9a6a20" opacity="0.85"/><rect x="806.6" y="137.9" width="2.2" height="2" fill="#9a6a20" opacity="0.85"/><rect x="817.1" y="137.9" width="2.2" height="2" fill="#9a6a20" opacity="0.85"/><rect x="827.7" y="137.9" width="2.2" height="2" fill="#9a6a20" opacity="0.85"/><rect x="838.3" y="137.9" width="2.2" height="2" fill="#9a6a20" opacity="0.85"/><rect x="848.9" y="137.9" width="2.2" height="2" fill="#9a6a20" opacity="0.85"/><rect x="859.4" y="137.9" width="2.2" height="2" fill="#9a6a20" opacity="0.85"/><rect x="870.0" y="137.9" width="2.2" height="2" fill="#9a6a20" opacity="0.85"/><rect x="880.6" y="137.9" width="2.2" height="2" fill="#9a6a20" opacity="0.85"/><rect x="891.1" y="137.9" width="2.2" height="2" fill="#9a6a20" opacity="0.85"/><rect x="901.7" y="137.9" width="2.2" height="2" fill="#9a6a20" opacity="0.85"/><rect x="912.3" y="137.9" width="2.2" height="2" fill="#9a6a20" opacity="0.85"/><rect x="922.8" y="137.9" width="2.2" height="2" fill="#9a6a20" opacity="0.85"/><rect x="933.4" y="137.9" width="2.2" height="2" fill="#9a6a20" opacity="0.85"/><rect x="944.0" y="137.9" width="2.2" height="2" fill="#9a6a20" opacity="0.85"/><rect x="954.6" y="137.9" width="2.2" height="2" fill="#9a6a20" opacity="0.85"/><rect x="965.1" y="137.9" width="2.2" height="2" fill="#9a6a20" opacity="0.85"/><rect x="975.7" y="137.9" width="2.2" height="2" fill="#9a6a20" opacity="0.85"/><rect x="986.3" y="137.9" width="2.2" height="2" fill="#9a6a20" opacity="0.85"/><rect x="996.8" y="137.9" width="2.2" height="2" fill="#9a6a20" opacity="0.85"/><rect x="1007.4" y="137.9" width="2.2" height="2" fill="#9a6a20" opacity="0.85"/><text x="763.5" y="132.5" font-family='"Liberation Sans", sans-serif' font-size="11" fill="#6a5000">B</text><rect x="762.5" y="154.8" width="256" height="51.8" fill="#000"/><rect x="762.5" y="156.3" width="256" height="48.79999999999998" fill="#9a9a9a"/><rect x="766.3" y="170.5" width="6.5" height="3.2" fill="#f0a020"/><rect x="768.8" y="171.3" width="1.5" height="1.5" fill="#666"/><rect x="776.9" y="170.5" width="6.5" height="3.2" fill="#f0a020"/><rect x="779.4" y="171.3" width="1.5" height="1.5" fill="#666"/><rect x="787.4" y="170.5" width="6.5" height="3.2" fill="#f0a020"/><rect x="789.9" y="171.3" width="1.5" height="1.5" fill="#666"/><rect x="798.0" y="170.5" width="6.5" height="3.2" fill="#f0a020"/><rect x="800.5" y="171.3" width="1.5" height="1.5" fill="#666"/><rect x="808.6" y="170.5" width="6.5" height="3.2" fill="#f0a020"/><rect x="811.1" y="171.3" width="1.5" height="1.5" fill="#666"/><rect x="819.1" y="170.5" width="6.5" height="3.2" fill="#f0a020"/><rect x="821.6" y="171.3" width="1.5" height="1.5" fill="#666"/><rect x="829.7" y="170.5" width="6.5" height="3.2" fill="#f0a020"/><rect x="832.2" y="171.3" width="1.5" height="1.5" fill="#666"/><rect x="840.3" y="170.5" width="6.5" height="3.2" fill="#f0a020"/><rect x="842.8" y="171.3" width="1.5" height="1.5" fill="#666"/><rect x="850.9" y="170.5" width="6.5" height="3.2" fill="#f0a020"/><rect x="853.4" y="171.3" width="1.5" height="1.5" fill="#666"/><rect x="861.4" y="170.5" width="6.5" height="3.2" fill="#f0a020"/><rect x="863.9" y="171.3" width="1.5" height="1.5" fill="#666"/><rect x="872.0" y="170.5" width="6.5" height="3.2" fill="#f0a020"/><rect x="874.5" y="171.3" width="1.5" height="1.5" fill="#666"/><rect x="882.6" y="170.5" width="6.5" height="3.2" fill="#f0a020"/><rect x="885.1" y="171.3" width="1.5" height="1.5" fill="#666"/><rect x="893.1" y="170.5" width="6.5" height="3.2" fill="#f0a020"/><rect x="895.6" y="171.3" width="1.5" height="1.5" fill="#666"/><rect x="903.7" y="170.5" width="6.5" height="3.2" fill="#f0a020"/><rect x="906.2" y="171.3" width="1.5" height="1.5" fill="#666"/><rect x="914.3" y="170.5" width="6.5" height="3.2" fill="#f0a020"/><rect x="916.8" y="171.3" width="1.5" height="1.5" fill="#666"/><rect x="924.8" y="170.5" width="6.5" height="3.2" fill="#f0a020"/><rect x="927.3" y="171.3" width="1.5" height="1.5" fill="#666"/><rect x="935.4" y="170.5" width="6.5" height="3.2" fill="#f0a020"/><rect x="937.9" y="171.3" width="1.5" height="1.5" fill="#666"/><rect x="946.0" y="170.5" width="6.5" height="3.2" fill="#f0a020"/><rect x="948.5" y="171.3" width="1.5" height="1.5" fill="#666"/><rect x="956.6" y="170.5" width="6.5" height="3.2" fill="#f0a020"/><rect x="959.1" y="171.3" width="1.5" height="1.5" fill="#666"/><rect x="967.1" y="170.5" width="6.5" height="3.2" fill="#f0a020"/><rect x="969.6" y="171.3" width="1.5" height="1.5" fill="#666"/><rect x="977.7" y="170.5" width="6.5" height="3.2" fill="#f0a020"/><rect x="980.2" y="171.3" width="1.5" height="1.5" fill="#666"/><rect x="988.3" y="170.5" width="6.5" height="3.2" fill="#f0a020"/><rect x="990.8" y="171.3" width="1.5" height="1.5" fill="#666"/><rect x="998.8" y="170.5" width="6.5" height="3.2" fill="#f0a020"/><rect x="1001.3" y="171.3" width="1.5" height="1.5" fill="#666"/><rect x="1009.4" y="170.5" width="6.5" height="3.2" fill="#f0a020"/><rect x="1011.9" y="171.3" width="1.5" height="1.5" fill="#666"/><rect x="766.3" y="188.5" width="6.5" height="3.2" fill="#f0a020"/><rect x="768.8" y="189.3" width="1.5" height="1.5" fill="#666"/><rect x="776.9" y="188.5" width="6.5" height="3.2" fill="#f0a020"/><rect x="779.4" y="189.3" width="1.5" height="1.5" fill="#666"/><rect x="787.4" y="188.5" width="6.5" height="3.2" fill="#f0a020"/><rect x="789.9" y="189.3" width="1.5" height="1.5" fill="#666"/><rect x="798.0" y="188.5" width="6.5" height="3.2" fill="#f0a020"/><rect x="800.5" y="189.3" width="1.5" height="1.5" fill="#666"/><rect x="808.6" y="188.5" width="6.5" height="3.2" fill="#f0a020"/><rect x="811.1" y="189.3" width="1.5" height="1.5" fill="#666"/><rect x="819.1" y="188.5" width="6.5" height="3.2" fill="#f0a020"/><rect x="821.6" y="189.3" width="1.5" height="1.5" fill="#666"/><rect x="829.7" y="188.5" width="6.5" height="3.2" fill="#f0a020"/><rect x="832.2" y="189.3" width="1.5" height="1.5" fill="#666"/><rect x="840.3" y="188.5" width="6.5" height="3.2" fill="#f0a020"/><rect x="842.8" y="189.3" width="1.5" height="1.5" fill="#666"/><rect x="850.9" y="188.5" width="6.5" height="3.2" fill="#f0a020"/><rect x="853.4" y="189.3" width="1.5" height="1.5" fill="#666"/><rect x="861.4" y="188.5" width="6.5" height="3.2" fill="#f0a020"/><rect x="863.9" y="189.3" width="1.5" height="1.5" fill="#666"/><rect x="872.0" y="188.5" width="6.5" height="3.2" fill="#f0a020"/><rect x="874.5" y="189.3" width="1.5" height="1.5" fill="#666"/><rect x="882.6" y="188.5" width="6.5" height="3.2" fill="#f0a020"/><rect x="885.1" y="189.3" width="1.5" height="1.5" fill="#666"/><rect x="893.1" y="188.5" width="6.5" height="3.2" fill="#f0a020"/><rect x="895.6" y="189.3" width="1.5" height="1.5" fill="#666"/><rect x="903.7" y="188.5" width="6.5" height="3.2" fill="#f0a020"/><rect x="906.2" y="189.3" width="1.5" height="1.5" fill="#666"/><rect x="914.3" y="188.5" width="6.5" height="3.2" fill="#f0a020"/><rect x="916.8" y="189.3" width="1.5" height="1.5" fill="#666"/><rect x="924.8" y="188.5" width="6.5" height="3.2" fill="#f0a020"/><rect x="927.3" y="189.3" width="1.5" height="1.5" fill="#666"/><rect x="935.4" y="188.5" width="6.5" height="3.2" fill="#f0a020"/><rect x="937.9" y="189.3" width="1.5" height="1.5" fill="#666"/><rect x="946.0" y="188.5" width="6.5" height="3.2" fill="#f0a020"/><rect x="948.5" y="189.3" width="1.5" height="1.5" fill="#666"/><rect x="956.6" y="188.5" width="6.5" height="3.2" fill="#f0a020"/><rect x="959.1" y="189.3" width="1.5" height="1.5" fill="#666"/><rect x="967.1" y="188.5" width="6.5" height="3.2" fill="#f0a020"/><rect x="969.6" y="189.3" width="1.5" height="1.5" fill="#666"/><rect x="977.7" y="188.5" width="6.5" height="3.2" fill="#f0a020"/><rect x="980.2" y="189.3" width="1.5" height="1.5" fill="#666"/><rect x="988.3" y="188.5" width="6.5" height="3.2" fill="#f0a020"/><rect x="990.8" y="189.3" width="1.5" height="1.5" fill="#666"/><rect x="998.8" y="188.5" width="6.5" height="3.2" fill="#f0a020"/><rect x="1001.3" y="189.3" width="1.5" height="1.5" fill="#666"/><rect x="1009.4" y="188.5" width="6.5" height="3.2" fill="#f0a020"/><rect x="1011.9" y="189.3" width="1.5" height="1.5" fill="#666"/><text x="765.5" y="185.3" font-family='"Liberation Sans", sans-serif' font-size="12" fill="#333">B</text><rect x="762.5" y="205.6" width="256" height="51.8" fill="#000"/><rect x="762.5" y="207.1" width="256" height="48.79999999999998" fill="#333333"/><rect x="766.7" y="218.7" width="6.4" height="5.2" fill="#f0a020"/><rect x="768.9" y="220.5" width="2" height="1.6" fill="#1a4a1a"/><rect x="777.3" y="218.7" width="6.4" height="5.2" fill="#f0a020"/><rect x="779.5" y="220.5" width="2" height="1.6" fill="#1a4a1a"/><rect x="787.8" y="218.7" width="6.4" height="5.2" fill="#f0a020"/><rect x="790.0" y="220.5" width="2" height="1.6" fill="#1a4a1a"/><rect x="798.4" y="218.7" width="6.4" height="5.2" fill="#f0a020"/><rect x="800.6" y="220.5" width="2" height="1.6" fill="#1a4a1a"/><rect x="809.0" y="218.7" width="6.4" height="5.2" fill="#f0a020"/><rect x="811.2" y="220.5" width="2" height="1.6" fill="#1a4a1a"/><rect x="819.6" y="218.7" width="6.4" height="5.2" fill="#f0a020"/><rect x="821.8" y="220.5" width="2" height="1.6" fill="#1a4a1a"/><rect x="830.1" y="218.7" width="6.4" height="5.2" fill="#f0a020"/><rect x="832.3" y="220.5" width="2" height="1.6" fill="#1a4a1a"/><rect x="840.7" y="218.7" width="6.4" height="5.2" fill="#f0a020"/><rect x="842.9" y="220.5" width="2" height="1.6" fill="#1a4a1a"/><rect x="851.3" y="218.7" width="6.4" height="5.2" fill="#f0a020"/><rect x="853.5" y="220.5" width="2" height="1.6" fill="#1a4a1a"/><rect x="861.8" y="218.7" width="6.4" height="5.2" fill="#f0a020"/><rect x="864.0" y="220.5" width="2" height="1.6" fill="#1a4a1a"/><rect x="872.4" y="218.7" width="6.4" height="5.2" fill="#f0a020"/><rect x="874.6" y="220.5" width="2" height="1.6" fill="#1a4a1a"/><rect x="883.0" y="218.7" width="6.4" height="5.2" fill="#f0a020"/><rect x="885.2" y="220.5" width="2" height="1.6" fill="#1a4a1a"/><rect x="893.5" y="218.7" width="6.4" height="5.2" fill="#f0a020"/><rect x="895.7" y="220.5" width="2" height="1.6" fill="#1a4a1a"/><rect x="904.1" y="218.7" width="6.4" height="5.2" fill="#f0a020"/><rect x="906.3" y="220.5" width="2" height="1.6" fill="#1a4a1a"/><rect x="914.7" y="218.7" width="6.4" height="5.2" fill="#f0a020"/><rect x="916.9" y="220.5" width="2" height="1.6" fill="#1a4a1a"/><rect x="925.2" y="218.7" width="6.4" height="5.2" fill="#f0a020"/><rect x="927.5" y="220.5" width="2" height="1.6" fill="#1a4a1a"/><rect x="935.8" y="218.7" width="6.4" height="5.2" fill="#f0a020"/><rect x="938.0" y="220.5" width="2" height="1.6" fill="#1a4a1a"/><rect x="946.4" y="218.7" width="6.4" height="5.2" fill="#f0a020"/><rect x="948.6" y="220.5" width="2" height="1.6" fill="#1a4a1a"/><rect x="957.0" y="218.7" width="6.4" height="5.2" fill="#f0a020"/><rect x="959.2" y="220.5" width="2" height="1.6" fill="#1a4a1a"/><rect x="967.5" y="218.7" width="6.4" height="5.2" fill="#f0a020"/><rect x="969.7" y="220.5" width="2" height="1.6" fill="#1a4a1a"/><rect x="978.1" y="218.7" width="6.4" height="5.2" fill="#f0a020"/><rect x="980.3" y="220.5" width="2" height="1.6" fill="#1a4a1a"/><rect x="988.7" y="218.7" width="6.4" height="5.2" fill="#f0a020"/><rect x="990.9" y="220.5" width="2" height="1.6" fill="#1a4a1a"/><rect x="999.2" y="218.7" width="6.4" height="5.2" fill="#f0a020"/><rect x="1001.4" y="220.5" width="2" height="1.6" fill="#1a4a1a"/><rect x="1009.8" y="218.7" width="6.4" height="5.2" fill="#f0a020"/><rect x="1012.0" y="220.5" width="2" height="1.6" fill="#1a4a1a"/><rect x="766.7" y="237.9" width="6.4" height="5.2" fill="#f0a020"/><rect x="768.9" y="239.7" width="2" height="1.6" fill="#1a4a1a"/><rect x="777.3" y="237.9" width="6.4" height="5.2" fill="#f0a020"/><rect x="779.5" y="239.7" width="2" height="1.6" fill="#1a4a1a"/><rect x="787.8" y="237.9" width="6.4" height="5.2" fill="#f0a020"/><rect x="790.0" y="239.7" width="2" height="1.6" fill="#1a4a1a"/><rect x="798.4" y="237.9" width="6.4" height="5.2" fill="#f0a020"/><rect x="800.6" y="239.7" width="2" height="1.6" fill="#1a4a1a"/><rect x="809.0" y="237.9" width="6.4" height="5.2" fill="#f0a020"/><rect x="811.2" y="239.7" width="2" height="1.6" fill="#1a4a1a"/><rect x="819.6" y="237.9" width="6.4" height="5.2" fill="#f0a020"/><rect x="821.8" y="239.7" width="2" height="1.6" fill="#1a4a1a"/><rect x="830.1" y="237.9" width="6.4" height="5.2" fill="#f0a020"/><rect x="832.3" y="239.7" width="2" height="1.6" fill="#1a4a1a"/><rect x="840.7" y="237.9" width="6.4" height="5.2" fill="#f0a020"/><rect x="842.9" y="239.7" width="2" height="1.6" fill="#1a4a1a"/><rect x="851.3" y="237.9" width="6.4" height="5.2" fill="#f0a020"/><rect x="853.5" y="239.7" width="2" height="1.6" fill="#1a4a1a"/><rect x="861.8" y="237.9" width="6.4" height="5.2" fill="#f0a020"/><rect x="864.0" y="239.7" width="2" height="1.6" fill="#1a4a1a"/><rect x="872.4" y="237.9" width="6.4" height="5.2" fill="#f0a020"/><rect x="874.6" y="239.7" width="2" height="1.6" fill="#1a4a1a"/><rect x="883.0" y="237.9" width="6.4" height="5.2" fill="#f0a020"/><rect x="885.2" y="239.7" width="2" height="1.6" fill="#1a4a1a"/><rect x="893.5" y="237.9" width="6.4" height="5.2" fill="#f0a020"/><rect x="895.7" y="239.7" width="2" height="1.6" fill="#1a4a1a"/><rect x="904.1" y="237.9" width="6.4" height="5.2" fill="#f0a020"/><rect x="906.3" y="239.7" width="2" height="1.6" fill="#1a4a1a"/><rect x="914.7" y="237.9" width="6.4" height="5.2" fill="#f0a020"/><rect x="916.9" y="239.7" width="2" height="1.6" fill="#1a4a1a"/><rect x="925.2" y="237.9" width="6.4" height="5.2" fill="#f0a020"/><rect x="927.5" y="239.7" width="2" height="1.6" fill="#1a4a1a"/><rect x="935.8" y="237.9" width="6.4" height="5.2" fill="#f0a020"/><rect x="938.0" y="239.7" width="2" height="1.6" fill="#1a4a1a"/><rect x="946.4" y="237.9" width="6.4" height="5.2" fill="#f0a020"/><rect x="948.6" y="239.7" width="2" height="1.6" fill="#1a4a1a"/><rect x="957.0" y="237.9" width="6.4" height="5.2" fill="#f0a020"/><rect x="959.2" y="239.7" width="2" height="1.6" fill="#1a4a1a"/><rect x="967.5" y="237.9" width="6.4" height="5.2" fill="#f0a020"/><rect x="969.7" y="239.7" width="2" height="1.6" fill="#1a4a1a"/><rect x="978.1" y="237.9" width="6.4" height="5.2" fill="#f0a020"/><rect x="980.3" y="239.7" width="2" height="1.6" fill="#1a4a1a"/><rect x="988.7" y="237.9" width="6.4" height="5.2" fill="#f0a020"/><rect x="990.9" y="239.7" width="2" height="1.6" fill="#1a4a1a"/><rect x="999.2" y="237.9" width="6.4" height="5.2" fill="#f0a020"/><rect x="1001.4" y="239.7" width="2" height="1.6" fill="#1a4a1a"/><rect x="1009.8" y="237.9" width="6.4" height="5.2" fill="#f0a020"/><rect x="1012.0" y="239.7" width="2" height="1.6" fill="#1a4a1a"/><text x="763.0" y="235.1" font-family='"Liberation Sans", sans-serif' font-size="12" fill="#eee">B</text><rect x="762.5" y="256.4" width="256" height="102.6" fill="#000"/><g transform="translate(762.5,257.9)"><rect width="256" height="99.6" fill="#5a5a5a"/><rect x="0.5" y="0.5" width="255" height="98.6" fill="none" stroke="#8a8a8a" stroke-width="1"/><rect x="1" y="1" width="254" height="21" fill="#2e2e2e"/><rect x="3" y="1.5" width="45" height="20" fill="#2a2a2a" stroke="#e0e0e0" stroke-width="1"/><rect x="6" y="3.5" width="39" height="7" fill="#4a4a4a"/><rect x="15" y="5" width="18" height="4" fill="#6a6a6a"/><rect x="6" y="12.5" width="39" height="7" fill="#4a4a4a"/><rect x="15" y="14" width="18" height="4" fill="#6a6a6a"/><rect x="49.5" y="1.5" width="45" height="20" fill="#2a2a2a" stroke="#e0e0e0" stroke-width="1"/><rect x="52.5" y="3.5" width="39" height="7" fill="#4a4a4a"/><rect x="61.5" y="5" width="18" height="4" fill="#6a6a6a"/><rect x="52.5" y="12.5" width="39" height="7" fill="#4a4a4a"/><rect x="61.5" y="14" width="18" height="4" fill="#6a6a6a"/><rect x="96" y="1.5" width="45" height="20" fill="#2a2a2a" stroke="#e0e0e0" stroke-width="1"/><rect x="99" y="3.5" width="39" height="7" fill="#4a4a4a"/><rect x="108" y="5" width="18" height="4" fill="#6a6a6a"/><rect x="99" y="12.5" width="39" height="7" fill="#4a4a4a"/><rect x="108" y="14" width="18" height="4" fill="#6a6a6a"/><rect x="141" y="1.5" width="100" height="8" fill="#6a6a6a"/><rect x="150" y="3" width="80" height="1.5" fill="#9a9a9a"/><rect x="145" y="10.5" width="44" height="11" fill="#2a2a2a" stroke="#e0e0e0" stroke-width="1"/><rect x="155" y="12.5" width="22" height="5" fill="#5a5a5a"/><rect x="191" y="10.5" width="44" height="11" fill="#2a2a2a" stroke="#e0e0e0" stroke-width="1"/><rect x="201" y="12.5" width="22" height="5" fill="#5a5a5a"/><rect x="241" y="1.5" width="13" height="20" fill="#444"/><circle cx="250" cy="5" r="2" fill="#a8b060"/><rect x="16" y="27.5" width="43" height="6" fill="#1a1a1a"/><rect x="63.6" y="27.5" width="43" height="6" fill="#1a1a1a"/><rect x="150" y="27.5" width="43" height="6" fill="#1a1a1a"/><rect x="197.7" y="27.5" width="43" height="6" fill="#1a1a1a"/><rect x="120" y="24" width="16" height="7" fill="#8aaee0"/><rect x="122" y="26" width="12" height="3" fill="#c8d8f0"/><rect x="110" y="35" width="36" height="2" fill="#333"/><rect x="11" y="37" width="235" height="61" fill="#3c3c3c"/><rect x="13" y="39" width="231" height="57" fill="url(#grill4b)"/><rect x="51" y="39" width="1" height="57" fill="#707070"/><rect x="89.5" y="39" width="1" height="57" fill="#707070"/><rect x="128" y="39" width="1" height="57" fill="#707070"/><rect x="166.5" y="39" width="1" height="57" fill="#707070"/><rect x="205" y="39" width="1" height="57" fill="#707070"/><rect x="248" y="42" width="6" height="16" rx="2" fill="#5a8ad0"/><rect x="5" y="24" width="3" height="20" fill="#333"/><rect x="247" y="60" width="4" height="34" fill="#444"/></g><rect x="762.5" y="358.0" width="256" height="102.6" fill="#000"/><g transform="translate(762.5,359.5)"><rect width="256" height="99.6" fill="#5a5a5a"/><rect x="0.5" y="0.5" width="255" height="98.6" fill="none" stroke="#8a8a8a" stroke-width="1"/><rect x="1" y="1" width="254" height="21" fill="#2e2e2e"/><rect x="3" y="1.5" width="45" height="20" fill="#2a2a2a" stroke="#e0e0e0" stroke-width="1"/><rect x="6" y="3.5" width="39" height="7" fill="#4a4a4a"/><rect x="15" y="5" width="18" height="4" fill="#6a6a6a"/><rect x="6" y="12.5" width="39" height="7" fill="#4a4a4a"/><rect x="15" y="14" width="18" height="4" fill="#6a6a6a"/><rect x="49.5" y="1.5" width="45" height="20" fill="#2a2a2a" stroke="#e0e0e0" stroke-width="1"/><rect x="52.5" y="3.5" width="39" height="7" fill="#4a4a4a"/><rect x="61.5" y="5" width="18" height="4" fill="#6a6a6a"/><rect x="52.5" y="12.5" width="39" height="7" fill="#4a4a4a"/><rect x="61.5" y="14" width="18" height="4" fill="#6a6a6a"/><rect x="96" y="1.5" width="45" height="20" fill="#2a2a2a" stroke="#e0e0e0" stroke-width="1"/><rect x="99" y="3.5" width="39" height="7" fill="#4a4a4a"/><rect x="108" y="5" width="18" height="4" fill="#6a6a6a"/><rect x="99" y="12.5" width="39" height="7" fill="#4a4a4a"/><rect x="108" y="14" width="18" height="4" fill="#6a6a6a"/><rect x="141" y="1.5" width="100" height="8" fill="#6a6a6a"/><rect x="150" y="3" width="80" height="1.5" fill="#9a9a9a"/><rect x="145" y="10.5" width="44" height="11" fill="#2a2a2a" stroke="#e0e0e0" stroke-width="1"/><rect x="155" y="12.5" width="22" height="5" fill="#5a5a5a"/><rect x="191" y="10.5" width="44" height="11" fill="#2a2a2a" stroke="#e0e0e0" stroke-width="1"/><rect x="201" y="12.5" width="22" height="5" fill="#5a5a5a"/><rect x="241" y="1.5" width="13" height="20" fill="#444"/><circle cx="250" cy="5" r="2" fill="#a8b060"/><rect x="16" y="27.5" width="43" height="6" fill="#1a1a1a"/><rect x="63.6" y="27.5" width="43" height="6" fill="#1a1a1a"/><rect x="150" y="27.5" width="43" height="6" fill="#1a1a1a"/><rect x="197.7" y="27.5" width="43" height="6" fill="#1a1a1a"/><rect x="120" y="24" width="16" height="7" fill="#8aaee0"/><rect x="122" y="26" width="12" height="3" fill="#c8d8f0"/><rect x="110" y="35" width="36" height="2" fill="#333"/><rect x="11" y="37" width="235" height="61" fill="#3c3c3c"/><rect x="13" y="39" width="231" height="57" fill="url(#grill4b)"/><rect x="51" y="39" width="1" height="57" fill="#707070"/><rect x="89.5" y="39" width="1" height="57" fill="#707070"/><rect x="128" y="39" width="1" height="57" fill="#707070"/><rect x="166.5" y="39" width="1" height="57" fill="#707070"/><rect x="205" y="39" width="1" height="57" fill="#707070"/><rect x="248" y="42" width="6" height="16" rx="2" fill="#5a8ad0"/><rect x="5" y="24" width="3" height="20" fill="#333"/><rect x="247" y="60" width="4" height="34" fill="#444"/></g><rect x="762.5" y="459.6" width="256" height="102.6" fill="#000"/><g transform="translate(762.5,461.09999999999997)"><rect width="256" height="99.6" fill="#5a5a5a"/><rect x="0.5" y="0.5" width="255" height="98.6" fill="none" stroke="#8a8a8a" stroke-width="1"/><rect x="1" y="1" width="254" height="21" fill="#2e2e2e"/><rect x="3" y="1.5" width="45" height="20" fill="#2a2a2a" stroke="#e0e0e0" stroke-width="1"/><rect x="6" y="3.5" width="39" height="7" fill="#4a4a4a"/><rect x="15" y="5" width="18" height="4" fill="#6a6a6a"/><rect x="6" y="12.5" width="39" height="7" fill="#4a4a4a"/><rect x="15" y="14" width="18" height="4" fill="#6a6a6a"/><rect x="49.5" y="1.5" width="45" height="20" fill="#2a2a2a" stroke="#e0e0e0" stroke-width="1"/><rect x="52.5" y="3.5" width="39" height="7" fill="#4a4a4a"/><rect x="61.5" y="5" width="18" height="4" fill="#6a6a6a"/><rect x="52.5" y="12.5" width="39" height="7" fill="#4a4a4a"/><rect x="61.5" y="14" width="18" height="4" fill="#6a6a6a"/><rect x="96" y="1.5" width="45" height="20" fill="#2a2a2a" stroke="#e0e0e0" stroke-width="1"/><rect x="99" y="3.5" width="39" height="7" fill="#4a4a4a"/><rect x="108" y="5" width="18" height="4" fill="#6a6a6a"/><rect x="99" y="12.5" width="39" height="7" fill="#4a4a4a"/><rect x="108" y="14" width="18" height="4" fill="#6a6a6a"/><rect x="141" y="1.5" width="100" height="8" fill="#6a6a6a"/><rect x="150" y="3" width="80" height="1.5" fill="#9a9a9a"/><rect x="145" y="10.5" width="44" height="11" fill="#2a2a2a" stroke="#e0e0e0" stroke-width="1"/><rect x="155" y="12.5" width="22" height="5" fill="#5a5a5a"/><rect x="191" y="10.5" width="44" height="11" fill="#2a2a2a" stroke="#e0e0e0" stroke-width="1"/><rect x="201" y="12.5" width="22" height="5" fill="#5a5a5a"/><rect x="241" y="1.5" width="13" height="20" fill="#444"/><circle cx="250" cy="5" r="2" fill="#a8b060"/><rect x="16" y="27.5" width="43" height="6" fill="#1a1a1a"/><rect x="63.6" y="27.5" width="43" height="6" fill="#1a1a1a"/><rect x="150" y="27.5" width="43" height="6" fill="#1a1a1a"/><rect x="197.7" y="27.5" width="43" height="6" fill="#1a1a1a"/><rect x="120" y="24" width="16" height="7" fill="#8aaee0"/><rect x="122" y="26" width="12" height="3" fill="#c8d8f0"/><rect x="110" y="35" width="36" height="2" fill="#333"/><rect x="11" y="37" width="235" height="61" fill="#3c3c3c"/><rect x="13" y="39" width="231" height="57" fill="url(#grill4b)"/><rect x="51" y="39" width="1" height="57" fill="#707070"/><rect x="89.5" y="39" width="1" height="57" fill="#707070"/><rect x="128" y="39" width="1" height="57" fill="#707070"/><rect x="166.5" y="39" width="1" height="57" fill="#707070"/><rect x="205" y="39" width="1" height="57" fill="#707070"/><rect x="248" y="42" width="6" height="16" rx="2" fill="#5a8ad0"/><rect x="5" y="24" width="3" height="20" fill="#333"/><rect x="247" y="60" width="4" height="34" fill="#444"/></g><rect x="762.5" y="561.2" width="256" height="26.4" fill="#000"/><rect x="762.5" y="562.7" width="256" height="23.399999999999864" fill="#990000"/><text x="818.5" y="580.7" font-family='"Liberation Sans", sans-serif' font-size="17" fill="#1a0000" stroke="#1a0000" stroke-width="0.15" textLength="115" lengthAdjust="spacingAndGlyphs">reserved 1 RU</text><rect x="762.5" y="586.6" width="256" height="26.4" fill="#000"/><rect x="762.5" y="588.0999999999999" width="256" height="23.40000000000009" fill="#990000"/><text x="818.5" y="606.0999999999999" font-family='"Liberation Sans", sans-serif' font-size="17" fill="#1a0000" stroke="#1a0000" stroke-width="0.15" textLength="115" lengthAdjust="spacingAndGlyphs">reserved 1 RU</text><rect x="762.5" y="612.0" width="256" height="26.4" fill="#000"/><rect x="762.5" y="613.5" width="256" height="23.399999999999977" fill="#990000"/><text x="818.5" y="631.5" font-family='"Liberation Sans", sans-serif' font-size="17" fill="#1a0000" stroke="#1a0000" stroke-width="0.15" textLength="115" lengthAdjust="spacingAndGlyphs">reserved 1 RU</text><rect x="762.5" y="637.4" width="256" height="51.8" fill="#000"/><g transform="translate(762.5,638.9)"><rect width="256" height="48.8" fill="#8c8c8c"/><rect x="0.5" y="0.5" width="255" height="47.8" fill="none" stroke="#777" stroke-width="1"/><rect x="1" y="1" width="254" height="2" fill="#c0c0c0"/><rect x="2" y="4" width="12" height="42" fill="#a0a0a0"/><rect x="4" y="9" width="7" height="6" fill="#888"/><rect x="2" y="1" width="6" height="5" fill="#e8e8e8"/><rect x="20" y="3" width="104" height="31" fill="#262626"/><rect x="21" y="4" width="102" height="29" fill="url(#grill2b)"/><rect x="72" y="4" width="1" height="29" fill="#888"/><rect x="24" y="37.5" width="71" height="9.5" fill="#3a3a3a" stroke="#222" stroke-width="0.6"/><rect x="48" y="41" width="6" height="1.2" fill="#777"/><rect x="60" y="41" width="3" height="1.5" fill="#777"/><rect x="8" y="40" width="5" height="3" fill="#555"/><ellipse cx="107.5" cy="40.5" rx="8" ry="3.5" fill="#dfe8f0"/><ellipse cx="107.5" cy="40.5" rx="5.5" ry="2.5" fill="#4a78c8"/><rect x="121" y="38" width="6" height="2.5" fill="#333"/><rect x="121" y="42" width="6" height="2.5" fill="#333"/><circle cx="133" cy="40" r="1.6" fill="#4a8a7a"/><circle cx="137" cy="41" r="1" fill="#555"/><circle cx="141" cy="41" r="1" fill="#555"/><circle cx="145" cy="41" r="1" fill="#555"/><circle cx="152" cy="40" r="2.5" fill="none" stroke="#888" stroke-width="0.8"/><rect x="130" y="2" width="28" height="33" fill="#b4b4b4" stroke="#777" stroke-width="0.8"/><rect x="132" y="4" width="9" height="8" fill="#666"/><rect x="150" y="3" width="5" height="10" fill="#444"/><rect x="148" y="17" width="7" height="6" fill="#777"/><rect x="132" y="27" width="22" height="4" fill="#777"/><rect x="137" y="19" width="8" height="3" fill="#555"/><rect x="162" y="2" width="77" height="44" fill="#262626"/><rect x="163.0" y="3" width="8" height="42" fill="#3e3e3e"/><rect x="164.0" y="35" width="6" height="6" fill="#1c1c1c"/><rect x="166.5" y="6" width="1" height="26" fill="#4c4c4c"/><rect x="172.5" y="3" width="8" height="42" fill="#3e3e3e"/><rect x="173.5" y="35" width="6" height="6" fill="#1c1c1c"/><rect x="176.0" y="6" width="1" height="26" fill="#4c4c4c"/><rect x="182.0" y="3" width="8" height="42" fill="#3e3e3e"/><rect x="183.0" y="35" width="6" height="6" fill="#1c1c1c"/><rect x="185.5" y="6" width="1" height="26" fill="#4c4c4c"/><rect x="191.5" y="3" width="8" height="42" fill="#3e3e3e"/><rect x="192.5" y="35" width="6" height="6" fill="#1c1c1c"/><rect x="195.0" y="6" width="1" height="26" fill="#4c4c4c"/><rect x="201.0" y="3" width="8" height="42" fill="#3e3e3e"/><rect x="202.0" y="35" width="6" height="6" fill="#1c1c1c"/><rect x="204.5" y="6" width="1" height="26" fill="#4c4c4c"/><rect x="210.5" y="3" width="8" height="42" fill="#3e3e3e"/><rect x="211.5" y="35" width="6" height="6" fill="#1c1c1c"/><rect x="214.0" y="6" width="1" height="26" fill="#4c4c4c"/><rect x="220.0" y="3" width="8" height="42" fill="#3e3e3e"/><rect x="221.0" y="35" width="6" height="6" fill="#1c1c1c"/><rect x="223.5" y="6" width="1" height="26" fill="#4c4c4c"/><rect x="229.5" y="3" width="8" height="42" fill="#3e3e3e"/><rect x="230.5" y="35" width="6" height="6" fill="#1c1c1c"/><rect x="233.0" y="6" width="1" height="26" fill="#4c4c4c"/><rect x="244" y="4" width="11" height="42" fill="#bcbcbc"/><rect x="246" y="5" width="7" height="10" fill="#888"/></g><rect x="762.5" y="688.2" width="256" height="26.4" fill="#000"/><rect x="762.5" y="689.6999999999999" width="256" height="23.399999999999977" fill="#777777"/><text x="817.8" y="707.6999999999999" font-family='"Liberation Sans", sans-serif' font-size="17" fill="#111" stroke="#111" stroke-width="0.15" textLength="130.5" lengthAdjust="spacingAndGlyphs">Blindpanel 1 RU</text><rect x="762.5" y="713.6" width="256" height="51.8" fill="#000"/><g transform="translate(762.5,715.0999999999999)"><rect width="256" height="48.8" fill="#8c8c8c"/><rect x="0.5" y="0.5" width="255" height="47.8" fill="none" stroke="#777" stroke-width="1"/><rect x="1" y="1" width="254" height="2" fill="#c0c0c0"/><rect x="2" y="4" width="12" height="42" fill="#a0a0a0"/><rect x="4" y="9" width="7" height="6" fill="#888"/><rect x="2" y="1" width="6" height="5" fill="#e8e8e8"/><rect x="20" y="3" width="104" height="31" fill="#262626"/><rect x="21" y="4" width="102" height="29" fill="url(#grill2b)"/><rect x="72" y="4" width="1" height="29" fill="#888"/><rect x="24" y="37.5" width="71" height="9.5" fill="#3a3a3a" stroke="#222" stroke-width="0.6"/><rect x="48" y="41" width="6" height="1.2" fill="#777"/><rect x="60" y="41" width="3" height="1.5" fill="#777"/><rect x="8" y="40" width="5" height="3" fill="#555"/><ellipse cx="107.5" cy="40.5" rx="8" ry="3.5" fill="#dfe8f0"/><ellipse cx="107.5" cy="40.5" rx="5.5" ry="2.5" fill="#4a78c8"/><rect x="121" y="38" width="6" height="2.5" fill="#333"/><rect x="121" y="42" width="6" height="2.5" fill="#333"/><circle cx="133" cy="40" r="1.6" fill="#4a8a7a"/><circle cx="137" cy="41" r="1" fill="#555"/><circle cx="141" cy="41" r="1" fill="#555"/><circle cx="145" cy="41" r="1" fill="#555"/><circle cx="152" cy="40" r="2.5" fill="none" stroke="#888" stroke-width="0.8"/><rect x="130" y="2" width="28" height="33" fill="#b4b4b4" stroke="#777" stroke-width="0.8"/><rect x="132" y="4" width="9" height="8" fill="#666"/><rect x="150" y="3" width="5" height="10" fill="#444"/><rect x="148" y="17" width="7" height="6" fill="#777"/><rect x="132" y="27" width="22" height="4" fill="#777"/><rect x="137" y="19" width="8" height="3" fill="#555"/><rect x="162" y="2" width="77" height="44" fill="#262626"/><rect x="163.0" y="3" width="8" height="42" fill="#3e3e3e"/><rect x="164.0" y="35" width="6" height="6" fill="#1c1c1c"/><rect x="166.5" y="6" width="1" height="26" fill="#4c4c4c"/><rect x="172.5" y="3" width="8" height="42" fill="#3e3e3e"/><rect x="173.5" y="35" width="6" height="6" fill="#1c1c1c"/><rect x="176.0" y="6" width="1" height="26" fill="#4c4c4c"/><rect x="182.0" y="3" width="8" height="42" fill="#3e3e3e"/><rect x="183.0" y="35" width="6" height="6" fill="#1c1c1c"/><rect x="185.5" y="6" width="1" height="26" fill="#4c4c4c"/><rect x="191.5" y="3" width="8" height="42" fill="#3e3e3e"/><rect x="192.5" y="35" width="6" height="6" fill="#1c1c1c"/><rect x="195.0" y="6" width="1" height="26" fill="#4c4c4c"/><rect x="201.0" y="3" width="8" height="42" fill="#3e3e3e"/><rect x="202.0" y="35" width="6" height="6" fill="#1c1c1c"/><rect x="204.5" y="6" width="1" height="26" fill="#4c4c4c"/><rect x="210.5" y="3" width="8" height="42" fill="#3e3e3e"/><rect x="211.5" y="35" width="6" height="6" fill="#1c1c1c"/><rect x="214.0" y="6" width="1" height="26" fill="#4c4c4c"/><rect x="220.0" y="3" width="8" height="42" fill="#3e3e3e"/><rect x="221.0" y="35" width="6" height="6" fill="#1c1c1c"/><rect x="223.5" y="6" width="1" height="26" fill="#4c4c4c"/><rect x="229.5" y="3" width="8" height="42" fill="#3e3e3e"/><rect x="230.5" y="35" width="6" height="6" fill="#1c1c1c"/><rect x="233.0" y="6" width="1" height="26" fill="#4c4c4c"/><rect x="244" y="4" width="11" height="42" fill="#bcbcbc"/><rect x="246" y="5" width="7" height="10" fill="#888"/></g><rect x="762.5" y="764.4" width="256" height="26.4" fill="#000"/><rect x="762.5" y="765.9" width="256" height="23.399999999999977" fill="#777777"/><text x="817.8" y="783.9" font-family='"Liberation Sans", sans-serif' font-size="17" fill="#111" stroke="#111" stroke-width="0.15" textLength="130.5" lengthAdjust="spacingAndGlyphs">Blindpanel 1 RU</text><rect x="762.5" y="789.8" width="256" height="51.8" fill="#000"/><g transform="translate(762.5,791.3)"><rect width="256" height="48.8" fill="#8c8c8c"/><rect x="0.5" y="0.5" width="255" height="47.8" fill="none" stroke="#777" stroke-width="1"/><rect x="1" y="1" width="254" height="2" fill="#c0c0c0"/><rect x="2" y="4" width="12" height="42" fill="#a0a0a0"/><rect x="4" y="9" width="7" height="6" fill="#888"/><rect x="2" y="1" width="6" height="5" fill="#e8e8e8"/><rect x="20" y="3" width="104" height="31" fill="#262626"/><rect x="21" y="4" width="102" height="29" fill="url(#grill2b)"/><rect x="72" y="4" width="1" height="29" fill="#888"/><rect x="24" y="37.5" width="71" height="9.5" fill="#3a3a3a" stroke="#222" stroke-width="0.6"/><rect x="48" y="41" width="6" height="1.2" fill="#777"/><rect x="60" y="41" width="3" height="1.5" fill="#777"/><rect x="8" y="40" width="5" height="3" fill="#555"/><ellipse cx="107.5" cy="40.5" rx="8" ry="3.5" fill="#dfe8f0"/><ellipse cx="107.5" cy="40.5" rx="5.5" ry="2.5" fill="#4a78c8"/><rect x="121" y="38" width="6" height="2.5" fill="#333"/><rect x="121" y="42" width="6" height="2.5" fill="#333"/><circle cx="133" cy="40" r="1.6" fill="#4a8a7a"/><circle cx="137" cy="41" r="1" fill="#555"/><circle cx="141" cy="41" r="1" fill="#555"/><circle cx="145" cy="41" r="1" fill="#555"/><circle cx="152" cy="40" r="2.5" fill="none" stroke="#888" stroke-width="0.8"/><rect x="130" y="2" width="28" height="33" fill="#b4b4b4" stroke="#777" stroke-width="0.8"/><rect x="132" y="4" width="9" height="8" fill="#666"/><rect x="150" y="3" width="5" height="10" fill="#444"/><rect x="148" y="17" width="7" height="6" fill="#777"/><rect x="132" y="27" width="22" height="4" fill="#777"/><rect x="137" y="19" width="8" height="3" fill="#555"/><rect x="162" y="2" width="77" height="44" fill="#262626"/><rect x="163.0" y="3" width="8" height="42" fill="#3e3e3e"/><rect x="164.0" y="35" width="6" height="6" fill="#1c1c1c"/><rect x="166.5" y="6" width="1" height="26" fill="#4c4c4c"/><rect x="172.5" y="3" width="8" height="42" fill="#3e3e3e"/><rect x="173.5" y="35" width="6" height="6" fill="#1c1c1c"/><rect x="176.0" y="6" width="1" height="26" fill="#4c4c4c"/><rect x="182.0" y="3" width="8" height="42" fill="#3e3e3e"/><rect x="183.0" y="35" width="6" height="6" fill="#1c1c1c"/><rect x="185.5" y="6" width="1" height="26" fill="#4c4c4c"/><rect x="191.5" y="3" width="8" height="42" fill="#3e3e3e"/><rect x="192.5" y="35" width="6" height="6" fill="#1c1c1c"/><rect x="195.0" y="6" width="1" height="26" fill="#4c4c4c"/><rect x="201.0" y="3" width="8" height="42" fill="#3e3e3e"/><rect x="202.0" y="35" width="6" height="6" fill="#1c1c1c"/><rect x="204.5" y="6" width="1" height="26" fill="#4c4c4c"/><rect x="210.5" y="3" width="8" height="42" fill="#3e3e3e"/><rect x="211.5" y="35" width="6" height="6" fill="#1c1c1c"/><rect x="214.0" y="6" width="1" height="26" fill="#4c4c4c"/><rect x="220.0" y="3" width="8" height="42" fill="#3e3e3e"/><rect x="221.0" y="35" width="6" height="6" fill="#1c1c1c"/><rect x="223.5" y="6" width="1" height="26" fill="#4c4c4c"/><rect x="229.5" y="3" width="8" height="42" fill="#3e3e3e"/><rect x="230.5" y="35" width="6" height="6" fill="#1c1c1c"/><rect x="233.0" y="6" width="1" height="26" fill="#4c4c4c"/><rect x="244" y="4" width="11" height="42" fill="#bcbcbc"/><rect x="246" y="5" width="7" height="10" fill="#888"/></g><rect x="762.5" y="840.6" width="256" height="26.4" fill="#000"/><rect x="762.5" y="842.0999999999999" width="256" height="23.40000000000009" fill="#777777"/><text x="817.8" y="860.0999999999999" font-family='"Liberation Sans", sans-serif' font-size="17" fill="#111" stroke="#111" stroke-width="0.15" textLength="130.5" lengthAdjust="spacingAndGlyphs">Blindpanel 1 RU</text><rect x="762.5" y="866.0" width="256" height="51.8" fill="#000"/><g transform="translate(762.5,867.5)"><rect width="256" height="48.8" fill="#8c8c8c"/><rect x="0.5" y="0.5" width="255" height="47.8" fill="none" stroke="#777" stroke-width="1"/><rect x="1" y="1" width="254" height="2" fill="#c0c0c0"/><rect x="2" y="4" width="12" height="42" fill="#a0a0a0"/><rect x="4" y="9" width="7" height="6" fill="#888"/><rect x="2" y="1" width="6" height="5" fill="#e8e8e8"/><rect x="20" y="3" width="104" height="31" fill="#262626"/><rect x="21" y="4" width="102" height="29" fill="url(#grill2b)"/><rect x="72" y="4" width="1" height="29" fill="#888"/><rect x="24" y="37.5" width="71" height="9.5" fill="#3a3a3a" stroke="#222" stroke-width="0.6"/><rect x="48" y="41" width="6" height="1.2" fill="#777"/><rect x="60" y="41" width="3" height="1.5" fill="#777"/><rect x="8" y="40" width="5" height="3" fill="#555"/><ellipse cx="107.5" cy="40.5" rx="8" ry="3.5" fill="#dfe8f0"/><ellipse cx="107.5" cy="40.5" rx="5.5" ry="2.5" fill="#4a78c8"/><rect x="121" y="38" width="6" height="2.5" fill="#333"/><rect x="121" y="42" width="6" height="2.5" fill="#333"/><circle cx="133" cy="40" r="1.6" fill="#4a8a7a"/><circle cx="137" cy="41" r="1" fill="#555"/><circle cx="141" cy="41" r="1" fill="#555"/><circle cx="145" cy="41" r="1" fill="#555"/><circle cx="152" cy="40" r="2.5" fill="none" stroke="#888" stroke-width="0.8"/><rect x="130" y="2" width="28" height="33" fill="#b4b4b4" stroke="#777" stroke-width="0.8"/><rect x="132" y="4" width="9" height="8" fill="#666"/><rect x="150" y="3" width="5" height="10" fill="#444"/><rect x="148" y="17" width="7" height="6" fill="#777"/><rect x="132" y="27" width="22" height="4" fill="#777"/><rect x="137" y="19" width="8" height="3" fill="#555"/><rect x="162" y="2" width="77" height="44" fill="#262626"/><rect x="163.0" y="3" width="8" height="42" fill="#3e3e3e"/><rect x="164.0" y="35" width="6" height="6" fill="#1c1c1c"/><rect x="166.5" y="6" width="1" height="26" fill="#4c4c4c"/><rect x="172.5" y="3" width="8" height="42" fill="#3e3e3e"/><rect x="173.5" y="35" width="6" height="6" fill="#1c1c1c"/><rect x="176.0" y="6" width="1" height="26" fill="#4c4c4c"/><rect x="182.0" y="3" width="8" height="42" fill="#3e3e3e"/><rect x="183.0" y="35" width="6" height="6" fill="#1c1c1c"/><rect x="185.5" y="6" width="1" height="26" fill="#4c4c4c"/><rect x="191.5" y="3" width="8" height="42" fill="#3e3e3e"/><rect x="192.5" y="35" width="6" height="6" fill="#1c1c1c"/><rect x="195.0" y="6" width="1" height="26" fill="#4c4c4c"/><rect x="201.0" y="3" width="8" height="42" fill="#3e3e3e"/><rect x="202.0" y="35" width="6" height="6" fill="#1c1c1c"/><rect x="204.5" y="6" width="1" height="26" fill="#4c4c4c"/><rect x="210.5" y="3" width="8" height="42" fill="#3e3e3e"/><rect x="211.5" y="35" width="6" height="6" fill="#1c1c1c"/><rect x="214.0" y="6" width="1" height="26" fill="#4c4c4c"/><rect x="220.0" y="3" width="8" height="42" fill="#3e3e3e"/><rect x="221.0" y="35" width="6" height="6" fill="#1c1c1c"/><rect x="223.5" y="6" width="1" height="26" fill="#4c4c4c"/><rect x="229.5" y="3" width="8" height="42" fill="#3e3e3e"/><rect x="230.5" y="35" width="6" height="6" fill="#1c1c1c"/><rect x="233.0" y="6" width="1" height="26" fill="#4c4c4c"/><rect x="244" y="4" width="11" height="42" fill="#bcbcbc"/><rect x="246" y="5" width="7" height="10" fill="#888"/></g><rect x="762.5" y="916.8" width="256" height="26.4" fill="#000"/><rect x="762.5" y="918.3" width="256" height="23.399999999999977" fill="#777777"/><text x="817.8" y="936.3" font-family='"Liberation Sans", sans-serif' font-size="17" fill="#111" stroke="#111" stroke-width="0.15" textLength="130.5" lengthAdjust="spacingAndGlyphs">Blindpanel 1 RU</text><rect x="762.5" y="942.2" width="256" height="51.8" fill="#000"/><g transform="translate(762.5,943.6999999999999)"><rect width="256" height="48.8" fill="#8c8c8c"/><rect x="0.5" y="0.5" width="255" height="47.8" fill="none" stroke="#777" stroke-width="1"/><rect x="1" y="1" width="254" height="2" fill="#c0c0c0"/><rect x="2" y="4" width="12" height="42" fill="#a0a0a0"/><rect x="4" y="9" width="7" height="6" fill="#888"/><rect x="2" y="1" width="6" height="5" fill="#e8e8e8"/><rect x="20" y="3" width="104" height="31" fill="#262626"/><rect x="21" y="4" width="102" height="29" fill="url(#grill2b)"/><rect x="72" y="4" width="1" height="29" fill="#888"/><rect x="24" y="37.5" width="71" height="9.5" fill="#3a3a3a" stroke="#222" stroke-width="0.6"/><rect x="48" y="41" width="6" height="1.2" fill="#777"/><rect x="60" y="41" width="3" height="1.5" fill="#777"/><rect x="8" y="40" width="5" height="3" fill="#555"/><ellipse cx="107.5" cy="40.5" rx="8" ry="3.5" fill="#dfe8f0"/><ellipse cx="107.5" cy="40.5" rx="5.5" ry="2.5" fill="#4a78c8"/><rect x="121" y="38" width="6" height="2.5" fill="#333"/><rect x="121" y="42" width="6" height="2.5" fill="#333"/><circle cx="133" cy="40" r="1.6" fill="#4a8a7a"/><circle cx="137" cy="41" r="1" fill="#555"/><circle cx="141" cy="41" r="1" fill="#555"/><circle cx="145" cy="41" r="1" fill="#555"/><circle cx="152" cy="40" r="2.5" fill="none" stroke="#888" stroke-width="0.8"/><rect x="130" y="2" width="28" height="33" fill="#b4b4b4" stroke="#777" stroke-width="0.8"/><rect x="132" y="4" width="9" height="8" fill="#666"/><rect x="150" y="3" width="5" height="10" fill="#444"/><rect x="148" y="17" width="7" height="6" fill="#777"/><rect x="132" y="27" width="22" height="4" fill="#777"/><rect x="137" y="19" width="8" height="3" fill="#555"/><rect x="162" y="2" width="77" height="44" fill="#262626"/><rect x="163.0" y="3" width="8" height="42" fill="#3e3e3e"/><rect x="164.0" y="35" width="6" height="6" fill="#1c1c1c"/><rect x="166.5" y="6" width="1" height="26" fill="#4c4c4c"/><rect x="172.5" y="3" width="8" height="42" fill="#3e3e3e"/><rect x="173.5" y="35" width="6" height="6" fill="#1c1c1c"/><rect x="176.0" y="6" width="1" height="26" fill="#4c4c4c"/><rect x="182.0" y="3" width="8" height="42" fill="#3e3e3e"/><rect x="183.0" y="35" width="6" height="6" fill="#1c1c1c"/><rect x="185.5" y="6" width="1" height="26" fill="#4c4c4c"/><rect x="191.5" y="3" width="8" height="42" fill="#3e3e3e"/><rect x="192.5" y="35" width="6" height="6" fill="#1c1c1c"/><rect x="195.0" y="6" width="1" height="26" fill="#4c4c4c"/><rect x="201.0" y="3" width="8" height="42" fill="#3e3e3e"/><rect x="202.0" y="35" width="6" height="6" fill="#1c1c1c"/><rect x="204.5" y="6" width="1" height="26" fill="#4c4c4c"/><rect x="210.5" y="3" width="8" height="42" fill="#3e3e3e"/><rect x="211.5" y="35" width="6" height="6" fill="#1c1c1c"/><rect x="214.0" y="6" width="1" height="26" fill="#4c4c4c"/><rect x="220.0" y="3" width="8" height="42" fill="#3e3e3e"/><rect x="221.0" y="35" width="6" height="6" fill="#1c1c1c"/><rect x="223.5" y="6" width="1" height="26" fill="#4c4c4c"/><rect x="229.5" y="3" width="8" height="42" fill="#3e3e3e"/><rect x="230.5" y="35" width="6" height="6" fill="#1c1c1c"/><rect x="233.0" y="6" width="1" height="26" fill="#4c4c4c"/><rect x="244" y="4" width="11" height="42" fill="#bcbcbc"/><rect x="246" y="5" width="7" height="10" fill="#888"/></g><rect x="762.5" y="993.0" width="256" height="26.4" fill="#000"/><rect x="762.5" y="994.5" width="256" height="23.399999999999977" fill="#777777"/><text x="817.8" y="1012.5" font-family='"Liberation Sans", sans-serif' font-size="17" fill="#111" stroke="#111" stroke-width="0.15" textLength="130.5" lengthAdjust="spacingAndGlyphs">Blindpanel 1 RU</text><g transform="translate(763.1,1019.6999999999999)"><rect x="0.5" y="0.5" width="247.4" height="23.3" fill="#bdbdbd" stroke="#777" stroke-width="1"/><rect x="10.4" y="3" width="34.6" height="17.5" fill="#111"/><rect x="10.4" y="11" width="34.6" height="1.6" fill="#e8e8e8"/><rect x="12.6" y="4.3" width="6" height="5.4" fill="#18ee18"/><rect x="14.2" y="5.8" width="2.8" height="2.4" fill="#0a500a"/><rect x="20.8" y="4.3" width="6" height="5.4" fill="#18ee18"/><rect x="22.4" y="5.8" width="2.8" height="2.4" fill="#0a500a"/><rect x="29.0" y="4.3" width="6" height="5.4" fill="#18ee18"/><rect x="30.6" y="5.8" width="2.8" height="2.4" fill="#0a500a"/><rect x="37.2" y="4.3" width="6" height="5.4" fill="#18ee18"/><rect x="38.8" y="5.8" width="2.8" height="2.4" fill="#0a500a"/><rect x="12.6" y="12.7" width="6" height="5.4" fill="#18ee18"/><rect x="14.2" y="14.2" width="2.8" height="2.4" fill="#0a500a"/><rect x="20.8" y="12.7" width="6" height="5.4" fill="#18ee18"/><rect x="22.4" y="14.2" width="2.8" height="2.4" fill="#0a500a"/><rect x="29.0" y="12.7" width="6" height="5.4" fill="#18ee18"/><rect x="30.6" y="14.2" width="2.8" height="2.4" fill="#0a500a"/><rect x="37.2" y="12.7" width="6" height="5.4" fill="#18ee18"/><rect x="38.8" y="14.2" width="2.8" height="2.4" fill="#0a500a"/><rect x="3.4000000000000004" y="4" width="5" height="16" fill="#a0a0a0"/><rect x="56.4" y="3" width="34.6" height="17.5" fill="#111"/><rect x="56.4" y="11" width="34.6" height="1.6" fill="#e8e8e8"/><rect x="58.6" y="4.3" width="6" height="5.4" fill="#18ee18"/><rect x="60.2" y="5.8" width="2.8" height="2.4" fill="#0a500a"/><rect x="66.8" y="4.3" width="6" height="5.4" fill="#18ee18"/><rect x="68.4" y="5.8" width="2.8" height="2.4" fill="#0a500a"/><rect x="75.0" y="4.3" width="6" height="5.4" fill="#18ee18"/><rect x="76.6" y="5.8" width="2.8" height="2.4" fill="#0a500a"/><rect x="83.2" y="4.3" width="6" height="5.4" fill="#18ee18"/><rect x="84.8" y="5.8" width="2.8" height="2.4" fill="#0a500a"/><rect x="58.6" y="12.7" width="6" height="5.4" fill="#18ee18"/><rect x="60.2" y="14.2" width="2.8" height="2.4" fill="#0a500a"/><rect x="66.8" y="12.7" width="6" height="5.4" fill="#18ee18"/><rect x="68.4" y="14.2" width="2.8" height="2.4" fill="#0a500a"/><rect x="75.0" y="12.7" width="6" height="5.4" fill="#18ee18"/><rect x="76.6" y="14.2" width="2.8" height="2.4" fill="#0a500a"/><rect x="83.2" y="12.7" width="6" height="5.4" fill="#18ee18"/><rect x="84.8" y="14.2" width="2.8" height="2.4" fill="#0a500a"/><rect x="49.4" y="4" width="5" height="16" fill="#a0a0a0"/><rect x="102.4" y="3" width="34.6" height="17.5" fill="#111"/><rect x="102.4" y="11" width="34.6" height="1.6" fill="#e8e8e8"/><rect x="104.6" y="4.3" width="6" height="5.4" fill="#18ee18"/><rect x="106.2" y="5.8" width="2.8" height="2.4" fill="#0a500a"/><rect x="112.8" y="4.3" width="6" height="5.4" fill="#18ee18"/><rect x="114.4" y="5.8" width="2.8" height="2.4" fill="#0a500a"/><rect x="121.0" y="4.3" width="6" height="5.4" fill="#18ee18"/><rect x="122.6" y="5.8" width="2.8" height="2.4" fill="#0a500a"/><rect x="129.2" y="4.3" width="6" height="5.4" fill="#18ee18"/><rect x="130.8" y="5.8" width="2.8" height="2.4" fill="#0a500a"/><rect x="104.6" y="12.7" width="6" height="5.4" fill="#18ee18"/><rect x="106.2" y="14.2" width="2.8" height="2.4" fill="#0a500a"/><rect x="112.8" y="12.7" width="6" height="5.4" fill="#18ee18"/><rect x="114.4" y="14.2" width="2.8" height="2.4" fill="#0a500a"/><rect x="121.0" y="12.7" width="6" height="5.4" fill="#18ee18"/><rect x="122.6" y="14.2" width="2.8" height="2.4" fill="#0a500a"/><rect x="129.2" y="12.7" width="6" height="5.4" fill="#18ee18"/><rect x="130.8" y="14.2" width="2.8" height="2.4" fill="#0a500a"/><rect x="95.4" y="4" width="5" height="16" fill="#a0a0a0"/><rect x="148.4" y="3" width="34.6" height="17.5" fill="#111"/><rect x="148.4" y="11" width="34.6" height="1.6" fill="#e8e8e8"/><rect x="150.6" y="4.3" width="6" height="5.4" fill="#18ee18"/><rect x="152.2" y="5.8" width="2.8" height="2.4" fill="#0a500a"/><rect x="158.8" y="4.3" width="6" height="5.4" fill="#18ee18"/><rect x="160.4" y="5.8" width="2.8" height="2.4" fill="#0a500a"/><rect x="167.0" y="4.3" width="6" height="5.4" fill="#18ee18"/><rect x="168.6" y="5.8" width="2.8" height="2.4" fill="#0a500a"/><rect x="175.2" y="4.3" width="6" height="5.4" fill="#18ee18"/><rect x="176.8" y="5.8" width="2.8" height="2.4" fill="#0a500a"/><rect x="150.6" y="12.7" width="6" height="5.4" fill="#18ee18"/><rect x="152.2" y="14.2" width="2.8" height="2.4" fill="#0a500a"/><rect x="158.8" y="12.7" width="6" height="5.4" fill="#18ee18"/><rect x="160.4" y="14.2" width="2.8" height="2.4" fill="#0a500a"/><rect x="167.0" y="12.7" width="6" height="5.4" fill="#18ee18"/><rect x="168.6" y="14.2" width="2.8" height="2.4" fill="#0a500a"/><rect x="175.2" y="12.7" width="6" height="5.4" fill="#18ee18"/><rect x="176.8" y="14.2" width="2.8" height="2.4" fill="#0a500a"/><rect x="141.4" y="4" width="5" height="16" fill="#a0a0a0"/><rect x="194.4" y="3" width="34.6" height="17.5" fill="#111"/><rect x="194.4" y="11" width="34.6" height="1.6" fill="#e8e8e8"/><rect x="196.6" y="4.3" width="6" height="5.4" fill="#18ee18"/><rect x="198.2" y="5.8" width="2.8" height="2.4" fill="#0a500a"/><rect x="204.8" y="4.3" width="6" height="5.4" fill="#18ee18"/><rect x="206.4" y="5.8" width="2.8" height="2.4" fill="#0a500a"/><rect x="213.0" y="4.3" width="6" height="5.4" fill="#18ee18"/><rect x="214.6" y="5.8" width="2.8" height="2.4" fill="#0a500a"/><rect x="221.2" y="4.3" width="6" height="5.4" fill="#18ee18"/><rect x="222.8" y="5.8" width="2.8" height="2.4" fill="#0a500a"/><rect x="196.6" y="12.7" width="6" height="5.4" fill="#18ee18"/><rect x="198.2" y="14.2" width="2.8" height="2.4" fill="#0a500a"/><rect x="204.8" y="12.7" width="6" height="5.4" fill="#18ee18"/><rect x="206.4" y="14.2" width="2.8" height="2.4" fill="#0a500a"/><rect x="213.0" y="12.7" width="6" height="5.4" fill="#18ee18"/><rect x="214.6" y="14.2" width="2.8" height="2.4" fill="#0a500a"/><rect x="221.2" y="12.7" width="6" height="5.4" fill="#18ee18"/><rect x="222.8" y="14.2" width="2.8" height="2.4" fill="#0a500a"/><rect x="187.4" y="4" width="5" height="16" fill="#a0a0a0"/><rect x="194.4" y="21" width="34.6" height="1.6" fill="#f0e000"/><rect x="232" y="4" width="6" height="16" fill="#a0a0a0"/></g><rect x="763.5" y="1069.6999999999998" width="254" height="26.5" fill="#333"/><g transform="translate(764.0,1070.2999999999997)"><rect x="0.5" y="0.5" width="251" height="23.4" fill="#c4c4c4" stroke="#555" stroke-width="1"/><rect x="2" y="2" width="248" height="20.4" fill="url(#dotgrill)"/><rect x="5" y="2" width="77" height="7" fill="#e6e6e6"/><rect x="52" y="4.5" width="6" height="2.5" fill="#333"/><rect x="100" y="15" width="40" height="7" fill="#dedede" stroke="#aaa" stroke-width="0.5"/><rect x="112" y="17" width="20" height="3" fill="#9ac89a"/><rect x="140" y="5" width="6" height="17" fill="#e6e6e6"/></g><rect x="762.5" y="1094.6" width="256" height="26.4" fill="#000"/><rect x="762.5" y="1096.1" width="256" height="23.40000000000009" fill="#ff3300"/><text x="826.8" y="1114.1" font-family='"Liberation Sans", sans-serif' font-size="17" fill="#1a0500" stroke="#1a0500" stroke-width="0.15" textLength="108" lengthAdjust="spacingAndGlyphs">blocked 1 RU</text><rect x="762.5" y="1120.0" width="256" height="26.4" fill="#000"/><rect x="762.5" y="1121.5" width="256" height="23.399999999999864" fill="#ff3300"/><text x="826.8" y="1139.5" font-family='"Liberation Sans", sans-serif' font-size="17" fill="#1a0500" stroke="#1a0500" stroke-width="0.15" textLength="108" lengthAdjust="spacingAndGlyphs">blocked 1 RU</text><rect x="762.5" y="1145.4" width="256" height="26.4" fill="#000"/><rect x="762.5" y="1146.8999999999999" width="256" height="23.40000000000009" fill="#ff3300"/><text x="826.8" y="1164.8999999999999" font-family='"Liberation Sans", sans-serif' font-size="17" fill="#1a0500" stroke="#1a0500" stroke-width="0.15" textLength="108" lengthAdjust="spacingAndGlyphs">blocked 1 RU</text><rect x="691.5" y="130.4" width="33.5" height="456.2" fill="#6666ff" stroke="#333" stroke-width="1"/><text x="707.0" y="173.4" font-family='"Liberation Sans", sans-serif' font-size="20" fill="#000" text-anchor="middle">24</text><text x="707.0" y="227.9" font-family='"Liberation Sans", sans-serif' font-size="30" fill="#000" text-anchor="middle">P</text><text x="707.0" y="273.5" font-family='"Liberation Sans", sans-serif' font-size="30" fill="#000" text-anchor="middle">D</text><text x="707.0" y="319.1" font-family='"Liberation Sans", sans-serif' font-size="30" fill="#000" text-anchor="middle">U</text><rect x="691.5" y="689.1999999999999" width="33.5" height="456.2" fill="#6666ff" stroke="#333" stroke-width="1"/><text x="707.0" y="732.1999999999999" font-family='"Liberation Sans", sans-serif' font-size="20" fill="#000" text-anchor="middle">24</text><text x="707.0" y="786.7" font-family='"Liberation Sans", sans-serif' font-size="30" fill="#000" text-anchor="middle">P</text><text x="707.0" y="832.3" font-family='"Liberation Sans", sans-serif' font-size="30" fill="#000" text-anchor="middle">D</text><text x="707.0" y="877.9" font-family='"Liberation Sans", sans-serif' font-size="30" fill="#000" text-anchor="middle">U</text><rect x="1057.0" y="130.4" width="33.5" height="456.2" fill="#ff9933" stroke="#333" stroke-width="1"/><text x="1072.5" y="173.4" font-family='"Liberation Sans", sans-serif' font-size="20" fill="#000" text-anchor="middle">24</text><text x="1072.5" y="227.9" font-family='"Liberation Sans", sans-serif' font-size="30" fill="#000" text-anchor="middle">P</text><text x="1072.5" y="273.5" font-family='"Liberation Sans", sans-serif' font-size="30" fill="#000" text-anchor="middle">D</text><text x="1072.5" y="319.1" font-family='"Liberation Sans", sans-serif' font-size="30" fill="#000" text-anchor="middle">U</text><rect x="1057.0" y="689.1999999999999" width="33.5" height="456.2" fill="#ff9933" stroke="#333" stroke-width="1"/><text x="1072.5" y="732.1999999999999" font-family='"Liberation Sans", sans-serif' font-size="20" fill="#000" text-anchor="middle">24</text><text x="1072.5" y="786.7" font-family='"Liberation Sans", sans-serif' font-size="30" fill="#000" text-anchor="middle">P</text><text x="1072.5" y="832.3" font-family='"Liberation Sans", sans-serif' font-size="30" fill="#000" text-anchor="middle">D</text><text x="1072.5" y="877.9" font-family='"Liberation Sans", sans-serif' font-size="30" fill="#000" text-anchor="middle">U</text><rect x="629.5" y="65.5" width="138" height="28" fill="#ffffff" stroke="#767676" stroke-width="1"/><text x="638.5" y="85" font-family='"Liberation Sans", sans-serif' font-size="15" fill="#000">Display both sides</text><g transform="translate(610,30)"><path d="M18.6 25.5 L18.6 10.5 C18.6 7.6 22.9 7.6 22.9 10.5 L22.9 16.5 C23.5 14.6 26.6 14.6 27 16.8 C27.6 15.3 30.6 15.3 31 17.5 C31.8 16.1 34.6 16.4 34.6 19.5 L34.6 29 C34.6 34 32 38.5 25.5 38.5 C21 38.5 19.5 35.5 17 32.5 L12.5 27.2 C11 25.3 13.5 22.8 16 24.5 Z" fill="#fff" stroke="#111" stroke-width="1.4" stroke-linejoin="round"/><path d="M22.9 16 V22 M27 16.8 V22.5 M31 17.5 V22.5" stroke="#111" stroke-width="1"/></g></svg></body></html>
